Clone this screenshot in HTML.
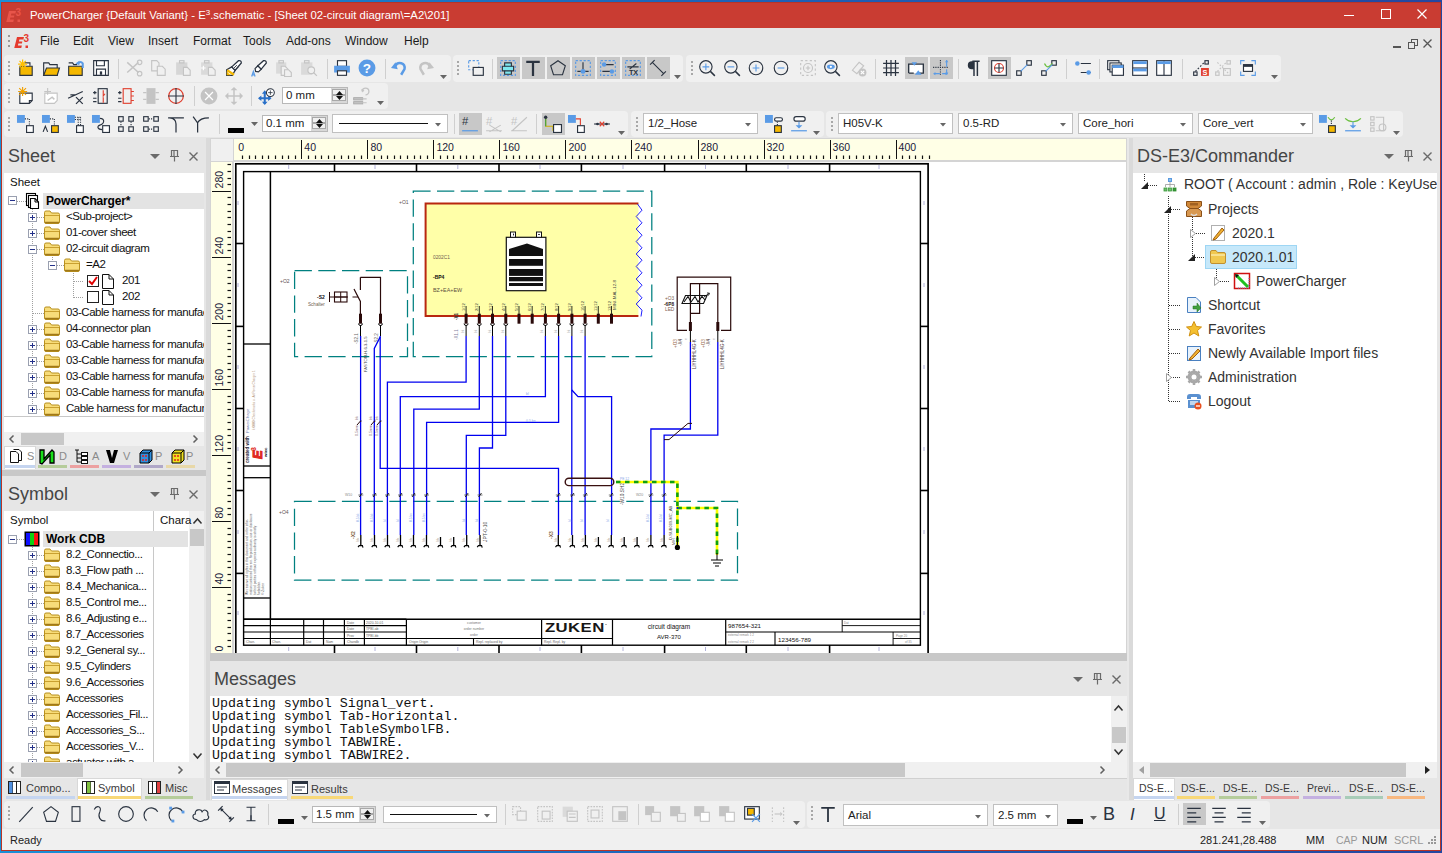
<!DOCTYPE html>
<html><head><meta charset="utf-8"><style>
html,body{margin:0;padding:0;width:1442px;height:853px;overflow:hidden;font-family:"Liberation Sans", sans-serif;}
body{background:linear-gradient(90deg,#1a8fd6 0%,#1e62b8 50%,#2447a0 100%);position:relative;}
svg{overflow:visible}
</style></head><body>
<div style="position:absolute;left:1px;top:2px;width:1440px;height:849px;background:#b83428;"></div><div style="position:absolute;left:2px;top:3px;width:1438px;height:847px;background:#e6e6e6;"></div><div style="position:absolute;left:2px;top:3px;width:1438px;height:25px;background:#c93c32;"></div><div style="position:absolute;left:30px;top:10.2px;font-size:11.35px;line-height:11.35px;color:#fff;white-space:nowrap;">PowerCharger {Default Variant} - E<sup style="font-size:8px;vertical-align:4px;line-height:0">3</sup>.schematic - [Sheet 02-circuit diagram\=A2\201]</div><svg style="position:absolute;left:5px;top:7px;" width="18" height="17" viewBox="0 0 18 17"><g transform="skewX(-14)"><path d="M5 4H12V6.5H8V8.5H11.5V10.5H8V12.5H12V15H5Z" fill="#e8554a"/></g><text x="10.5" y="9" font-size="10" font-weight="bold" fill="#e8554a" font-family="Liberation Sans">3</text><rect x="12.5" y="12.5" width="2.5" height="2.5" fill="#e8554a"/></svg><div style="position:absolute;left:1344px;top:15px;width:10px;height:1px;background:#fff;"></div><div style="position:absolute;left:1381px;top:9px;width:10px;height:10px;border:1px solid #fff;box-sizing:border-box;"></div><svg style="position:absolute;left:1417px;top:9px;" width="10" height="10" viewBox="0 0 10 10"><path d="M0.5 0.5L9.5 9.5M9.5 0.5L0.5 9.5" stroke="#fff" stroke-width="1.2"/></svg><div style="position:absolute;left:8px;top:35px;width:2px;height:2px;background:#999;"></div><div style="position:absolute;left:8px;top:40px;width:2px;height:2px;background:#999;"></div><div style="position:absolute;left:8px;top:45px;width:2px;height:2px;background:#999;"></div><svg style="position:absolute;left:13px;top:33px;" width="18" height="17" viewBox="0 0 18 17"><g transform="skewX(-14)"><path d="M5 4H12V6.5H8V8.5H11.5V10.5H8V12.5H12V15H5Z" fill="#e53b2e"/></g><text x="10.5" y="9" font-size="10" font-weight="bold" fill="#e53b2e" font-family="Liberation Sans">3</text><rect x="12.5" y="12.5" width="2.5" height="2.5" fill="#e53b2e"/></svg><div style="position:absolute;left:40px;top:35px;font-size:12px;line-height:12px;color:#1a1a1a;white-space:nowrap;">File</div><div style="position:absolute;left:73px;top:35px;font-size:12px;line-height:12px;color:#1a1a1a;white-space:nowrap;">Edit</div><div style="position:absolute;left:108px;top:35px;font-size:12px;line-height:12px;color:#1a1a1a;white-space:nowrap;">View</div><div style="position:absolute;left:148px;top:35px;font-size:12px;line-height:12px;color:#1a1a1a;white-space:nowrap;">Insert</div><div style="position:absolute;left:193px;top:35px;font-size:12px;line-height:12px;color:#1a1a1a;white-space:nowrap;">Format</div><div style="position:absolute;left:243px;top:35px;font-size:12px;line-height:12px;color:#1a1a1a;white-space:nowrap;">Tools</div><div style="position:absolute;left:286px;top:35px;font-size:12px;line-height:12px;color:#1a1a1a;white-space:nowrap;">Add-ons</div><div style="position:absolute;left:345px;top:35px;font-size:12px;line-height:12px;color:#1a1a1a;white-space:nowrap;">Window</div><div style="position:absolute;left:404px;top:35px;font-size:12px;line-height:12px;color:#1a1a1a;white-space:nowrap;">Help</div><div style="position:absolute;left:1393px;top:46px;width:8px;height:2px;background:#555;"></div><div style="position:absolute;left:1411px;top:39px;width:7px;height:7px;border:1px solid #555;box-sizing:border-box;"></div><div style="position:absolute;left:1408px;top:42px;width:7px;height:7px;border:1px solid #555;box-sizing:border-box;background:#e6e6e6;"></div><svg style="position:absolute;left:1423px;top:39px;" width="9" height="9" viewBox="0 0 9 9"><path d="M0.5 0.5L8.5 8.5M8.5 0.5L0.5 8.5" stroke="#555" stroke-width="1.3"/></svg><div style="position:absolute;left:4px;top:55px;width:447px;height:27px;background:#f0f0f0;border-radius:4px;"></div><div style="position:absolute;left:8px;top:61px;width:2px;height:2px;background:#a8a8a8;"></div><div style="position:absolute;left:8px;top:65px;width:2px;height:2px;background:#a8a8a8;"></div><div style="position:absolute;left:8px;top:69px;width:2px;height:2px;background:#a8a8a8;"></div><div style="position:absolute;left:8px;top:73px;width:2px;height:2px;background:#a8a8a8;"></div><svg style="position:absolute;left:18px;top:60px;overflow:visible" width="16" height="16" viewBox="0.9 0.9 14.2 14.2"><path d="M6.5 3.5H11.5V6" fill="#fff" stroke="#2a3340" stroke-width="1"/><path d="M2.5 6.5H13.5V14.5H2.5Z" fill="#f5b800" stroke="#2a3340" stroke-width="1"/><path d="M5 0.5V8.5M1 4.5H9M2.2 1.7L7.8 7.3M7.8 1.7L2.2 7.3" stroke="#ffc000" stroke-width="1.1"/></svg><svg style="position:absolute;left:43px;top:60px;overflow:visible" width="16" height="16" viewBox="0.9 0.9 14.2 14.2"><path d="M1.5 3.5H6L7 5H13.5V14.5H1.5Z" fill="none" stroke="#2a3340"/><path d="M1.5 14.5L4 8H15.5L13.5 14.5Z" fill="#f5b800" stroke="#2a3340"/></svg><svg style="position:absolute;left:68px;top:60px;overflow:visible" width="16" height="16" viewBox="0.9 0.9 14.2 14.2"><path d="M1.5 3.5H5L6 5H9" fill="#fff" stroke="#2a3340" stroke-width="1"/><path d="M1.5 6.5H13.5V14.5H1.5Z" fill="#f5b800" stroke="#2a3340" stroke-width="1"/><path d="M10 4Q12 1.5 14 4V8" stroke="#5a9be6" stroke-width="1.8" fill="none"/><path d="M7.5 4L11 1.5V5.5Z" fill="#5a9be6"/></svg><svg style="position:absolute;left:93px;top:60px;overflow:visible" width="16" height="16" viewBox="0.9 0.9 14.2 14.2"><path d="M1.5 1.5H14.5V14.5H1.5Z" fill="#fff" stroke="#2a3340" stroke-width="1"/><path d="M4 1.5V6H11V1.5M4 14.5V9H12V14.5" fill="none" stroke="#2a3340" stroke-width="1"/><rect x="7" y="11" width="2" height="3" fill="#2a3340"/></svg><svg style="position:absolute;left:126px;top:60px;overflow:visible" width="16" height="16" viewBox="0.9 0.9 14.2 14.2"><path d="M2 3L12 12M2 12L12 3" stroke="#c4c4c4" stroke-width="1.3"/><circle cx="13" cy="3" r="2" fill="none" stroke="#c4c4c4"/><circle cx="13" cy="13" r="2" fill="none" stroke="#c4c4c4"/></svg><svg style="position:absolute;left:151px;top:60px;overflow:visible" width="16" height="16" viewBox="0.9 0.9 14.2 14.2"><path d="M1.5 1.5H6L8 3.5V10.5H1.5Z" fill="none" stroke="#c4c4c4"/><path d="M6.5 6.5H11L13.5 9V14.5H6.5Z" fill="#f0f0f0" stroke="#c4c4c4"/></svg><svg style="position:absolute;left:176px;top:60px;overflow:visible" width="16" height="16" viewBox="0.9 0.9 14.2 14.2"><rect x="1" y="3" width="10" height="11" fill="#c4c4c4" opacity=".6"/><rect x="4" y="1.5" width="4" height="2" fill="none" stroke="#c4c4c4"/><path d="M7.5 7.5H11L13.5 10V14.5H7.5Z" fill="#f0f0f0" stroke="#c4c4c4"/></svg><svg style="position:absolute;left:201px;top:60px;overflow:visible" width="16" height="16" viewBox="0.9 0.9 14.2 14.2"><rect x="1" y="3" width="10" height="11" fill="#c4c4c4" opacity=".5"/><rect x="4" y="1.5" width="4" height="2" fill="none" stroke="#c4c4c4"/><path d="M3 6V10M1 8H5" stroke="#fff"/><path d="M7.5 7.5H11L13.5 10V14.5H7.5Z" fill="#f0f0f0" stroke="#c4c4c4"/></svg><svg style="position:absolute;left:226px;top:60px;overflow:visible" width="16" height="16" viewBox="0.9 0.9 14.2 14.2"><path d="M1.5 9.5L6 7L9 10L6.5 14.5H1.5Z" fill="#fff" stroke="#2a3340" stroke-width="1.1"/><path d="M1.5 14.5V11L5 14.5Z" fill="#f5b800"/><path d="M2 10L8 14" stroke="#f5b800" stroke-width="2"/><path d="M6 7L12 1.5Q14.5 1 14.5 3.5L9 10Z" fill="#fff" stroke="#2a3340" stroke-width="1.1"/><path d="M7.5 8.5L10.5 5.5M9 10L12 7" stroke="#2a3340" stroke-width=".8"/></svg><svg style="position:absolute;left:251px;top:60px;overflow:visible" width="16" height="16" viewBox="0.9 0.9 14.2 14.2"><path d="M4.5 8.5L7 6L10 9L7.5 11.5L5 11Z" fill="#fff" stroke="#2a3340" stroke-width="1.1"/><path d="M7 6L12 1.5Q14.5 1 14.5 3.5L10 9Z" fill="#fff" stroke="#2a3340" stroke-width="1.1"/><path d="M1.5 15.5L3 11L4.5 15.5M2 14H4" stroke="#5a9be6" fill="none" stroke-width="1.1"/></svg><svg style="position:absolute;left:276px;top:60px;overflow:visible" width="16" height="16" viewBox="0.9 0.9 14.2 14.2"><rect x="1" y="3" width="9" height="10" fill="#c4c4c4" opacity=".5"/><rect x="3.5" y="1.5" width="4" height="2" fill="none" stroke="#c4c4c4"/><path d="M5.5 6.5H9L11.5 9V14.5H5.5Z" fill="#f0f0f0" stroke="#c4c4c4"/><path d="M8.5 9.5H12L14.5 12V15.5H8.5Z" fill="#f0f0f0" stroke="#c4c4c4"/></svg><svg style="position:absolute;left:301px;top:60px;overflow:visible" width="16" height="16" viewBox="0.9 0.9 14.2 14.2"><rect x="1" y="3" width="10" height="11" fill="#c4c4c4" opacity=".5"/><rect x="4" y="1.5" width="4" height="2" fill="none" stroke="#c4c4c4"/><circle cx="10" cy="10" r="3" fill="#f0f0f0" stroke="#c4c4c4" stroke-width="1"/><path d="M12 12L15 15" stroke="#c4c4c4" stroke-width="1.1"/></svg><svg style="position:absolute;left:334px;top:60px;overflow:visible" width="16" height="16" viewBox="0.9 0.9 14.2 14.2"><rect x="4" y="1.5" width="8" height="5" fill="#fff" stroke="#2a3340" stroke-width="1"/><rect x="1" y="6" width="14" height="6" fill="#5a9be6"/><rect x="4" y="10.5" width="8" height="4" fill="#fff" stroke="#2a3340" stroke-width="1"/></svg><svg style="position:absolute;left:359px;top:60px;overflow:visible" width="16" height="16" viewBox="0.9 0.9 14.2 14.2"><circle cx="8" cy="8" r="7.5" fill="#5a9be6"/><text x="8" y="12.5" font-size="12" font-weight="bold" text-anchor="middle" fill="#fff" font-family="Liberation Sans">?</text></svg><svg style="position:absolute;left:392px;top:60px;overflow:visible" width="16" height="16" viewBox="0.9 0.9 14.2 14.2"><path d="M4 6C6 2 13 3 12 9L9 14" stroke="#5a9be6" stroke-width="2.2" fill="none"/><path d="M0 8L6 9L4 3Z" fill="#5a9be6"/></svg><svg style="position:absolute;left:417px;top:60px;overflow:visible" width="16" height="16" viewBox="0.9 0.9 14.2 14.2"><path d="M12 6C10 2 3 3 4 9L7 14" stroke="#c4c4c4" stroke-width="2.2" fill="none"/><path d="M16 8L10 9L12 3Z" fill="#c4c4c4"/></svg><div style="position:absolute;left:118px;top:59px;width:1px;height:20px;background:#cfcfcf;"></div><div style="position:absolute;left:327px;top:59px;width:1px;height:20px;background:#cfcfcf;"></div><div style="position:absolute;left:385px;top:59px;width:1px;height:20px;background:#cfcfcf;"></div><svg style="position:absolute;left:440px;top:75px;" width="7" height="4" viewBox="0 0 7 4"><path d="M0 0H7L3.5 4.0Z" fill="#666"/></svg><div style="position:absolute;left:453px;top:55px;width:230px;height:27px;background:#f0f0f0;border-radius:4px;"></div><div style="position:absolute;left:457px;top:61px;width:2px;height:2px;background:#a8a8a8;"></div><div style="position:absolute;left:457px;top:65px;width:2px;height:2px;background:#a8a8a8;"></div><div style="position:absolute;left:457px;top:69px;width:2px;height:2px;background:#a8a8a8;"></div><div style="position:absolute;left:457px;top:73px;width:2px;height:2px;background:#a8a8a8;"></div><svg style="position:absolute;left:468px;top:60px;overflow:visible" width="16" height="16" viewBox="0.9 0.9 14.2 14.2"><rect x="1.5" y="1.5" width="9" height="8" fill="none" stroke="#5a9be6" stroke-dasharray="2 1.5"/><rect x="5.5" y="7.5" width="9" height="7" fill="#f0f0f0" stroke="#2a3340" stroke-width="1"/></svg><div style="position:absolute;left:492px;top:59px;width:1px;height:20px;background:#cfcfcf;"></div><div style="position:absolute;left:497px;top:57px;width:23px;height:22px;background:#c8c8c8;"></div><svg style="position:absolute;left:500px;top:60px;overflow:visible" width="16" height="16" viewBox="0.9 0.9 14.2 14.2"><rect x="1.5" y="1.5" width="13" height="13" fill="none" stroke="#5a9be6" stroke-dasharray="2 1.5"/><path d="M5 3.5H11V6.5H13V10.5H11V13.5H5V10.5H3V6.5H5Z" fill="#7ee8f0" stroke="#2a3340" stroke-width="1"/><path d="M5 6.5H11M5 10.5H11" stroke="#2a3340"/></svg><div style="position:absolute;left:522px;top:57px;width:23px;height:22px;background:#c8c8c8;"></div><svg style="position:absolute;left:525px;top:60px;overflow:visible" width="16" height="16" viewBox="0.9 0.9 14.2 14.2"><path d="M2 2.5H14M8 2.5V15" stroke="#2a3340" stroke-width="2"/></svg><div style="position:absolute;left:547px;top:57px;width:23px;height:22px;background:#c8c8c8;"></div><svg style="position:absolute;left:550px;top:60px;overflow:visible" width="16" height="16" viewBox="0.9 0.9 14.2 14.2"><path d="M8 1.5L14.5 6L12 14H4L1.5 6Z" fill="none" stroke="#2a3340" stroke-width="1"/></svg><div style="position:absolute;left:572px;top:57px;width:23px;height:22px;background:#c8c8c8;"></div><svg style="position:absolute;left:575px;top:60px;overflow:visible" width="16" height="16" viewBox="0.9 0.9 14.2 14.2"><rect x="1.5" y="1.5" width="13" height="13" fill="none" stroke="#5a9be6" stroke-dasharray="2 1.5"/><path d="M8 3V11M3 11H13" stroke="#2a3340"/><circle cx="8" cy="11" r="2.2" fill="#5a9be6"/></svg><div style="position:absolute;left:597px;top:57px;width:23px;height:22px;background:#c8c8c8;"></div><svg style="position:absolute;left:600px;top:60px;overflow:visible" width="16" height="16" viewBox="0.9 0.9 14.2 14.2"><rect x="1.5" y="1.5" width="13" height="13" fill="none" stroke="#5a9be6" stroke-dasharray="2 1.5"/><path d="M4 5H13M3 11H12" stroke="#2a3340"/><circle cx="4.5" cy="5" r="2" fill="#5a9be6"/><circle cx="11.5" cy="11" r="2" fill="#5a9be6"/></svg><div style="position:absolute;left:622px;top:57px;width:23px;height:22px;background:#c8c8c8;"></div><svg style="position:absolute;left:625px;top:60px;overflow:visible" width="16" height="16" viewBox="0.9 0.9 14.2 14.2"><rect x="1.5" y="1.5" width="13" height="13" fill="none" stroke="#5a9be6" stroke-dasharray="2 1.5"/><path d="M3 7H13M5 9L11 4" stroke="#2a3340"/><text x="8.5" y="14" font-size="6.5" font-weight="bold" text-anchor="middle" fill="#2a3340" font-family="Liberation Sans">TX</text></svg><div style="position:absolute;left:647px;top:57px;width:23px;height:22px;background:#c8c8c8;"></div><svg style="position:absolute;left:650px;top:60px;overflow:visible" width="16" height="16" viewBox="0.9 0.9 14.2 14.2"><path d="M3 3L13 13M1 5L5 1M11 15L15 11" stroke="#2a3340" stroke-width="1"/></svg><svg style="position:absolute;left:674px;top:75px;" width="7" height="4" viewBox="0 0 7 4"><path d="M0 0H7L3.5 4.0Z" fill="#666"/></svg><div style="position:absolute;left:686px;top:55px;width:595px;height:27px;background:#f0f0f0;border-radius:4px;"></div><div style="position:absolute;left:691px;top:61px;width:2px;height:2px;background:#a8a8a8;"></div><div style="position:absolute;left:691px;top:65px;width:2px;height:2px;background:#a8a8a8;"></div><div style="position:absolute;left:691px;top:69px;width:2px;height:2px;background:#a8a8a8;"></div><div style="position:absolute;left:691px;top:73px;width:2px;height:2px;background:#a8a8a8;"></div><svg style="position:absolute;left:699px;top:60px;overflow:visible" width="16" height="16" viewBox="0.9 0.9 14.2 14.2"><circle cx="7" cy="7" r="5.5" fill="none" stroke="#2a3340" stroke-width="1"/><path d="M11 11L15 15" stroke="#2a3340" stroke-width="1.3"/><path d="M7 4V10M4 7H10" stroke="#5a9be6" stroke-width="1"/></svg><svg style="position:absolute;left:724px;top:60px;overflow:visible" width="16" height="16" viewBox="0.9 0.9 14.2 14.2"><circle cx="7" cy="7" r="5.5" fill="none" stroke="#2a3340" stroke-width="1"/><path d="M11 11L15 15" stroke="#2a3340" stroke-width="1.3"/><path d="M4 7H10" stroke="#5a9be6" stroke-width="1"/></svg><svg style="position:absolute;left:748px;top:60px;overflow:visible" width="16" height="16" viewBox="0.9 0.9 14.2 14.2"><circle cx="8" cy="8" r="6" fill="none" stroke="#2a3340" stroke-width="1"/><path d="M8 5V11M5 8H11" stroke="#5a9be6" stroke-width="1"/></svg><svg style="position:absolute;left:773px;top:60px;overflow:visible" width="16" height="16" viewBox="0.9 0.9 14.2 14.2"><circle cx="8" cy="8" r="6" fill="none" stroke="#2a3340" stroke-width="1"/><path d="M5 8H11" stroke="#5a9be6" stroke-width="1"/></svg><svg style="position:absolute;left:800px;top:60px;overflow:visible" width="16" height="16" viewBox="0.9 0.9 14.2 14.2"><rect x="1.5" y="1.5" width="13" height="13" fill="none" stroke="#c4c4c4" stroke-dasharray="2 2"/><circle cx="8" cy="8" r="4" fill="none" stroke="#c4c4c4"/><path d="M8 6V10M6 8H10" stroke="#c4c4c4"/></svg><svg style="position:absolute;left:824px;top:60px;overflow:visible" width="16" height="16" viewBox="0.9 0.9 14.2 14.2"><circle cx="7" cy="7" r="5.5" fill="none" stroke="#2a3340" stroke-width="1"/><path d="M11 11L15 15" stroke="#2a3340" stroke-width="1.3"/><ellipse cx="7" cy="7" rx="3.5" ry="2" fill="#5a9be6"/><circle cx="7" cy="7" r="1" fill="#fff"/></svg><svg style="position:absolute;left:850px;top:60px;overflow:visible" width="16" height="16" viewBox="0.9 0.9 14.2 14.2"><path d="M3 10L9 3L13 6L7 13Z" fill="none" stroke="#c4c4c4" stroke-width="1"/><circle cx="12" cy="12" r="3.5" fill="#c4c4c4"/><path d="M10.5 10.5L13.5 13.5M13.5 10.5L10.5 13.5" stroke="#fff"/></svg><svg style="position:absolute;left:883px;top:60px;overflow:visible" width="16" height="16" viewBox="0.9 0.9 14.2 14.2"><path d="M1 4H15M1 8H15M1 12H15M4 1V15M8 1V15M12 1V15" stroke="#2a3340" stroke-width="1.1"/></svg><div style="position:absolute;left:875px;top:59px;width:1px;height:20px;background:#cfcfcf;"></div><div style="position:absolute;left:905px;top:57px;width:23px;height:22px;background:#c8c8c8;"></div><svg style="position:absolute;left:908px;top:60px;overflow:visible" width="16" height="16" viewBox="0.9 0.9 14.2 14.2"><path d="M1.5 12.5V4.5H14.5V12.5H10M6 12.5H1.5" fill="#fff" stroke="#2a3340" stroke-width="1.2"/><path d="M4 3H9L6.5 6Z" fill="#5a9be6"/><path d="M7 14H13L10 10Z" fill="#5a9be6"/></svg><div style="position:absolute;left:930px;top:57px;width:23px;height:22px;background:#c8c8c8;"></div><svg style="position:absolute;left:933px;top:60px;overflow:visible" width="16" height="16" viewBox="0.9 0.9 14.2 14.2"><path d="M1 7.5H14M7.5 1V14" stroke="#2a3340" stroke-dasharray="1 1"/><path d="M13 1V7M13 9V14M2 13H7M9 13H14" stroke="#5a9be6"/><path d="M11.5 3L13 1L14.5 3ZM11.5 12L13 14L14.5 12ZM3 11.5L1 13L3 14.5ZM12 11.5L14 13L12 14.5Z" fill="#5a9be6"/></svg><div style="position:absolute;left:958px;top:59px;width:1px;height:20px;background:#cfcfcf;"></div><svg style="position:absolute;left:966px;top:60px;overflow:visible" width="16" height="16" viewBox="0.9 0.9 14.2 14.2"><path d="M8 2V15M11 2V15M13 2H6.5" stroke="#2a3340" stroke-width="1.3" fill="none"/><path d="M8 2H6A3.5 3.5 0 0 0 6 9H8Z" fill="#2a3340"/></svg><div style="position:absolute;left:988px;top:57px;width:23px;height:22px;background:#c8c8c8;"></div><svg style="position:absolute;left:991px;top:60px;overflow:visible" width="16" height="16" viewBox="0.9 0.9 14.2 14.2"><rect x="1.5" y="1.5" width="13" height="13" fill="#fff" stroke="#2a3340" stroke-width="1"/><circle cx="8" cy="8" r="4" fill="none" stroke="#e04030" stroke-width="1"/><path d="M8 4V12M4 8H12" stroke="#2a3340"/></svg><svg style="position:absolute;left:1016px;top:60px;overflow:visible" width="16" height="16" viewBox="0.9 0.9 14.2 14.2"><rect x="1.5" y="10.5" width="4" height="4" fill="none" stroke="#2a3340"/><rect x="10.5" y="1.5" width="4" height="4" fill="none" stroke="#2a3340"/><path d="M5 11L11 5" stroke="#5a9be6" stroke-width="1"/></svg><svg style="position:absolute;left:1041px;top:60px;overflow:visible" width="16" height="16" viewBox="0.9 0.9 14.2 14.2"><rect x="1.5" y="10.5" width="4" height="4" fill="none" stroke="#2a3340"/><rect x="10.5" y="1.5" width="4" height="4" fill="none" stroke="#2a3340"/><path d="M4 4C6 8 8 8 11 4" stroke="#6cbf40" stroke-width="1.1" fill="none"/><path d="M5 11L11 5" stroke="#5a9be6" stroke-width="1"/></svg><svg style="position:absolute;left:1075px;top:60px;overflow:visible" width="16" height="16" viewBox="0.9 0.9 14.2 14.2"><path d="M6 4H15M6 12H15" stroke="#2a3340" stroke-width="1"/><circle cx="3" cy="4" r="2" fill="#5a9be6"/><circle cx="13" cy="12" r="2" fill="#5a9be6"/></svg><svg style="position:absolute;left:1107px;top:60px;overflow:visible" width="16" height="16" viewBox="0.9 0.9 14.2 14.2"><rect x="1.5" y="1.5" width="10" height="8" fill="#fff" stroke="#2a3340" stroke-width="1"/><rect x="3.5" y="3.5" width="10" height="8" fill="#fff" stroke="#2a3340" stroke-width="1"/><rect x="5.5" y="5.5" width="10" height="9" fill="#fff" stroke="#2a3340" stroke-width="1"/><rect x="5.5" y="5.5" width="10" height="2.5" fill="#5a9be6"/></svg><svg style="position:absolute;left:1132px;top:60px;overflow:visible" width="16" height="16" viewBox="0.9 0.9 14.2 14.2"><rect x="1.5" y="1.5" width="13" height="13" fill="#fff" stroke="#2a3340" stroke-width="1"/><path d="M1.5 8H14.5" stroke="#2a3340" stroke-width="1"/><rect x="2" y="2" width="12" height="2.5" fill="#5a9be6"/><rect x="2" y="8.5" width="12" height="2.5" fill="#5a9be6"/></svg><svg style="position:absolute;left:1156px;top:60px;overflow:visible" width="16" height="16" viewBox="0.9 0.9 14.2 14.2"><rect x="1.5" y="1.5" width="13" height="13" fill="#fff" stroke="#2a3340" stroke-width="1"/><path d="M8 1.5V14.5" stroke="#2a3340" stroke-width="1"/><rect x="2" y="2" width="12" height="2.5" fill="#5a9be6"/></svg><svg style="position:absolute;left:1193px;top:60px;overflow:visible" width="16" height="16" viewBox="0.9 0.9 14.2 14.2"><rect x="1.5" y="11.5" width="3" height="3" fill="none" stroke="#2a3340"/><rect x="11.5" y="1.5" width="3" height="3" fill="none" stroke="#2a3340"/><path d="M3 11L11 3" stroke="#2a3340" stroke-dasharray="1.5 1.5"/><rect x="8" y="8" width="7" height="7" fill="#e04030"/><text x="11.5" y="14" font-size="6.5" font-weight="bold" text-anchor="middle" fill="#fff" font-family="Liberation Sans">S</text></svg><svg style="position:absolute;left:1215px;top:60px;overflow:visible" width="16" height="16" viewBox="0.9 0.9 14.2 14.2"><rect x="1.5" y="11.5" width="3" height="3" fill="none" stroke="#c4c4c4"/><rect x="11.5" y="1.5" width="3" height="3" fill="none" stroke="#c4c4c4"/><path d="M3 3L13 13M3 11L11 3" stroke="#c4c4c4" stroke-dasharray="1.5 1.5"/><rect x="8.5" y="8.5" width="6" height="6" fill="none" stroke="#c4c4c4"/></svg><svg style="position:absolute;left:1240px;top:60px;overflow:visible" width="16" height="16" viewBox="0.9 0.9 14.2 14.2"><path d="M1.5 5V1.5H5M11 1.5H14.5V5M14.5 11V14.5H11M5 14.5H1.5V11" fill="none" stroke="#5a9be6" stroke-width="1"/><rect x="4" y="5" width="8" height="6" fill="#fff" stroke="#2a3340" stroke-width="1"/><rect x="4" y="5" width="8" height="2" fill="#2a3340"/></svg><div style="position:absolute;left:1066px;top:59px;width:1px;height:20px;background:#cfcfcf;"></div><div style="position:absolute;left:1099px;top:59px;width:1px;height:20px;background:#cfcfcf;"></div><div style="position:absolute;left:1182px;top:59px;width:1px;height:20px;background:#cfcfcf;"></div><svg style="position:absolute;left:1271px;top:75px;" width="7" height="4" viewBox="0 0 7 4"><path d="M0 0H7L3.5 4.0Z" fill="#666"/></svg><div style="position:absolute;left:4px;top:83px;width:384px;height:26px;background:#f0f0f0;border-radius:4px;"></div><div style="position:absolute;left:8px;top:89px;width:2px;height:2px;background:#a8a8a8;"></div><div style="position:absolute;left:8px;top:93px;width:2px;height:2px;background:#a8a8a8;"></div><div style="position:absolute;left:8px;top:97px;width:2px;height:2px;background:#a8a8a8;"></div><div style="position:absolute;left:8px;top:101px;width:2px;height:2px;background:#a8a8a8;"></div><svg style="position:absolute;left:18px;top:88px;overflow:visible" width="16" height="16" viewBox="0.9 0.9 14.2 14.2"><path d="M2.5 5.5H13.5V12L11 14.5H2.5Z" fill="#fff" stroke="#2a3340" stroke-width="1"/><path d="M11 14.5V12H13.5" fill="none" stroke="#2a3340"/><path d="M5 0V8M1 4H9M2 1L8 7M8 1L2 7" stroke="#f0a000" stroke-width="1"/></svg><svg style="position:absolute;left:43px;top:88px;overflow:visible" width="16" height="16" viewBox="0.9 0.9 14.2 14.2"><path d="M2.5 5.5H13.5V12L11 14.5H2.5Z" fill="#fff" stroke="#c4c4c4" stroke-width="1"/><path d="M5 1V7M2 4H8" stroke="#c4c4c4"/><path d="M5 12L9 9L11 11" stroke="#c4c4c4" stroke-width="1.3" fill="none"/></svg><svg style="position:absolute;left:68px;top:88px;overflow:visible" width="16" height="16" viewBox="0.9 0.9 14.2 14.2"><path d="M1 10L14 4M3 7H8" stroke="#2a3340" stroke-width="1.1"/><path d="M8 9L14 15M14 9L8 15" stroke="#2a3340" stroke-width="1.1"/></svg><svg style="position:absolute;left:93px;top:88px;overflow:visible" width="16" height="16" viewBox="0.9 0.9 14.2 14.2"><rect x="5.5" y="1.5" width="8" height="13" fill="none" stroke="#2a3340" stroke-width="1"/><path d="M10 3V8L11.5 6M10 9V14" stroke="#e04030" stroke-width="1" fill="none"/><path d="M1 5H4M2.5 3.5V6.5M1 10H4M1 13H4" stroke="#2a3340"/></svg><svg style="position:absolute;left:118px;top:88px;overflow:visible" width="16" height="16" viewBox="0.9 0.9 14.2 14.2"><rect x="5.5" y="1.5" width="7" height="13" fill="none" stroke="#e04030" stroke-width="1"/><path d="M12.5 4H15M12.5 8H15M12.5 12H15" stroke="#e04030"/><path d="M1 5H4M2.5 3.5V6.5M1 10H4M1 13H4" stroke="#2a3340"/></svg><svg style="position:absolute;left:143px;top:88px;overflow:visible" width="16" height="16" viewBox="0.9 0.9 14.2 14.2"><rect x="4" y="1" width="8" height="14" fill="#c4c4c4"/><path d="M1 5H4M12 5H15M1 11H4M12 11H15" stroke="#c4c4c4"/></svg><svg style="position:absolute;left:168px;top:88px;overflow:visible" width="16" height="16" viewBox="0.9 0.9 14.2 14.2"><circle cx="8" cy="8" r="6.5" fill="none" stroke="#e04030" stroke-width="1.1"/><path d="M8 1V15M1 8H15" stroke="#2a3340" stroke-width="1"/></svg><svg style="position:absolute;left:201px;top:88px;overflow:visible" width="16" height="16" viewBox="0.9 0.9 14.2 14.2"><circle cx="8" cy="8" r="7.5" fill="#c4c4c4"/><path d="M4.5 4.5L11.5 11.5M11.5 4.5L4.5 11.5" stroke="#fff" stroke-width="1.1"/></svg><svg style="position:absolute;left:226px;top:88px;overflow:visible" width="16" height="16" viewBox="0.9 0.9 14.2 14.2"><path d="M8 1V15M1 8H15" stroke="#c4c4c4" stroke-width="1.3"/><path d="M8 0L5 3H11ZM8 16L5 13H11ZM0 8L3 5V11ZM16 8L13 5V11Z" fill="#c4c4c4"/></svg><svg style="position:absolute;left:259px;top:88px;overflow:visible" width="16" height="16" viewBox="0.9 0.9 14.2 14.2"><path d="M6 5V15M1 10H11" stroke="#2a70c8" stroke-width="1.8"/><path d="M6 3L3.5 6H8.5ZM6 16L3.5 13H8.5ZM0 10L3 7.5V12.5ZM12 10L9 7.5V12.5Z" fill="#2a70c8"/><circle cx="11" cy="5" r="3.5" fill="#fff" stroke="#2a3340" stroke-width=".9"/><path d="M11 3V7M9 5H13" stroke="#2a3340" stroke-width=".7"/></svg><svg style="position:absolute;left:353px;top:88px;overflow:visible" width="16" height="16" viewBox="0.9 0.9 14.2 14.2"><rect x="1.5" y="9.5" width="8" height="2" fill="#c4c4c4" stroke="#a8a8a8" stroke-width=".8"/><rect x="1.5" y="13" width="8" height="2" fill="#c4c4c4" stroke="#a8a8a8" stroke-width=".8"/><path d="M9 10.5H13M9 14H13" stroke="#c4c4c4"/><path d="M9 4A3 3 0 1 1 12 7" stroke="#c4c4c4" fill="none" stroke-width="1.2"/><path d="M8 2L9.5 5L11 3Z" fill="#c4c4c4"/></svg><div style="position:absolute;left:194px;top:86px;width:1px;height:20px;background:#cfcfcf;"></div><div style="position:absolute;left:251px;top:86px;width:1px;height:20px;background:#cfcfcf;"></div><div style="position:absolute;left:282px;top:87px;width:66px;height:17px;background:#fff;border:1px solid #b8b8b8;box-sizing:border-box;"></div><div style="position:absolute;left:286px;top:90.1px;font-size:11.5px;line-height:11.5px;color:#222;white-space:nowrap;">0 mm</div><div style="position:absolute;left:331px;top:88px;width:16px;height:15px;background:#d8d8d8;"></div><div style="position:absolute;left:332px;top:89px;width:14px;height:6px;background:#f0f0f0;border:1px solid #a8a8a8;box-sizing:border-box;"></div><div style="position:absolute;left:332px;top:95px;width:14px;height:6px;background:#f0f0f0;border:1px solid #a8a8a8;box-sizing:border-box;"></div><svg style="position:absolute;left:336px;top:91px;" width="7" height="4" viewBox="0 0 7 4"><path d="M0 4H7L3.5 0Z" fill="#111"/></svg><svg style="position:absolute;left:336px;top:96px;" width="7" height="4" viewBox="0 0 7 4"><path d="M0 0H7L3.5 4Z" fill="#111"/></svg><svg style="position:absolute;left:377px;top:101px;" width="7" height="4" viewBox="0 0 7 4"><path d="M0 0H7L3.5 4.0Z" fill="#666"/></svg><div style="position:absolute;left:4px;top:111px;width:624px;height:26px;background:#f0f0f0;border-radius:4px;"></div><div style="position:absolute;left:8px;top:117px;width:2px;height:2px;background:#a8a8a8;"></div><div style="position:absolute;left:8px;top:121px;width:2px;height:2px;background:#a8a8a8;"></div><div style="position:absolute;left:8px;top:125px;width:2px;height:2px;background:#a8a8a8;"></div><div style="position:absolute;left:8px;top:129px;width:2px;height:2px;background:#a8a8a8;"></div><svg style="position:absolute;left:18px;top:116px;overflow:visible" width="16" height="16" viewBox="0.9 0.9 14.2 14.2"><rect x="0" y="0" width="7" height="7" fill="#5a9be6"/><path d="M7 3.5H11V9" stroke="#2a3340" stroke-dasharray="1 1" fill="none"/><rect x="8.5" y="9.5" width="6" height="6" fill="#fff" stroke="#2a3340" stroke-width="1"/></svg><svg style="position:absolute;left:43px;top:116px;overflow:visible" width="16" height="16" viewBox="0.9 0.9 14.2 14.2"><rect x="0" y="0" width="7" height="7" fill="#5a9be6"/><path d="M7 3.5H11V9" stroke="#2a3340" stroke-dasharray="1 1" fill="none"/><rect x="8.5" y="9.5" width="6" height="6" fill="#f5b800" stroke="#2a3340" stroke-width="1"/><path d="M1 15L3 10L5 15" stroke="#2a3340" fill="none"/></svg><svg style="position:absolute;left:68px;top:116px;overflow:visible" width="16" height="16" viewBox="0.9 0.9 14.2 14.2"><rect x="0" y="0" width="7" height="7" fill="#5a9be6"/><path d="M7 2H12M7 4H12M10 2V9M12 2V9" stroke="#2a3340" stroke-dasharray="1 1" fill="none"/><rect x="8.5" y="9.5" width="6" height="6" fill="#fff" stroke="#2a3340" stroke-width="1"/></svg><svg style="position:absolute;left:93px;top:116px;overflow:visible" width="16" height="16" viewBox="0.9 0.9 14.2 14.2"><rect x="0" y="0" width="7" height="7" fill="#5a9be6"/><path d="M7 3C12 3 11 8 7 9C4 10 5 13 9 13" stroke="#2a3340" stroke-width="1" fill="none"/><rect x="9.5" y="9.5" width="6" height="6" fill="#fff" stroke="#2a3340" stroke-width="1"/></svg><svg style="position:absolute;left:118px;top:116px;overflow:visible" width="16" height="16" viewBox="0.9 0.9 14.2 14.2"><rect x="1.5" y="1.5" width="4" height="4" fill="none" stroke="#2a3340"/><rect x="10.5" y="1.5" width="4" height="4" fill="none" stroke="#2a3340"/><rect x="1.5" y="10.5" width="4" height="4" fill="none" stroke="#2a3340"/><rect x="10.5" y="10.5" width="4" height="4" fill="none" stroke="#2a3340"/><path d="M3.5 6V10M12.5 6V10" stroke="#2a3340" stroke-dasharray="1 1"/></svg><svg style="position:absolute;left:143px;top:116px;overflow:visible" width="16" height="16" viewBox="0.9 0.9 14.2 14.2"><rect x="1.5" y="1.5" width="4" height="4" fill="none" stroke="#2a3340"/><rect x="10.5" y="1.5" width="4" height="4" fill="none" stroke="#2a3340"/><rect x="1.5" y="10.5" width="4" height="4" fill="none" stroke="#2a3340"/><rect x="10.5" y="10.5" width="4" height="4" fill="none" stroke="#2a3340"/><path d="M6 3.5H10M6 12.5H10" stroke="#2a3340" stroke-dasharray="1 1"/></svg><svg style="position:absolute;left:168px;top:116px;overflow:visible" width="16" height="16" viewBox="0.9 0.9 14.2 14.2"><path d="M1 2.5H15M2.5 2.5Q8 3 8 8V15.5" stroke="#2a3340" stroke-width="1.1" fill="none"/></svg><svg style="position:absolute;left:193px;top:116px;overflow:visible" width="16" height="16" viewBox="0.9 0.9 14.2 14.2"><path d="M1 1.5L5 7V15.5M5 7Q7 2.5 15 2.5" stroke="#2a3340" stroke-width="1.1" fill="none"/></svg><div style="position:absolute;left:219px;top:114px;width:1px;height:20px;background:#cfcfcf;"></div><div style="position:absolute;left:228px;top:128px;width:16px;height:5px;background:#000;"></div><svg style="position:absolute;left:251px;top:122px;" width="7" height="4" viewBox="0 0 7 4"><path d="M0 0H7L3.5 4.0Z" fill="#666"/></svg><div style="position:absolute;left:262px;top:115px;width:66px;height:17px;background:#fff;border:1px solid #b8b8b8;box-sizing:border-box;"></div><div style="position:absolute;left:266px;top:118.1px;font-size:11.5px;line-height:11.5px;color:#222;white-space:nowrap;">0.1 mm</div><div style="position:absolute;left:311px;top:116px;width:16px;height:15px;background:#d8d8d8;"></div><div style="position:absolute;left:312px;top:117px;width:14px;height:6px;background:#f0f0f0;border:1px solid #a8a8a8;box-sizing:border-box;"></div><div style="position:absolute;left:312px;top:123px;width:14px;height:6px;background:#f0f0f0;border:1px solid #a8a8a8;box-sizing:border-box;"></div><svg style="position:absolute;left:316px;top:119px;" width="7" height="4" viewBox="0 0 7 4"><path d="M0 4H7L3.5 0Z" fill="#111"/></svg><svg style="position:absolute;left:316px;top:124px;" width="7" height="4" viewBox="0 0 7 4"><path d="M0 0H7L3.5 4Z" fill="#111"/></svg><div style="position:absolute;left:332px;top:114px;width:116px;height:19px;background:#fff;border:1px solid #c0c0c0;box-sizing:border-box;"></div><div style="position:absolute;left:339px;top:123px;width:89px;height:1px;background:#111;"></div><svg style="position:absolute;left:435px;top:123px;" width="6" height="4" viewBox="0 0 6 4"><path d="M0 0H6L3.0 3.4Z" fill="#666"/></svg><div style="position:absolute;left:454px;top:114px;width:1px;height:20px;background:#cfcfcf;"></div><div style="position:absolute;left:459px;top:113px;width:23px;height:22px;background:#c8c8c8;"></div><svg style="position:absolute;left:462px;top:116px;overflow:visible" width="16" height="16" viewBox="0.9 0.9 14.2 14.2"><text x="1" y="9" font-size="10" fill="#2a3340" font-family="Liberation Sans">#</text><path d="M1 14H15" stroke="#5a9be6" stroke-width="1.1"/></svg><svg style="position:absolute;left:486px;top:116px;overflow:visible" width="16" height="16" viewBox="0.9 0.9 14.2 14.2"><text x="1" y="9" font-size="10" fill="#c4c4c4" font-family="Liberation Sans">#</text><path d="M4 9L14 15M14 9L4 15M1 14H15" stroke="#c4c4c4"/></svg><svg style="position:absolute;left:511px;top:116px;overflow:visible" width="16" height="16" viewBox="0.9 0.9 14.2 14.2"><text x="1" y="9" font-size="10" fill="#c4c4c4" font-family="Liberation Sans">#</text><path d="M2 14L15 2M1 14H15" stroke="#c4c4c4"/></svg><div style="position:absolute;left:536px;top:114px;width:1px;height:20px;background:#cfcfcf;"></div><div style="position:absolute;left:542px;top:113px;width:23px;height:22px;background:#c8c8c8;"></div><svg style="position:absolute;left:545px;top:116px;overflow:visible" width="16" height="16" viewBox="0.9 0.9 14.2 14.2"><path d="M1.5 2V10H8V14" stroke="#d0b000" stroke-width="1" fill="none"/><path d="M1.5 2V10" stroke="#40a040" stroke-width="1"/><circle cx="1.5" cy="2" r="1.5" fill="#2a3340"/><rect x="8.5" y="8.5" width="7" height="7" fill="#fff" stroke="#2a3340" stroke-width="1"/></svg><svg style="position:absolute;left:569px;top:116px;overflow:visible" width="16" height="16" viewBox="0.9 0.9 14.2 14.2"><rect x="0" y="0" width="7" height="7" fill="#5a9be6"/><path d="M7 3.5H11V9" stroke="#e04030" stroke-width="1" fill="none"/><rect x="8.5" y="9.5" width="6" height="6" fill="#fff" stroke="#2a3340" stroke-width="1"/></svg><svg style="position:absolute;left:594px;top:116px;overflow:visible" width="16" height="16" viewBox="0.9 0.9 14.2 14.2"><path d="M1 8H15" stroke="#2a3340" stroke-width="1"/><path d="M6 6L10 10M10 6L6 10" stroke="#e04030" stroke-width="1"/><circle cx="4" cy="8" r="1.2" fill="#2a3340"/><circle cx="12" cy="8" r="1.2" fill="#2a3340"/></svg><svg style="position:absolute;left:618px;top:131px;" width="7" height="4" viewBox="0 0 7 4"><path d="M0 0H7L3.5 4.0Z" fill="#666"/></svg><div style="position:absolute;left:631px;top:111px;width:193px;height:26px;background:#f0f0f0;border-radius:4px;"></div><div style="position:absolute;left:636px;top:117px;width:2px;height:2px;background:#a8a8a8;"></div><div style="position:absolute;left:636px;top:121px;width:2px;height:2px;background:#a8a8a8;"></div><div style="position:absolute;left:636px;top:125px;width:2px;height:2px;background:#a8a8a8;"></div><div style="position:absolute;left:636px;top:129px;width:2px;height:2px;background:#a8a8a8;"></div><div style="position:absolute;left:643px;top:113px;width:115px;height:21px;background:#fff;border:1px solid #c0c0c0;box-sizing:border-box;"></div><div style="position:absolute;left:648px;top:118.1px;font-size:11.5px;line-height:11.5px;color:#222;white-space:nowrap;">1/2_Hose</div><svg style="position:absolute;left:745px;top:123px;" width="6" height="4" viewBox="0 0 6 4"><path d="M0 0H6L3.0 3.4Z" fill="#666"/></svg><svg style="position:absolute;left:766px;top:116px;overflow:visible" width="16" height="16" viewBox="0.9 0.9 14.2 14.2"><rect x="0" y="0" width="7" height="7" fill="#5a9be6"/><rect x="8.5" y="2.5" width="7" height="3" rx="1.5" fill="#fff" stroke="#2a3340"/><path d="M11 6V9" stroke="#2a3340" stroke-dasharray="1 1"/><rect x="8.5" y="9.5" width="6" height="6" fill="#f5b800" stroke="#2a3340" stroke-width="1"/></svg><svg style="position:absolute;left:791px;top:116px;overflow:visible" width="16" height="16" viewBox="0.9 0.9 14.2 14.2"><rect x="3.5" y="1.5" width="10" height="4" rx="2" fill="#fff" stroke="#2a3340"/><path d="M8 6V11" stroke="#5a9be6" stroke-width="1"/><path d="M5 9L8 12L11 9Z" fill="#5a9be6"/><path d="M1 14H15" stroke="#5a9be6" stroke-width="1.1"/></svg><svg style="position:absolute;left:813px;top:131px;" width="7" height="4" viewBox="0 0 7 4"><path d="M0 0H7L3.5 4.0Z" fill="#666"/></svg><div style="position:absolute;left:826px;top:111px;width:577px;height:26px;background:#f0f0f0;border-radius:4px;"></div><div style="position:absolute;left:831px;top:117px;width:2px;height:2px;background:#a8a8a8;"></div><div style="position:absolute;left:831px;top:121px;width:2px;height:2px;background:#a8a8a8;"></div><div style="position:absolute;left:831px;top:125px;width:2px;height:2px;background:#a8a8a8;"></div><div style="position:absolute;left:831px;top:129px;width:2px;height:2px;background:#a8a8a8;"></div><div style="position:absolute;left:838px;top:113px;width:115px;height:21px;background:#fff;border:1px solid #c0c0c0;box-sizing:border-box;"></div><div style="position:absolute;left:843px;top:118.1px;font-size:11.5px;line-height:11.5px;color:#222;white-space:nowrap;">H05V-K</div><svg style="position:absolute;left:940px;top:123px;" width="6" height="4" viewBox="0 0 6 4"><path d="M0 0H6L3.0 3.4Z" fill="#666"/></svg><div style="position:absolute;left:958px;top:113px;width:115px;height:21px;background:#fff;border:1px solid #c0c0c0;box-sizing:border-box;"></div><div style="position:absolute;left:963px;top:118.1px;font-size:11.5px;line-height:11.5px;color:#222;white-space:nowrap;">0.5-RD</div><svg style="position:absolute;left:1060px;top:123px;" width="6" height="4" viewBox="0 0 6 4"><path d="M0 0H6L3.0 3.4Z" fill="#666"/></svg><div style="position:absolute;left:1078px;top:113px;width:115px;height:21px;background:#fff;border:1px solid #c0c0c0;box-sizing:border-box;"></div><div style="position:absolute;left:1083px;top:118.1px;font-size:11.5px;line-height:11.5px;color:#222;white-space:nowrap;">Core_hori</div><svg style="position:absolute;left:1180px;top:123px;" width="6" height="4" viewBox="0 0 6 4"><path d="M0 0H6L3.0 3.4Z" fill="#666"/></svg><div style="position:absolute;left:1198px;top:113px;width:115px;height:21px;background:#fff;border:1px solid #c0c0c0;box-sizing:border-box;"></div><div style="position:absolute;left:1203px;top:118.1px;font-size:11.5px;line-height:11.5px;color:#222;white-space:nowrap;">Core_vert</div><svg style="position:absolute;left:1300px;top:123px;" width="6" height="4" viewBox="0 0 6 4"><path d="M0 0H6L3.0 3.4Z" fill="#666"/></svg><svg style="position:absolute;left:1320px;top:116px;overflow:visible" width="16" height="16" viewBox="0.9 0.9 14.2 14.2"><rect x="0" y="0" width="7" height="7" fill="#5a9be6"/><path d="M8 2C10 5 12 5 14 2" stroke="#6cbf40" stroke-width="1.1" fill="none"/><path d="M11 5V9" stroke="#2a3340" stroke-dasharray="1 1"/><rect x="8.5" y="9.5" width="6" height="6" fill="#f5b800" stroke="#2a3340" stroke-width="1"/></svg><svg style="position:absolute;left:1345px;top:116px;overflow:visible" width="16" height="16" viewBox="0.9 0.9 14.2 14.2"><path d="M1 3C5 7 11 7 15 3" stroke="#6cbf40" stroke-width="1.1" fill="none"/><path d="M8 6V11" stroke="#5a9be6" stroke-width="1"/><path d="M5 9L8 12L11 9Z" fill="#5a9be6"/><path d="M1 14H15" stroke="#5a9be6" stroke-width="1.1"/></svg><svg style="position:absolute;left:1370px;top:116px;overflow:visible" width="16" height="16" viewBox="0.9 0.9 14.2 14.2"><rect x="1.5" y="1.5" width="3" height="3" fill="none" stroke="#c4c4c4"/><rect x="1.5" y="6.5" width="3" height="3" fill="none" stroke="#c4c4c4"/><rect x="1.5" y="11.5" width="3" height="3" fill="none" stroke="#c4c4c4"/><path d="M6 2H13V14H6" fill="none" stroke="#c4c4c4"/><circle cx="12" cy="11" r="3" fill="none" stroke="#c4c4c4"/></svg><svg style="position:absolute;left:1393px;top:131px;" width="7" height="4" viewBox="0 0 7 4"><path d="M0 0H7L3.5 4.0Z" fill="#666"/></svg><div style="position:absolute;left:204px;top:138px;width:2px;height:662px;background:#e6e6e6;"></div><div style="position:absolute;left:206px;top:138px;width:4px;height:662px;background:#dadada;"></div><div style="position:absolute;left:1127px;top:138px;width:2px;height:662px;background:#e8e8e8;"></div><div style="position:absolute;left:1129px;top:138px;width:4px;height:662px;background:#dadada;"></div><div style="position:absolute;left:8px;top:147px;font-size:18px;line-height:18px;color:#454545;white-space:nowrap;">Sheet</div><svg style="position:absolute;left:150px;top:154px;" width="10" height="5" viewBox="0 0 10 5"><path d="M0 0H10L5 5Z" fill="#6a6a6a"/></svg><svg style="position:absolute;left:170px;top:150px;" width="9" height="12" viewBox="0 0 9 12"><path d="M1.5 0.5H7.5V6.5H1.5ZM0 6.5H9M4.5 6.5V11.5M4 1V6" stroke="#6a6a6a" fill="none" stroke-width="1.2"/></svg><svg style="position:absolute;left:189px;top:152px;" width="9" height="9" viewBox="0 0 9 9"><path d="M0.5 0.5L8.5 8.5M8.5 0.5L0.5 8.5" stroke="#6a6a6a" stroke-width="1.4"/></svg><div style="position:absolute;left:4px;top:173px;width:200px;height:259px;background:#fff;"></div><div style="position:absolute;left:10px;top:177px;font-size:11.5px;line-height:11.5px;color:#111;white-space:nowrap;">Sheet</div><div style="position:absolute;left:43px;top:193px;width:161px;height:16px;background:#e3e3e3;"></div><div style="position:absolute;left:32px;top:209px;width:1px;height:201px;background:repeating-linear-gradient(180deg,#a0a0a0 0 1px,transparent 1px 2px);"></div><div style="position:absolute;left:52px;top:257px;width:1px;height:12px;background:repeating-linear-gradient(180deg,#a0a0a0 0 1px,transparent 1px 2px);"></div><div style="position:absolute;left:73px;top:271px;width:1px;height:27px;background:repeating-linear-gradient(180deg,#a0a0a0 0 1px,transparent 1px 2px);"></div><div style="position:absolute;left:17px;top:201px;width:9px;height:1px;background:repeating-linear-gradient(90deg,#a0a0a0 0 1px,transparent 1px 2px);"></div><svg style="position:absolute;left:8px;top:196px;" width="9" height="9" viewBox="0 0 9 9"><rect x="0.5" y="0.5" width="8" height="8" fill="#fff" stroke="#9aa0b0"/><path d="M2 4.5H7" stroke="#24318a"/></svg><svg style="position:absolute;left:26px;top:193px;" width="13" height="16" viewBox="0 0 13 16"><rect x="0.5" y="0.5" width="9" height="12" fill="#fff" stroke="#000" stroke-width="1.1"/><rect x="2.5" y="2.5" width="9" height="12" fill="#fff" stroke="#000" stroke-width="1.1"/><path d="M4.5 5.5H9L12.5 9V15.5H4.5Z" fill="#fff" stroke="#000" stroke-width="1.1"/><path d="M9 5.5V9H12.5" fill="none" stroke="#000" stroke-width="1"/></svg><div style="position:absolute;left:46px;top:195px;font-size:12px;line-height:12px;color:#000;white-space:nowrap;font-weight:bold;letter-spacing:-0.2px;">PowerCharger*</div><svg style="position:absolute;left:28px;top:213px;" width="9" height="9" viewBox="0 0 9 9"><rect x="0.5" y="0.5" width="8" height="8" fill="#fff" stroke="#9aa0b0"/><path d="M2 4.5H7" stroke="#24318a"/><path d="M4.5 2V7" stroke="#24318a"/></svg><div style="position:absolute;left:37px;top:217px;width:7px;height:1px;background:repeating-linear-gradient(90deg,#a0a0a0 0 1px,transparent 1px 2px);"></div><svg style="position:absolute;left:44px;top:210px;" width="16" height="14" viewBox="0 0 16 14"><path d="M0.5 2.5Q0.5 1 2 1H6L7.5 3H14Q15.5 3 15.5 4.5V12Q15.5 13.5 14 13.5H2Q0.5 13.5 0.5 12Z" fill="#f7dc7a" stroke="#b8901e"/><path d="M1 5.5H15" stroke="#c9a030"/><path d="M1 12.5H15" stroke="#a07818" stroke-width="1.5"/></svg><div style="position:absolute;left:66px;top:211px;font-size:11.5px;line-height:11.5px;color:#111;white-space:nowrap;letter-spacing:-0.45px;">&lt;Sub-project&gt;</div><svg style="position:absolute;left:28px;top:229px;" width="9" height="9" viewBox="0 0 9 9"><rect x="0.5" y="0.5" width="8" height="8" fill="#fff" stroke="#9aa0b0"/><path d="M2 4.5H7" stroke="#24318a"/><path d="M4.5 2V7" stroke="#24318a"/></svg><div style="position:absolute;left:37px;top:233px;width:7px;height:1px;background:repeating-linear-gradient(90deg,#a0a0a0 0 1px,transparent 1px 2px);"></div><svg style="position:absolute;left:44px;top:226px;" width="16" height="14" viewBox="0 0 16 14"><path d="M0.5 2.5Q0.5 1 2 1H6L7.5 3H14Q15.5 3 15.5 4.5V12Q15.5 13.5 14 13.5H2Q0.5 13.5 0.5 12Z" fill="#f7dc7a" stroke="#b8901e"/><path d="M1 5.5H15" stroke="#c9a030"/><path d="M1 12.5H15" stroke="#a07818" stroke-width="1.5"/></svg><div style="position:absolute;left:66px;top:227px;font-size:11.5px;line-height:11.5px;color:#111;white-space:nowrap;letter-spacing:-0.45px;">01-cover sheet</div><svg style="position:absolute;left:28px;top:245px;" width="9" height="9" viewBox="0 0 9 9"><rect x="0.5" y="0.5" width="8" height="8" fill="#fff" stroke="#9aa0b0"/><path d="M2 4.5H7" stroke="#24318a"/></svg><div style="position:absolute;left:37px;top:249px;width:7px;height:1px;background:repeating-linear-gradient(90deg,#a0a0a0 0 1px,transparent 1px 2px);"></div><svg style="position:absolute;left:44px;top:242px;" width="16" height="14" viewBox="0 0 16 14"><path d="M0.5 2.5Q0.5 1 2 1H6L7.5 3H14Q15.5 3 15.5 4.5V12Q15.5 13.5 14 13.5H2Q0.5 13.5 0.5 12Z" fill="#f7dc7a" stroke="#b8901e"/><path d="M1 5.5H15" stroke="#c9a030"/><path d="M1 12.5H15" stroke="#a07818" stroke-width="1.5"/></svg><div style="position:absolute;left:66px;top:243px;font-size:11.5px;line-height:11.5px;color:#111;white-space:nowrap;letter-spacing:-0.45px;">02-circuit diagram</div><svg style="position:absolute;left:48px;top:261px;" width="9" height="9" viewBox="0 0 9 9"><rect x="0.5" y="0.5" width="8" height="8" fill="#fff" stroke="#9aa0b0"/><path d="M2 4.5H7" stroke="#24318a"/></svg><div style="position:absolute;left:57px;top:265px;width:7px;height:1px;background:repeating-linear-gradient(90deg,#a0a0a0 0 1px,transparent 1px 2px);"></div><svg style="position:absolute;left:64px;top:258px;" width="16" height="14" viewBox="0 0 16 14"><path d="M0.5 2.5Q0.5 1 2 1H6L7.5 3H14Q15.5 3 15.5 4.5V12Q15.5 13.5 14 13.5H2Q0.5 13.5 0.5 12Z" fill="#f7dc7a" stroke="#b8901e"/><path d="M1 5.5H15" stroke="#c9a030"/><path d="M1 12.5H15" stroke="#a07818" stroke-width="1.5"/></svg><div style="position:absolute;left:86px;top:259px;font-size:11.5px;line-height:11.5px;color:#111;white-space:nowrap;letter-spacing:-0.45px;">=A2</div><div style="position:absolute;left:74px;top:281px;width:10px;height:1px;background:repeating-linear-gradient(90deg,#a0a0a0 0 1px,transparent 1px 2px);"></div><svg style="position:absolute;left:87px;top:275px;" width="12" height="12" viewBox="0 0 12 12"><rect x="0.5" y="0.5" width="11" height="11" fill="#fff" stroke="#222"/><path d="M2 6L5 9L10 2" stroke="#e00000" stroke-width="2" fill="none"/></svg><svg style="position:absolute;left:102px;top:274px;" width="12" height="15" viewBox="0 0 12 15"><path d="M0.5 0.5H7L11.5 5V14.5H0.5Z" fill="#fff" stroke="#111"/><path d="M7 0.5V5H11.5" fill="none" stroke="#111"/></svg><div style="position:absolute;left:122px;top:275px;font-size:11.5px;line-height:11.5px;color:#111;white-space:nowrap;letter-spacing:-0.45px;">201</div><div style="position:absolute;left:74px;top:297px;width:10px;height:1px;background:repeating-linear-gradient(90deg,#a0a0a0 0 1px,transparent 1px 2px);"></div><svg style="position:absolute;left:87px;top:291px;" width="12" height="12" viewBox="0 0 12 12"><rect x="0.5" y="0.5" width="11" height="11" fill="#fff" stroke="#222"/></svg><svg style="position:absolute;left:102px;top:290px;" width="12" height="15" viewBox="0 0 12 15"><path d="M0.5 0.5H7L11.5 5V14.5H0.5Z" fill="#fff" stroke="#111"/><path d="M7 0.5V5H11.5" fill="none" stroke="#111"/></svg><div style="position:absolute;left:122px;top:291px;font-size:11.5px;line-height:11.5px;color:#111;white-space:nowrap;letter-spacing:-0.45px;">202</div><div style="position:absolute;left:4px;top:172px;width:200px;height:260px;overflow:hidden;"><div style="position:absolute;left:29px;top:141px;width:11px;height:1px;background:repeating-linear-gradient(90deg,#a0a0a0 0 1px,transparent 1px 2px);"></div><svg style="position:absolute;left:40px;top:134px;" width="16" height="14" viewBox="0 0 16 14"><path d="M0.5 2.5Q0.5 1 2 1H6L7.5 3H14Q15.5 3 15.5 4.5V12Q15.5 13.5 14 13.5H2Q0.5 13.5 0.5 12Z" fill="#f7dc7a" stroke="#b8901e"/><path d="M1 5.5H15" stroke="#c9a030"/><path d="M1 12.5H15" stroke="#a07818" stroke-width="1.5"/></svg><div style="position:absolute;left:62px;top:135px;font-size:11.5px;line-height:11.5px;color:#111;white-space:nowrap;letter-spacing:-0.45px;">03-Cable harness for manufac</div><svg style="position:absolute;left:24px;top:153px;" width="9" height="9" viewBox="0 0 9 9"><rect x="0.5" y="0.5" width="8" height="8" fill="#fff" stroke="#9aa0b0"/><path d="M2 4.5H7" stroke="#24318a"/><path d="M4.5 2V7" stroke="#24318a"/></svg><div style="position:absolute;left:33px;top:157px;width:7px;height:1px;background:repeating-linear-gradient(90deg,#a0a0a0 0 1px,transparent 1px 2px);"></div><svg style="position:absolute;left:40px;top:150px;" width="16" height="14" viewBox="0 0 16 14"><path d="M0.5 2.5Q0.5 1 2 1H6L7.5 3H14Q15.5 3 15.5 4.5V12Q15.5 13.5 14 13.5H2Q0.5 13.5 0.5 12Z" fill="#f7dc7a" stroke="#b8901e"/><path d="M1 5.5H15" stroke="#c9a030"/><path d="M1 12.5H15" stroke="#a07818" stroke-width="1.5"/></svg><div style="position:absolute;left:62px;top:151px;font-size:11.5px;line-height:11.5px;color:#111;white-space:nowrap;letter-spacing:-0.45px;">04-connector plan</div><svg style="position:absolute;left:24px;top:169px;" width="9" height="9" viewBox="0 0 9 9"><rect x="0.5" y="0.5" width="8" height="8" fill="#fff" stroke="#9aa0b0"/><path d="M2 4.5H7" stroke="#24318a"/><path d="M4.5 2V7" stroke="#24318a"/></svg><div style="position:absolute;left:33px;top:173px;width:7px;height:1px;background:repeating-linear-gradient(90deg,#a0a0a0 0 1px,transparent 1px 2px);"></div><svg style="position:absolute;left:40px;top:166px;" width="16" height="14" viewBox="0 0 16 14"><path d="M0.5 2.5Q0.5 1 2 1H6L7.5 3H14Q15.5 3 15.5 4.5V12Q15.5 13.5 14 13.5H2Q0.5 13.5 0.5 12Z" fill="#f7dc7a" stroke="#b8901e"/><path d="M1 5.5H15" stroke="#c9a030"/><path d="M1 12.5H15" stroke="#a07818" stroke-width="1.5"/></svg><div style="position:absolute;left:62px;top:167px;font-size:11.5px;line-height:11.5px;color:#111;white-space:nowrap;letter-spacing:-0.45px;">03-Cable harness for manufac</div><svg style="position:absolute;left:24px;top:185px;" width="9" height="9" viewBox="0 0 9 9"><rect x="0.5" y="0.5" width="8" height="8" fill="#fff" stroke="#9aa0b0"/><path d="M2 4.5H7" stroke="#24318a"/><path d="M4.5 2V7" stroke="#24318a"/></svg><div style="position:absolute;left:33px;top:189px;width:7px;height:1px;background:repeating-linear-gradient(90deg,#a0a0a0 0 1px,transparent 1px 2px);"></div><svg style="position:absolute;left:40px;top:182px;" width="16" height="14" viewBox="0 0 16 14"><path d="M0.5 2.5Q0.5 1 2 1H6L7.5 3H14Q15.5 3 15.5 4.5V12Q15.5 13.5 14 13.5H2Q0.5 13.5 0.5 12Z" fill="#f7dc7a" stroke="#b8901e"/><path d="M1 5.5H15" stroke="#c9a030"/><path d="M1 12.5H15" stroke="#a07818" stroke-width="1.5"/></svg><div style="position:absolute;left:62px;top:183px;font-size:11.5px;line-height:11.5px;color:#111;white-space:nowrap;letter-spacing:-0.45px;">03-Cable harness for manufac</div><svg style="position:absolute;left:24px;top:201px;" width="9" height="9" viewBox="0 0 9 9"><rect x="0.5" y="0.5" width="8" height="8" fill="#fff" stroke="#9aa0b0"/><path d="M2 4.5H7" stroke="#24318a"/><path d="M4.5 2V7" stroke="#24318a"/></svg><div style="position:absolute;left:33px;top:205px;width:7px;height:1px;background:repeating-linear-gradient(90deg,#a0a0a0 0 1px,transparent 1px 2px);"></div><svg style="position:absolute;left:40px;top:198px;" width="16" height="14" viewBox="0 0 16 14"><path d="M0.5 2.5Q0.5 1 2 1H6L7.5 3H14Q15.5 3 15.5 4.5V12Q15.5 13.5 14 13.5H2Q0.5 13.5 0.5 12Z" fill="#f7dc7a" stroke="#b8901e"/><path d="M1 5.5H15" stroke="#c9a030"/><path d="M1 12.5H15" stroke="#a07818" stroke-width="1.5"/></svg><div style="position:absolute;left:62px;top:199px;font-size:11.5px;line-height:11.5px;color:#111;white-space:nowrap;letter-spacing:-0.45px;">03-Cable harness for manufac</div><svg style="position:absolute;left:24px;top:217px;" width="9" height="9" viewBox="0 0 9 9"><rect x="0.5" y="0.5" width="8" height="8" fill="#fff" stroke="#9aa0b0"/><path d="M2 4.5H7" stroke="#24318a"/><path d="M4.5 2V7" stroke="#24318a"/></svg><div style="position:absolute;left:33px;top:221px;width:7px;height:1px;background:repeating-linear-gradient(90deg,#a0a0a0 0 1px,transparent 1px 2px);"></div><svg style="position:absolute;left:40px;top:214px;" width="16" height="14" viewBox="0 0 16 14"><path d="M0.5 2.5Q0.5 1 2 1H6L7.5 3H14Q15.5 3 15.5 4.5V12Q15.5 13.5 14 13.5H2Q0.5 13.5 0.5 12Z" fill="#f7dc7a" stroke="#b8901e"/><path d="M1 5.5H15" stroke="#c9a030"/><path d="M1 12.5H15" stroke="#a07818" stroke-width="1.5"/></svg><div style="position:absolute;left:62px;top:215px;font-size:11.5px;line-height:11.5px;color:#111;white-space:nowrap;letter-spacing:-0.45px;">03-Cable harness for manufac</div><svg style="position:absolute;left:24px;top:233px;" width="9" height="9" viewBox="0 0 9 9"><rect x="0.5" y="0.5" width="8" height="8" fill="#fff" stroke="#9aa0b0"/><path d="M2 4.5H7" stroke="#24318a"/><path d="M4.5 2V7" stroke="#24318a"/></svg><div style="position:absolute;left:33px;top:237px;width:7px;height:1px;background:repeating-linear-gradient(90deg,#a0a0a0 0 1px,transparent 1px 2px);"></div><svg style="position:absolute;left:40px;top:230px;" width="16" height="14" viewBox="0 0 16 14"><path d="M0.5 2.5Q0.5 1 2 1H6L7.5 3H14Q15.5 3 15.5 4.5V12Q15.5 13.5 14 13.5H2Q0.5 13.5 0.5 12Z" fill="#f7dc7a" stroke="#b8901e"/><path d="M1 5.5H15" stroke="#c9a030"/><path d="M1 12.5H15" stroke="#a07818" stroke-width="1.5"/></svg><div style="position:absolute;left:62px;top:231px;font-size:11.5px;line-height:11.5px;color:#111;white-space:nowrap;letter-spacing:-0.45px;">Cable harness for manufacturi</div></div><div style="position:absolute;left:4px;top:416px;width:200px;height:1px;background:#c8c8c8;"></div><div style="position:absolute;left:4px;top:432px;width:200px;height:14px;background:#f0f0f0;"></div><div style="position:absolute;left:21px;top:433px;width:43px;height:12px;background:#c8c8c8;"></div><svg style="position:absolute;left:9px;top:435px;" width="5" height="8" viewBox="0 0 5 8"><path d="M4.5 0.5L1 4L4.5 7.5" stroke="#606060" stroke-width="1.5" fill="none"/></svg><svg style="position:absolute;left:193px;top:435px;" width="5" height="8" viewBox="0 0 5 8"><path d="M0.5 0.5L4 4L0.5 7.5" stroke="#606060" stroke-width="1.5" fill="none"/></svg><div style="position:absolute;left:2px;top:446px;width:204px;height:24px;background:#e6e6e6;"></div><div style="position:absolute;left:4px;top:446px;width:32px;height:23px;background:#fff;border:1px solid #d8d8d8;border-bottom:none;box-sizing:border-box;"></div><div style="position:absolute;left:5px;top:465px;width:30px;height:3px;background:#c5d5f0;"></div><svg style="position:absolute;left:10px;top:449px;" width="13" height="14" viewBox="0 0 13 14"><path d="M0.5 2.5H6L8.5 5V13.5H0.5Z" fill="#fff" stroke="#111"/><path d="M3.5 0.5H9L11.5 3V11.5H8.5" fill="none" stroke="#111"/></svg><div style="position:absolute;left:27px;top:450.5px;font-size:11px;line-height:11px;color:#8a8a8a;white-space:nowrap;">S</div><div style="position:absolute;left:38px;top:465px;width:29px;height:3px;background:#b5cc9a;"></div><svg style="position:absolute;left:39px;top:449px;" width="16" height="15" viewBox="0 0 16 15"><g transform="translate(16 0) scale(-1 1)"><path d="M1 14V3L3 1L11 10V1H15V14L13 15L5 6V14Z" fill="#19e019" stroke="#000" stroke-width="1.3"/></g></svg><div style="position:absolute;left:59px;top:450.5px;font-size:11px;line-height:11px;color:#8a8a8a;white-space:nowrap;">D</div><div style="position:absolute;left:70px;top:465px;width:29px;height:3px;background:#eca0a0;"></div><svg style="position:absolute;left:73px;top:449px;" width="15" height="15" viewBox="0 0 15 15"><path d="M2 1H6M4 1V13M4 5H9M4 9H9M4 13H9" stroke="#111"/><rect x="8.5" y="3.5" width="6" height="3" fill="#fff" stroke="#111"/><rect x="8.5" y="7.5" width="6" height="3" fill="#fff" stroke="#111"/><rect x="8.5" y="11.5" width="6" height="3" fill="#fff" stroke="#111"/></svg><div style="position:absolute;left:92px;top:450.5px;font-size:11px;line-height:11px;color:#8a8a8a;white-space:nowrap;">A</div><div style="position:absolute;left:102px;top:465px;width:29px;height:3px;background:#c4b0e0;"></div><svg style="position:absolute;left:106px;top:450px;" width="12" height="13" viewBox="0 0 12 13"><path d="M0 0H4L6 8L8 0H12L8 13H4Z" fill="#000"/></svg><div style="position:absolute;left:123px;top:450.5px;font-size:11px;line-height:11px;color:#8a8a8a;white-space:nowrap;">V</div><div style="position:absolute;left:134px;top:465px;width:29px;height:3px;background:#b0a8c8;"></div><svg style="position:absolute;left:139px;top:449px;" width="14" height="15" viewBox="0 0 14 15"><path d="M1 4L4 1H13V11L10 14H1Z" fill="#3090e0" stroke="#000"/><path d="M1 4H10V14M10 4L13 1" stroke="#000" fill="none"/><circle cx="4" cy="7" r="1" fill="#e02020"/><circle cx="7" cy="7" r="1" fill="#e02020"/><circle cx="4" cy="11" r="1" fill="#e02020"/><circle cx="7" cy="11" r="1" fill="#e02020"/></svg><div style="position:absolute;left:155px;top:450.5px;font-size:11px;line-height:11px;color:#8a8a8a;white-space:nowrap;">P</div><div style="position:absolute;left:166px;top:465px;width:29px;height:3px;background:#e8d8a8;"></div><svg style="position:absolute;left:171px;top:449px;" width="14" height="15" viewBox="0 0 14 15"><path d="M1 4L4 1H13V11L10 14H1Z" fill="#f0e020" stroke="#000"/><path d="M1 4H10V14M10 4L13 1" stroke="#000" fill="none"/><circle cx="4" cy="7" r="1" fill="#e02020"/><circle cx="7" cy="7" r="1" fill="#e02020"/><circle cx="4" cy="11" r="1" fill="#e02020"/><circle cx="7" cy="11" r="1" fill="#e02020"/></svg><div style="position:absolute;left:186px;top:450.5px;font-size:11px;line-height:11px;color:#8a8a8a;white-space:nowrap;">P</div><div style="position:absolute;left:2px;top:470px;width:204px;height:6px;background:#c8c8c8;"></div><div style="position:absolute;left:8px;top:485px;font-size:18px;line-height:18px;color:#454545;white-space:nowrap;">Symbol</div><svg style="position:absolute;left:150px;top:492px;" width="10" height="5" viewBox="0 0 10 5"><path d="M0 0H10L5 5Z" fill="#6a6a6a"/></svg><svg style="position:absolute;left:170px;top:488px;" width="9" height="12" viewBox="0 0 9 12"><path d="M1.5 0.5H7.5V6.5H1.5ZM0 6.5H9M4.5 6.5V11.5M4 1V6" stroke="#6a6a6a" fill="none" stroke-width="1.2"/></svg><svg style="position:absolute;left:189px;top:490px;" width="9" height="9" viewBox="0 0 9 9"><path d="M0.5 0.5L8.5 8.5M8.5 0.5L0.5 8.5" stroke="#6a6a6a" stroke-width="1.4"/></svg><div style="position:absolute;left:4px;top:511px;width:185px;height:251px;background:#fff;"></div><div style="position:absolute;left:189px;top:511px;width:15px;height:251px;background:#f0f0f0;"></div><div style="position:absolute;left:190px;top:529px;width:14px;height:17px;background:#c8c8c8;"></div><svg style="position:absolute;left:193px;top:518px;" width="9" height="6" viewBox="0 0 9 6"><path d="M0.5 5.5L4.5 1L8.5 5.5" stroke="#333" stroke-width="1.5" fill="none"/></svg><svg style="position:absolute;left:193px;top:753px;" width="9" height="6" viewBox="0 0 9 6"><path d="M0.5 0.5L4.5 5L8.5 0.5" stroke="#333" stroke-width="1.5" fill="none"/></svg><div style="position:absolute;left:10px;top:515px;font-size:11.5px;line-height:11.5px;color:#111;white-space:nowrap;">Symbol</div><div style="position:absolute;left:153px;top:511px;width:1px;height:251px;background:#c8c8c8;"></div><div style="position:absolute;left:160px;top:515px;font-size:11.5px;line-height:11.5px;color:#111;white-space:nowrap;">Chara</div><div style="position:absolute;left:43px;top:531px;width:145px;height:16px;background:#e3e3e3;"></div><svg style="position:absolute;left:8px;top:535px;" width="9" height="9" viewBox="0 0 9 9"><rect x="0.5" y="0.5" width="8" height="8" fill="#fff" stroke="#9aa0b0"/><path d="M2 4.5H7" stroke="#24318a"/></svg><div style="position:absolute;left:17px;top:539px;width:7px;height:1px;background:repeating-linear-gradient(90deg,#a0a0a0 0 1px,transparent 1px 2px);"></div><svg style="position:absolute;left:24px;top:531px;" width="16" height="16" viewBox="0 0 16 16"><rect x="0.5" y="0.5" width="15" height="15" fill="#000"/><rect x="2" y="2" width="4" height="12" fill="#1010ff"/><rect x="6" y="2" width="4" height="12" fill="#10d010"/><rect x="10" y="2" width="4" height="12" fill="#ff1010"/></svg><div style="position:absolute;left:46px;top:533px;font-size:12px;line-height:12px;color:#000;white-space:nowrap;font-weight:bold;">Work CDB</div><div style="position:absolute;left:32px;top:547px;width:1px;height:215px;background:repeating-linear-gradient(180deg,#a0a0a0 0 1px,transparent 1px 2px);"></div><div style="position:absolute;left:4px;top:511px;width:149px;height:251px;overflow:hidden;"><svg style="position:absolute;left:24px;top:40px;" width="9" height="9" viewBox="0 0 9 9"><rect x="0.5" y="0.5" width="8" height="8" fill="#fff" stroke="#9aa0b0"/><path d="M2 4.5H7" stroke="#24318a"/><path d="M4.5 2V7" stroke="#24318a"/></svg><div style="position:absolute;left:33px;top:44px;width:7px;height:1px;background:repeating-linear-gradient(90deg,#a0a0a0 0 1px,transparent 1px 2px);"></div><svg style="position:absolute;left:40px;top:37px;" width="16" height="14" viewBox="0 0 16 14"><path d="M0.5 2.5Q0.5 1 2 1H6L7.5 3H14Q15.5 3 15.5 4.5V12Q15.5 13.5 14 13.5H2Q0.5 13.5 0.5 12Z" fill="#f7dc7a" stroke="#b8901e"/><path d="M1 5.5H15" stroke="#c9a030"/><path d="M1 12.5H15" stroke="#a07818" stroke-width="1.5"/></svg><div style="position:absolute;left:62px;top:38px;font-size:11.5px;line-height:11.5px;color:#111;white-space:nowrap;letter-spacing:-0.45px;">8.2_Connectio...</div><svg style="position:absolute;left:24px;top:56px;" width="9" height="9" viewBox="0 0 9 9"><rect x="0.5" y="0.5" width="8" height="8" fill="#fff" stroke="#9aa0b0"/><path d="M2 4.5H7" stroke="#24318a"/><path d="M4.5 2V7" stroke="#24318a"/></svg><div style="position:absolute;left:33px;top:60px;width:7px;height:1px;background:repeating-linear-gradient(90deg,#a0a0a0 0 1px,transparent 1px 2px);"></div><svg style="position:absolute;left:40px;top:53px;" width="16" height="14" viewBox="0 0 16 14"><path d="M0.5 2.5Q0.5 1 2 1H6L7.5 3H14Q15.5 3 15.5 4.5V12Q15.5 13.5 14 13.5H2Q0.5 13.5 0.5 12Z" fill="#f7dc7a" stroke="#b8901e"/><path d="M1 5.5H15" stroke="#c9a030"/><path d="M1 12.5H15" stroke="#a07818" stroke-width="1.5"/></svg><div style="position:absolute;left:62px;top:54px;font-size:11.5px;line-height:11.5px;color:#111;white-space:nowrap;letter-spacing:-0.45px;">8.3_Flow path ...</div><svg style="position:absolute;left:24px;top:72px;" width="9" height="9" viewBox="0 0 9 9"><rect x="0.5" y="0.5" width="8" height="8" fill="#fff" stroke="#9aa0b0"/><path d="M2 4.5H7" stroke="#24318a"/><path d="M4.5 2V7" stroke="#24318a"/></svg><div style="position:absolute;left:33px;top:76px;width:7px;height:1px;background:repeating-linear-gradient(90deg,#a0a0a0 0 1px,transparent 1px 2px);"></div><svg style="position:absolute;left:40px;top:69px;" width="16" height="14" viewBox="0 0 16 14"><path d="M0.5 2.5Q0.5 1 2 1H6L7.5 3H14Q15.5 3 15.5 4.5V12Q15.5 13.5 14 13.5H2Q0.5 13.5 0.5 12Z" fill="#f7dc7a" stroke="#b8901e"/><path d="M1 5.5H15" stroke="#c9a030"/><path d="M1 12.5H15" stroke="#a07818" stroke-width="1.5"/></svg><div style="position:absolute;left:62px;top:70px;font-size:11.5px;line-height:11.5px;color:#111;white-space:nowrap;letter-spacing:-0.45px;">8.4_Mechanica...</div><svg style="position:absolute;left:24px;top:88px;" width="9" height="9" viewBox="0 0 9 9"><rect x="0.5" y="0.5" width="8" height="8" fill="#fff" stroke="#9aa0b0"/><path d="M2 4.5H7" stroke="#24318a"/><path d="M4.5 2V7" stroke="#24318a"/></svg><div style="position:absolute;left:33px;top:92px;width:7px;height:1px;background:repeating-linear-gradient(90deg,#a0a0a0 0 1px,transparent 1px 2px);"></div><svg style="position:absolute;left:40px;top:85px;" width="16" height="14" viewBox="0 0 16 14"><path d="M0.5 2.5Q0.5 1 2 1H6L7.5 3H14Q15.5 3 15.5 4.5V12Q15.5 13.5 14 13.5H2Q0.5 13.5 0.5 12Z" fill="#f7dc7a" stroke="#b8901e"/><path d="M1 5.5H15" stroke="#c9a030"/><path d="M1 12.5H15" stroke="#a07818" stroke-width="1.5"/></svg><div style="position:absolute;left:62px;top:86px;font-size:11.5px;line-height:11.5px;color:#111;white-space:nowrap;letter-spacing:-0.45px;">8.5_Control me...</div><svg style="position:absolute;left:24px;top:104px;" width="9" height="9" viewBox="0 0 9 9"><rect x="0.5" y="0.5" width="8" height="8" fill="#fff" stroke="#9aa0b0"/><path d="M2 4.5H7" stroke="#24318a"/><path d="M4.5 2V7" stroke="#24318a"/></svg><div style="position:absolute;left:33px;top:108px;width:7px;height:1px;background:repeating-linear-gradient(90deg,#a0a0a0 0 1px,transparent 1px 2px);"></div><svg style="position:absolute;left:40px;top:101px;" width="16" height="14" viewBox="0 0 16 14"><path d="M0.5 2.5Q0.5 1 2 1H6L7.5 3H14Q15.5 3 15.5 4.5V12Q15.5 13.5 14 13.5H2Q0.5 13.5 0.5 12Z" fill="#f7dc7a" stroke="#b8901e"/><path d="M1 5.5H15" stroke="#c9a030"/><path d="M1 12.5H15" stroke="#a07818" stroke-width="1.5"/></svg><div style="position:absolute;left:62px;top:102px;font-size:11.5px;line-height:11.5px;color:#111;white-space:nowrap;letter-spacing:-0.45px;">8.6_Adjusting e...</div><svg style="position:absolute;left:24px;top:120px;" width="9" height="9" viewBox="0 0 9 9"><rect x="0.5" y="0.5" width="8" height="8" fill="#fff" stroke="#9aa0b0"/><path d="M2 4.5H7" stroke="#24318a"/><path d="M4.5 2V7" stroke="#24318a"/></svg><div style="position:absolute;left:33px;top:124px;width:7px;height:1px;background:repeating-linear-gradient(90deg,#a0a0a0 0 1px,transparent 1px 2px);"></div><svg style="position:absolute;left:40px;top:117px;" width="16" height="14" viewBox="0 0 16 14"><path d="M0.5 2.5Q0.5 1 2 1H6L7.5 3H14Q15.5 3 15.5 4.5V12Q15.5 13.5 14 13.5H2Q0.5 13.5 0.5 12Z" fill="#f7dc7a" stroke="#b8901e"/><path d="M1 5.5H15" stroke="#c9a030"/><path d="M1 12.5H15" stroke="#a07818" stroke-width="1.5"/></svg><div style="position:absolute;left:62px;top:118px;font-size:11.5px;line-height:11.5px;color:#111;white-space:nowrap;letter-spacing:-0.45px;">8.7_Accessories</div><svg style="position:absolute;left:24px;top:136px;" width="9" height="9" viewBox="0 0 9 9"><rect x="0.5" y="0.5" width="8" height="8" fill="#fff" stroke="#9aa0b0"/><path d="M2 4.5H7" stroke="#24318a"/><path d="M4.5 2V7" stroke="#24318a"/></svg><div style="position:absolute;left:33px;top:140px;width:7px;height:1px;background:repeating-linear-gradient(90deg,#a0a0a0 0 1px,transparent 1px 2px);"></div><svg style="position:absolute;left:40px;top:133px;" width="16" height="14" viewBox="0 0 16 14"><path d="M0.5 2.5Q0.5 1 2 1H6L7.5 3H14Q15.5 3 15.5 4.5V12Q15.5 13.5 14 13.5H2Q0.5 13.5 0.5 12Z" fill="#f7dc7a" stroke="#b8901e"/><path d="M1 5.5H15" stroke="#c9a030"/><path d="M1 12.5H15" stroke="#a07818" stroke-width="1.5"/></svg><div style="position:absolute;left:62px;top:134px;font-size:11.5px;line-height:11.5px;color:#111;white-space:nowrap;letter-spacing:-0.45px;">9.2_General sy...</div><svg style="position:absolute;left:24px;top:152px;" width="9" height="9" viewBox="0 0 9 9"><rect x="0.5" y="0.5" width="8" height="8" fill="#fff" stroke="#9aa0b0"/><path d="M2 4.5H7" stroke="#24318a"/><path d="M4.5 2V7" stroke="#24318a"/></svg><div style="position:absolute;left:33px;top:156px;width:7px;height:1px;background:repeating-linear-gradient(90deg,#a0a0a0 0 1px,transparent 1px 2px);"></div><svg style="position:absolute;left:40px;top:149px;" width="16" height="14" viewBox="0 0 16 14"><path d="M0.5 2.5Q0.5 1 2 1H6L7.5 3H14Q15.5 3 15.5 4.5V12Q15.5 13.5 14 13.5H2Q0.5 13.5 0.5 12Z" fill="#f7dc7a" stroke="#b8901e"/><path d="M1 5.5H15" stroke="#c9a030"/><path d="M1 12.5H15" stroke="#a07818" stroke-width="1.5"/></svg><div style="position:absolute;left:62px;top:150px;font-size:11.5px;line-height:11.5px;color:#111;white-space:nowrap;letter-spacing:-0.45px;">9.5_Cylinders</div><svg style="position:absolute;left:24px;top:168px;" width="9" height="9" viewBox="0 0 9 9"><rect x="0.5" y="0.5" width="8" height="8" fill="#fff" stroke="#9aa0b0"/><path d="M2 4.5H7" stroke="#24318a"/><path d="M4.5 2V7" stroke="#24318a"/></svg><div style="position:absolute;left:33px;top:172px;width:7px;height:1px;background:repeating-linear-gradient(90deg,#a0a0a0 0 1px,transparent 1px 2px);"></div><svg style="position:absolute;left:40px;top:165px;" width="16" height="14" viewBox="0 0 16 14"><path d="M0.5 2.5Q0.5 1 2 1H6L7.5 3H14Q15.5 3 15.5 4.5V12Q15.5 13.5 14 13.5H2Q0.5 13.5 0.5 12Z" fill="#f7dc7a" stroke="#b8901e"/><path d="M1 5.5H15" stroke="#c9a030"/><path d="M1 12.5H15" stroke="#a07818" stroke-width="1.5"/></svg><div style="position:absolute;left:62px;top:166px;font-size:11.5px;line-height:11.5px;color:#111;white-space:nowrap;letter-spacing:-0.45px;">9.6_Accessories</div><svg style="position:absolute;left:24px;top:184px;" width="9" height="9" viewBox="0 0 9 9"><rect x="0.5" y="0.5" width="8" height="8" fill="#fff" stroke="#9aa0b0"/><path d="M2 4.5H7" stroke="#24318a"/><path d="M4.5 2V7" stroke="#24318a"/></svg><div style="position:absolute;left:33px;top:188px;width:7px;height:1px;background:repeating-linear-gradient(90deg,#a0a0a0 0 1px,transparent 1px 2px);"></div><svg style="position:absolute;left:40px;top:181px;" width="16" height="14" viewBox="0 0 16 14"><path d="M0.5 2.5Q0.5 1 2 1H6L7.5 3H14Q15.5 3 15.5 4.5V12Q15.5 13.5 14 13.5H2Q0.5 13.5 0.5 12Z" fill="#f7dc7a" stroke="#b8901e"/><path d="M1 5.5H15" stroke="#c9a030"/><path d="M1 12.5H15" stroke="#a07818" stroke-width="1.5"/></svg><div style="position:absolute;left:62px;top:182px;font-size:11.5px;line-height:11.5px;color:#111;white-space:nowrap;letter-spacing:-0.45px;">Accessories</div><svg style="position:absolute;left:24px;top:200px;" width="9" height="9" viewBox="0 0 9 9"><rect x="0.5" y="0.5" width="8" height="8" fill="#fff" stroke="#9aa0b0"/><path d="M2 4.5H7" stroke="#24318a"/><path d="M4.5 2V7" stroke="#24318a"/></svg><div style="position:absolute;left:33px;top:204px;width:7px;height:1px;background:repeating-linear-gradient(90deg,#a0a0a0 0 1px,transparent 1px 2px);"></div><svg style="position:absolute;left:40px;top:197px;" width="16" height="14" viewBox="0 0 16 14"><path d="M0.5 2.5Q0.5 1 2 1H6L7.5 3H14Q15.5 3 15.5 4.5V12Q15.5 13.5 14 13.5H2Q0.5 13.5 0.5 12Z" fill="#f7dc7a" stroke="#b8901e"/><path d="M1 5.5H15" stroke="#c9a030"/><path d="M1 12.5H15" stroke="#a07818" stroke-width="1.5"/></svg><div style="position:absolute;left:62px;top:198px;font-size:11.5px;line-height:11.5px;color:#111;white-space:nowrap;letter-spacing:-0.45px;">Accessories_Fil...</div><svg style="position:absolute;left:24px;top:216px;" width="9" height="9" viewBox="0 0 9 9"><rect x="0.5" y="0.5" width="8" height="8" fill="#fff" stroke="#9aa0b0"/><path d="M2 4.5H7" stroke="#24318a"/><path d="M4.5 2V7" stroke="#24318a"/></svg><div style="position:absolute;left:33px;top:220px;width:7px;height:1px;background:repeating-linear-gradient(90deg,#a0a0a0 0 1px,transparent 1px 2px);"></div><svg style="position:absolute;left:40px;top:213px;" width="16" height="14" viewBox="0 0 16 14"><path d="M0.5 2.5Q0.5 1 2 1H6L7.5 3H14Q15.5 3 15.5 4.5V12Q15.5 13.5 14 13.5H2Q0.5 13.5 0.5 12Z" fill="#f7dc7a" stroke="#b8901e"/><path d="M1 5.5H15" stroke="#c9a030"/><path d="M1 12.5H15" stroke="#a07818" stroke-width="1.5"/></svg><div style="position:absolute;left:62px;top:214px;font-size:11.5px;line-height:11.5px;color:#111;white-space:nowrap;letter-spacing:-0.45px;">Accessories_S...</div><svg style="position:absolute;left:24px;top:232px;" width="9" height="9" viewBox="0 0 9 9"><rect x="0.5" y="0.5" width="8" height="8" fill="#fff" stroke="#9aa0b0"/><path d="M2 4.5H7" stroke="#24318a"/><path d="M4.5 2V7" stroke="#24318a"/></svg><div style="position:absolute;left:33px;top:236px;width:7px;height:1px;background:repeating-linear-gradient(90deg,#a0a0a0 0 1px,transparent 1px 2px);"></div><svg style="position:absolute;left:40px;top:229px;" width="16" height="14" viewBox="0 0 16 14"><path d="M0.5 2.5Q0.5 1 2 1H6L7.5 3H14Q15.5 3 15.5 4.5V12Q15.5 13.5 14 13.5H2Q0.5 13.5 0.5 12Z" fill="#f7dc7a" stroke="#b8901e"/><path d="M1 5.5H15" stroke="#c9a030"/><path d="M1 12.5H15" stroke="#a07818" stroke-width="1.5"/></svg><div style="position:absolute;left:62px;top:230px;font-size:11.5px;line-height:11.5px;color:#111;white-space:nowrap;letter-spacing:-0.45px;">Accessories_V...</div><svg style="position:absolute;left:24px;top:248px;" width="9" height="9" viewBox="0 0 9 9"><rect x="0.5" y="0.5" width="8" height="8" fill="#fff" stroke="#9aa0b0"/><path d="M2 4.5H7" stroke="#24318a"/><path d="M4.5 2V7" stroke="#24318a"/></svg><div style="position:absolute;left:33px;top:252px;width:7px;height:1px;background:repeating-linear-gradient(90deg,#a0a0a0 0 1px,transparent 1px 2px);"></div><svg style="position:absolute;left:40px;top:245px;" width="16" height="14" viewBox="0 0 16 14"><path d="M0.5 2.5Q0.5 1 2 1H6L7.5 3H14Q15.5 3 15.5 4.5V12Q15.5 13.5 14 13.5H2Q0.5 13.5 0.5 12Z" fill="#f7dc7a" stroke="#b8901e"/><path d="M1 5.5H15" stroke="#c9a030"/><path d="M1 12.5H15" stroke="#a07818" stroke-width="1.5"/></svg><div style="position:absolute;left:62px;top:246px;font-size:11.5px;line-height:11.5px;color:#111;white-space:nowrap;letter-spacing:-0.45px;">actuator with a...</div></div><div style="position:absolute;left:4px;top:762px;width:185px;height:16px;background:#f0f0f0;"></div><div style="position:absolute;left:21px;top:763px;width:62px;height:14px;background:#c8c8c8;"></div><svg style="position:absolute;left:9px;top:766px;" width="5" height="8" viewBox="0 0 5 8"><path d="M4.5 0.5L1 4L4.5 7.5" stroke="#606060" stroke-width="1.5" fill="none"/></svg><svg style="position:absolute;left:178px;top:766px;" width="5" height="8" viewBox="0 0 5 8"><path d="M0.5 0.5L4 4L0.5 7.5" stroke="#606060" stroke-width="1.5" fill="none"/></svg><div style="position:absolute;left:189px;top:762px;width:15px;height:16px;background:#f0f0f0;"></div><div style="position:absolute;left:6px;top:796px;width:69px;height:3px;background:#c5d5f0;"></div><svg style="position:absolute;left:8px;top:781px;" width="13" height="13" viewBox="0 0 13 13"><rect x="0.5" y="0.5" width="12" height="12" fill="#fff" stroke="#222"/><path d="M4.5 0.5V12.5M8.5 0.5V12.5" stroke="#222"/><rect x="1" y="1" width="3.5" height="11" fill="#5090e0"/></svg><div style="position:absolute;left:26px;top:782.5px;font-size:11px;line-height:11px;color:#3a3a3a;white-space:nowrap;">Compo...</div><div style="position:absolute;left:77px;top:778px;width:65px;height:22px;background:#fff;border:1px solid #d8d8d8;border-bottom:none;box-sizing:border-box;"></div><div style="position:absolute;left:78px;top:796px;width:63px;height:3px;background:#f8d878;"></div><svg style="position:absolute;left:82px;top:781px;" width="13" height="13" viewBox="0 0 13 13"><rect x="0.5" y="0.5" width="12" height="12" fill="#fff" stroke="#222"/><path d="M4.5 0.5V12.5M8.5 0.5V12.5" stroke="#222"/><rect x="5" y="1" width="3.5" height="11" fill="#80c040"/></svg><div style="position:absolute;left:98px;top:782.5px;font-size:11px;line-height:11px;color:#3a3a3a;white-space:nowrap;">Symbol</div><div style="position:absolute;left:145px;top:796px;width:48px;height:3px;background:#b5cc9a;"></div><svg style="position:absolute;left:148px;top:781px;" width="13" height="13" viewBox="0 0 13 13"><rect x="0.5" y="0.5" width="12" height="12" fill="#fff" stroke="#222"/><path d="M4.5 0.5V12.5M8.5 0.5V12.5" stroke="#222"/><rect x="9" y="1" width="3" height="11" fill="#e04040"/></svg><div style="position:absolute;left:165px;top:782.5px;font-size:11px;line-height:11px;color:#3a3a3a;white-space:nowrap;">Misc</div><div style="position:absolute;left:210px;top:138px;width:917px;height:523px;background:#d4d4d4;"></div><div style="position:absolute;left:211px;top:139px;width:22px;height:22px;background:#f0f0f0;"></div><div style="position:absolute;left:234px;top:139px;width:892px;height:21px;background:#ffffe6;"></div><div style="position:absolute;left:211px;top:162px;width:21px;height:491px;background:#ffffe6;"></div><div style="position:absolute;left:234px;top:162px;width:892px;height:491px;background:#fff;"></div><div style="position:absolute;left:210px;top:653px;width:917px;height:8px;background:#c8c8c8;"></div><svg style="position:absolute;left:0px;top:0px;pointer-events:none;" width="1442" height="853" viewBox="0 0 1442 853"><path d="M242.5 155.5V159" stroke="#111" stroke-width="1.2"/><path d="M249.5 155.5V159" stroke="#111" stroke-width="1.2"/><path d="M255.5 155.5V159" stroke="#111" stroke-width="1.2"/><path d="M262.5 155.5V159" stroke="#111" stroke-width="1.2"/><path d="M268.5 155.5V159" stroke="#111" stroke-width="1.2"/><path d="M275.5 155.5V159" stroke="#111" stroke-width="1.2"/><path d="M282.5 155.5V159" stroke="#111" stroke-width="1.2"/><path d="M288.5 155.5V159" stroke="#111" stroke-width="1.2"/><path d="M295.5 155.5V159" stroke="#111" stroke-width="1.2"/><path d="M301.5 140V159" stroke="#111" stroke-width="1"/><path d="M308.5 155.5V159" stroke="#111" stroke-width="1.2"/><path d="M315.5 155.5V159" stroke="#111" stroke-width="1.2"/><path d="M321.5 155.5V159" stroke="#111" stroke-width="1.2"/><path d="M328.5 155.5V159" stroke="#111" stroke-width="1.2"/><path d="M334.5 155.5V159" stroke="#111" stroke-width="1.2"/><path d="M341.5 155.5V159" stroke="#111" stroke-width="1.2"/><path d="M348.5 155.5V159" stroke="#111" stroke-width="1.2"/><path d="M354.5 155.5V159" stroke="#111" stroke-width="1.2"/><path d="M361.5 155.5V159" stroke="#111" stroke-width="1.2"/><path d="M367.5 140V159" stroke="#111" stroke-width="1"/><path d="M374.5 155.5V159" stroke="#111" stroke-width="1.2"/><path d="M381.5 155.5V159" stroke="#111" stroke-width="1.2"/><path d="M387.5 155.5V159" stroke="#111" stroke-width="1.2"/><path d="M394.5 155.5V159" stroke="#111" stroke-width="1.2"/><path d="M400.5 155.5V159" stroke="#111" stroke-width="1.2"/><path d="M407.5 155.5V159" stroke="#111" stroke-width="1.2"/><path d="M414.5 155.5V159" stroke="#111" stroke-width="1.2"/><path d="M420.5 155.5V159" stroke="#111" stroke-width="1.2"/><path d="M427.5 155.5V159" stroke="#111" stroke-width="1.2"/><path d="M433.5 140V159" stroke="#111" stroke-width="1"/><path d="M440.5 155.5V159" stroke="#111" stroke-width="1.2"/><path d="M447.5 155.5V159" stroke="#111" stroke-width="1.2"/><path d="M453.5 155.5V159" stroke="#111" stroke-width="1.2"/><path d="M460.5 155.5V159" stroke="#111" stroke-width="1.2"/><path d="M466.5 155.5V159" stroke="#111" stroke-width="1.2"/><path d="M473.5 155.5V159" stroke="#111" stroke-width="1.2"/><path d="M480.5 155.5V159" stroke="#111" stroke-width="1.2"/><path d="M486.5 155.5V159" stroke="#111" stroke-width="1.2"/><path d="M493.5 155.5V159" stroke="#111" stroke-width="1.2"/><path d="M499.5 140V159" stroke="#111" stroke-width="1"/><path d="M506.5 155.5V159" stroke="#111" stroke-width="1.2"/><path d="M513.5 155.5V159" stroke="#111" stroke-width="1.2"/><path d="M519.5 155.5V159" stroke="#111" stroke-width="1.2"/><path d="M526.5 155.5V159" stroke="#111" stroke-width="1.2"/><path d="M532.5 155.5V159" stroke="#111" stroke-width="1.2"/><path d="M539.5 155.5V159" stroke="#111" stroke-width="1.2"/><path d="M546.5 155.5V159" stroke="#111" stroke-width="1.2"/><path d="M552.5 155.5V159" stroke="#111" stroke-width="1.2"/><path d="M559.5 155.5V159" stroke="#111" stroke-width="1.2"/><path d="M565.5 140V159" stroke="#111" stroke-width="1"/><path d="M572.5 155.5V159" stroke="#111" stroke-width="1.2"/><path d="M579.5 155.5V159" stroke="#111" stroke-width="1.2"/><path d="M585.5 155.5V159" stroke="#111" stroke-width="1.2"/><path d="M592.5 155.5V159" stroke="#111" stroke-width="1.2"/><path d="M598.5 155.5V159" stroke="#111" stroke-width="1.2"/><path d="M605.5 155.5V159" stroke="#111" stroke-width="1.2"/><path d="M612.5 155.5V159" stroke="#111" stroke-width="1.2"/><path d="M618.5 155.5V159" stroke="#111" stroke-width="1.2"/><path d="M625.5 155.5V159" stroke="#111" stroke-width="1.2"/><path d="M631.5 140V159" stroke="#111" stroke-width="1"/><path d="M638.5 155.5V159" stroke="#111" stroke-width="1.2"/><path d="M645.5 155.5V159" stroke="#111" stroke-width="1.2"/><path d="M651.5 155.5V159" stroke="#111" stroke-width="1.2"/><path d="M658.5 155.5V159" stroke="#111" stroke-width="1.2"/><path d="M664.5 155.5V159" stroke="#111" stroke-width="1.2"/><path d="M671.5 155.5V159" stroke="#111" stroke-width="1.2"/><path d="M678.5 155.5V159" stroke="#111" stroke-width="1.2"/><path d="M684.5 155.5V159" stroke="#111" stroke-width="1.2"/><path d="M691.5 155.5V159" stroke="#111" stroke-width="1.2"/><path d="M698.5 140V159" stroke="#111" stroke-width="1"/><path d="M704.5 155.5V159" stroke="#111" stroke-width="1.2"/><path d="M711.5 155.5V159" stroke="#111" stroke-width="1.2"/><path d="M717.5 155.5V159" stroke="#111" stroke-width="1.2"/><path d="M724.5 155.5V159" stroke="#111" stroke-width="1.2"/><path d="M731.5 155.5V159" stroke="#111" stroke-width="1.2"/><path d="M737.5 155.5V159" stroke="#111" stroke-width="1.2"/><path d="M744.5 155.5V159" stroke="#111" stroke-width="1.2"/><path d="M750.5 155.5V159" stroke="#111" stroke-width="1.2"/><path d="M757.5 155.5V159" stroke="#111" stroke-width="1.2"/><path d="M764.5 140V159" stroke="#111" stroke-width="1"/><path d="M770.5 155.5V159" stroke="#111" stroke-width="1.2"/><path d="M777.5 155.5V159" stroke="#111" stroke-width="1.2"/><path d="M783.5 155.5V159" stroke="#111" stroke-width="1.2"/><path d="M790.5 155.5V159" stroke="#111" stroke-width="1.2"/><path d="M797.5 155.5V159" stroke="#111" stroke-width="1.2"/><path d="M803.5 155.5V159" stroke="#111" stroke-width="1.2"/><path d="M810.5 155.5V159" stroke="#111" stroke-width="1.2"/><path d="M816.5 155.5V159" stroke="#111" stroke-width="1.2"/><path d="M823.5 155.5V159" stroke="#111" stroke-width="1.2"/><path d="M830.5 140V159" stroke="#111" stroke-width="1"/><path d="M836.5 155.5V159" stroke="#111" stroke-width="1.2"/><path d="M843.5 155.5V159" stroke="#111" stroke-width="1.2"/><path d="M849.5 155.5V159" stroke="#111" stroke-width="1.2"/><path d="M856.5 155.5V159" stroke="#111" stroke-width="1.2"/><path d="M863.5 155.5V159" stroke="#111" stroke-width="1.2"/><path d="M869.5 155.5V159" stroke="#111" stroke-width="1.2"/><path d="M876.5 155.5V159" stroke="#111" stroke-width="1.2"/><path d="M882.5 155.5V159" stroke="#111" stroke-width="1.2"/><path d="M889.5 155.5V159" stroke="#111" stroke-width="1.2"/><path d="M896.5 140V159" stroke="#111" stroke-width="1"/><path d="M902.5 155.5V159" stroke="#111" stroke-width="1.2"/><path d="M909.5 155.5V159" stroke="#111" stroke-width="1.2"/><path d="M915.5 155.5V159" stroke="#111" stroke-width="1.2"/><path d="M922.5 155.5V159" stroke="#111" stroke-width="1.2"/><path d="M929.5 155.5V159" stroke="#111" stroke-width="1.2"/><text x="238.3" y="150.8" font-size="10.5" fill="#1a1a3a" font-family="Liberation Sans">0</text><text x="304.3" y="150.8" font-size="10.5" fill="#1a1a3a" font-family="Liberation Sans">40</text><text x="370.4" y="150.8" font-size="10.5" fill="#1a1a3a" font-family="Liberation Sans">80</text><text x="436.4" y="150.8" font-size="10.5" fill="#1a1a3a" font-family="Liberation Sans">120</text><text x="502.4" y="150.8" font-size="10.5" fill="#1a1a3a" font-family="Liberation Sans">160</text><text x="568.5" y="150.8" font-size="10.5" fill="#1a1a3a" font-family="Liberation Sans">200</text><text x="634.5" y="150.8" font-size="10.5" fill="#1a1a3a" font-family="Liberation Sans">240</text><text x="700.5" y="150.8" font-size="10.5" fill="#1a1a3a" font-family="Liberation Sans">280</text><text x="766.5" y="150.8" font-size="10.5" fill="#1a1a3a" font-family="Liberation Sans">320</text><text x="832.6" y="150.8" font-size="10.5" fill="#1a1a3a" font-family="Liberation Sans">360</text><text x="898.6" y="150.8" font-size="10.5" fill="#1a1a3a" font-family="Liberation Sans">400</text><path d="M227.5 646.5H231" stroke="#111" stroke-width="1.2"/><path d="M227.5 640.5H231" stroke="#111" stroke-width="1.2"/><path d="M227.5 633.5H231" stroke="#111" stroke-width="1.2"/><path d="M227.5 627.5H231" stroke="#111" stroke-width="1.2"/><path d="M227.5 620.5H231" stroke="#111" stroke-width="1.2"/><path d="M227.5 613.5H231" stroke="#111" stroke-width="1.2"/><path d="M227.5 607.5H231" stroke="#111" stroke-width="1.2"/><path d="M227.5 600.5H231" stroke="#111" stroke-width="1.2"/><path d="M227.5 594.5H231" stroke="#111" stroke-width="1.2"/><path d="M212 587.5H231" stroke="#111" stroke-width="1"/><path d="M227.5 580.5H231" stroke="#111" stroke-width="1.2"/><path d="M227.5 574.5H231" stroke="#111" stroke-width="1.2"/><path d="M227.5 567.5H231" stroke="#111" stroke-width="1.2"/><path d="M227.5 561.5H231" stroke="#111" stroke-width="1.2"/><path d="M227.5 554.5H231" stroke="#111" stroke-width="1.2"/><path d="M227.5 547.5H231" stroke="#111" stroke-width="1.2"/><path d="M227.5 541.5H231" stroke="#111" stroke-width="1.2"/><path d="M227.5 534.5H231" stroke="#111" stroke-width="1.2"/><path d="M227.5 528.5H231" stroke="#111" stroke-width="1.2"/><path d="M212 521.5H231" stroke="#111" stroke-width="1"/><path d="M227.5 514.5H231" stroke="#111" stroke-width="1.2"/><path d="M227.5 508.5H231" stroke="#111" stroke-width="1.2"/><path d="M227.5 501.5H231" stroke="#111" stroke-width="1.2"/><path d="M227.5 495.5H231" stroke="#111" stroke-width="1.2"/><path d="M227.5 488.5H231" stroke="#111" stroke-width="1.2"/><path d="M227.5 481.5H231" stroke="#111" stroke-width="1.2"/><path d="M227.5 475.5H231" stroke="#111" stroke-width="1.2"/><path d="M227.5 468.5H231" stroke="#111" stroke-width="1.2"/><path d="M227.5 462.5H231" stroke="#111" stroke-width="1.2"/><path d="M212 455.5H231" stroke="#111" stroke-width="1"/><path d="M227.5 448.5H231" stroke="#111" stroke-width="1.2"/><path d="M227.5 442.5H231" stroke="#111" stroke-width="1.2"/><path d="M227.5 435.5H231" stroke="#111" stroke-width="1.2"/><path d="M227.5 429.5H231" stroke="#111" stroke-width="1.2"/><path d="M227.5 422.5H231" stroke="#111" stroke-width="1.2"/><path d="M227.5 415.5H231" stroke="#111" stroke-width="1.2"/><path d="M227.5 409.5H231" stroke="#111" stroke-width="1.2"/><path d="M227.5 402.5H231" stroke="#111" stroke-width="1.2"/><path d="M227.5 396.5H231" stroke="#111" stroke-width="1.2"/><path d="M212 389.5H231" stroke="#111" stroke-width="1"/><path d="M227.5 382.5H231" stroke="#111" stroke-width="1.2"/><path d="M227.5 376.5H231" stroke="#111" stroke-width="1.2"/><path d="M227.5 369.5H231" stroke="#111" stroke-width="1.2"/><path d="M227.5 363.5H231" stroke="#111" stroke-width="1.2"/><path d="M227.5 356.5H231" stroke="#111" stroke-width="1.2"/><path d="M227.5 349.5H231" stroke="#111" stroke-width="1.2"/><path d="M227.5 343.5H231" stroke="#111" stroke-width="1.2"/><path d="M227.5 336.5H231" stroke="#111" stroke-width="1.2"/><path d="M227.5 330.5H231" stroke="#111" stroke-width="1.2"/><path d="M212 323.5H231" stroke="#111" stroke-width="1"/><path d="M227.5 316.5H231" stroke="#111" stroke-width="1.2"/><path d="M227.5 310.5H231" stroke="#111" stroke-width="1.2"/><path d="M227.5 303.5H231" stroke="#111" stroke-width="1.2"/><path d="M227.5 297.5H231" stroke="#111" stroke-width="1.2"/><path d="M227.5 290.5H231" stroke="#111" stroke-width="1.2"/><path d="M227.5 283.5H231" stroke="#111" stroke-width="1.2"/><path d="M227.5 277.5H231" stroke="#111" stroke-width="1.2"/><path d="M227.5 270.5H231" stroke="#111" stroke-width="1.2"/><path d="M227.5 264.5H231" stroke="#111" stroke-width="1.2"/><path d="M212 257.5H231" stroke="#111" stroke-width="1"/><path d="M227.5 250.5H231" stroke="#111" stroke-width="1.2"/><path d="M227.5 244.5H231" stroke="#111" stroke-width="1.2"/><path d="M227.5 237.5H231" stroke="#111" stroke-width="1.2"/><path d="M227.5 231.5H231" stroke="#111" stroke-width="1.2"/><path d="M227.5 224.5H231" stroke="#111" stroke-width="1.2"/><path d="M227.5 217.5H231" stroke="#111" stroke-width="1.2"/><path d="M227.5 211.5H231" stroke="#111" stroke-width="1.2"/><path d="M227.5 204.5H231" stroke="#111" stroke-width="1.2"/><path d="M227.5 197.5H231" stroke="#111" stroke-width="1.2"/><path d="M212 191.5H231" stroke="#111" stroke-width="1"/><path d="M227.5 184.5H231" stroke="#111" stroke-width="1.2"/><path d="M227.5 178.5H231" stroke="#111" stroke-width="1.2"/><path d="M227.5 171.5H231" stroke="#111" stroke-width="1.2"/><path d="M227.5 164.5H231" stroke="#111" stroke-width="1.2"/><text transform="translate(222.8,651.6) rotate(-90)" font-size="10.5" fill="#1a1a3a" font-family="Liberation Sans">0</text><text transform="translate(222.8,584.6) rotate(-90)" font-size="10.5" fill="#1a1a3a" font-family="Liberation Sans">40</text><text transform="translate(222.8,518.5) rotate(-90)" font-size="10.5" fill="#1a1a3a" font-family="Liberation Sans">80</text><text transform="translate(222.8,452.5) rotate(-90)" font-size="10.5" fill="#1a1a3a" font-family="Liberation Sans">120</text><text transform="translate(222.8,386.5) rotate(-90)" font-size="10.5" fill="#1a1a3a" font-family="Liberation Sans">160</text><text transform="translate(222.8,320.5) rotate(-90)" font-size="10.5" fill="#1a1a3a" font-family="Liberation Sans">200</text><text transform="translate(222.8,254.4) rotate(-90)" font-size="10.5" fill="#1a1a3a" font-family="Liberation Sans">240</text><text transform="translate(222.8,188.4) rotate(-90)" font-size="10.5" fill="#1a1a3a" font-family="Liberation Sans">280</text></svg><div style="position:absolute;left:234px;top:162px;width:892px;height:491px;overflow:hidden;"><svg style="position:absolute;left:-234px;top:-162px;" width="1442" height="853" viewBox="0 0 1442 853"><rect x="235.8" y="163.8" width="692.3" height="495" fill="none" stroke="#000" stroke-width="1.7"/><rect x="243.6" y="171.6" width="676.8" height="473.6" fill="none" stroke="#000" stroke-width="1.4"/><path d="M334.5 163.0 L334.5 171.5" stroke="#000" stroke-width="1.6" fill="none" /><path d="M334.5 645.0 L334.5 653.6" stroke="#000" stroke-width="1.6" fill="none" /><path d="M416.5 163.0 L416.5 171.5" stroke="#000" stroke-width="1.6" fill="none" /><path d="M416.5 645.0 L416.5 653.6" stroke="#000" stroke-width="1.6" fill="none" /><path d="M499.0 163.0 L499.0 171.5" stroke="#000" stroke-width="1.6" fill="none" /><path d="M499.0 645.0 L499.0 653.6" stroke="#000" stroke-width="1.6" fill="none" /><path d="M581.4 163.0 L581.4 171.5" stroke="#000" stroke-width="1.6" fill="none" /><path d="M581.4 645.0 L581.4 653.6" stroke="#000" stroke-width="1.6" fill="none" /><path d="M664.6 163.0 L664.6 171.5" stroke="#000" stroke-width="1.6" fill="none" /><path d="M664.6 645.0 L664.6 653.6" stroke="#000" stroke-width="1.6" fill="none" /><path d="M746.3 163.0 L746.3 171.5" stroke="#000" stroke-width="1.6" fill="none" /><path d="M746.3 645.0 L746.3 653.6" stroke="#000" stroke-width="1.6" fill="none" /><path d="M829.6 163.0 L829.6 171.5" stroke="#000" stroke-width="1.6" fill="none" /><path d="M829.6 645.0 L829.6 653.6" stroke="#000" stroke-width="1.6" fill="none" /><path d="M288.7 165.0 L288.7 169.0" stroke="#a0a0d0" stroke-width="0.8" fill="none" /><path d="M288.7 647.0 L288.7 651.0" stroke="#a0a0d0" stroke-width="0.8" fill="none" /><path d="M375.0 165.0 L375.0 169.0" stroke="#a0a0d0" stroke-width="0.8" fill="none" /><path d="M375.0 647.0 L375.0 651.0" stroke="#a0a0d0" stroke-width="0.8" fill="none" /><path d="M457.8 165.0 L457.8 169.0" stroke="#a0a0d0" stroke-width="0.8" fill="none" /><path d="M457.8 647.0 L457.8 651.0" stroke="#a0a0d0" stroke-width="0.8" fill="none" /><path d="M540.0 165.0 L540.0 169.0" stroke="#a0a0d0" stroke-width="0.8" fill="none" /><path d="M540.0 647.0 L540.0 651.0" stroke="#a0a0d0" stroke-width="0.8" fill="none" /><path d="M623.0 165.0 L623.0 169.0" stroke="#a0a0d0" stroke-width="0.8" fill="none" /><path d="M623.0 647.0 L623.0 651.0" stroke="#a0a0d0" stroke-width="0.8" fill="none" /><path d="M705.5 165.0 L705.5 169.0" stroke="#a0a0d0" stroke-width="0.8" fill="none" /><path d="M705.5 647.0 L705.5 651.0" stroke="#a0a0d0" stroke-width="0.8" fill="none" /><path d="M788.0 165.0 L788.0 169.0" stroke="#a0a0d0" stroke-width="0.8" fill="none" /><path d="M788.0 647.0 L788.0 651.0" stroke="#a0a0d0" stroke-width="0.8" fill="none" /><path d="M879.0 165.0 L879.0 169.0" stroke="#a0a0d0" stroke-width="0.8" fill="none" /><path d="M879.0 647.0 L879.0 651.0" stroke="#a0a0d0" stroke-width="0.8" fill="none" /><path d="M235.0 243.5 L243.5 243.5" stroke="#000" stroke-width="1.6" fill="none" /><path d="M920.4 243.5 L928.4 243.5" stroke="#000" stroke-width="1.6" fill="none" /><path d="M235.0 326.4 L243.5 326.4" stroke="#000" stroke-width="1.6" fill="none" /><path d="M920.4 326.4 L928.4 326.4" stroke="#000" stroke-width="1.6" fill="none" /><path d="M235.0 408.5 L243.5 408.5" stroke="#000" stroke-width="1.6" fill="none" /><path d="M920.4 408.5 L928.4 408.5" stroke="#000" stroke-width="1.6" fill="none" /><path d="M235.0 490.5 L243.5 490.5" stroke="#000" stroke-width="1.6" fill="none" /><path d="M920.4 490.5 L928.4 490.5" stroke="#000" stroke-width="1.6" fill="none" /><path d="M235.0 573.4 L243.5 573.4" stroke="#000" stroke-width="1.6" fill="none" /><path d="M920.4 573.4 L928.4 573.4" stroke="#000" stroke-width="1.6" fill="none" /><path d="M238.0 201.0 L238.0 205.0" stroke="#a0a0d0" stroke-width="0.8" fill="none" /><path d="M924.0 201.0 L924.0 205.0" stroke="#a0a0d0" stroke-width="0.8" fill="none" /><path d="M238.0 283.0 L238.0 287.0" stroke="#a0a0d0" stroke-width="0.8" fill="none" /><path d="M924.0 283.0 L924.0 287.0" stroke="#a0a0d0" stroke-width="0.8" fill="none" /><path d="M238.0 365.0 L238.0 369.0" stroke="#a0a0d0" stroke-width="0.8" fill="none" /><path d="M924.0 365.0 L924.0 369.0" stroke="#a0a0d0" stroke-width="0.8" fill="none" /><path d="M238.0 447.0 L238.0 451.0" stroke="#a0a0d0" stroke-width="0.8" fill="none" /><path d="M924.0 447.0 L924.0 451.0" stroke="#a0a0d0" stroke-width="0.8" fill="none" /><path d="M238.0 530.0 L238.0 534.0" stroke="#a0a0d0" stroke-width="0.8" fill="none" /><path d="M924.0 530.0 L924.0 534.0" stroke="#a0a0d0" stroke-width="0.8" fill="none" /><path d="M238.0 611.0 L238.0 615.0" stroke="#a0a0d0" stroke-width="0.8" fill="none" /><path d="M924.0 611.0 L924.0 615.0" stroke="#a0a0d0" stroke-width="0.8" fill="none" /><path d="M270.4 171.5 L270.4 619.2" stroke="#000" stroke-width="1.5" fill="none" /><path d="M243.5 344.0 L270.4 344.0" stroke="#000" stroke-width="1.3" fill="none" /><path d="M243.5 466.0 L270.4 466.0" stroke="#000" stroke-width="1.3" fill="none" /><path d="M243.5 477.7 L270.4 477.7" stroke="#000" stroke-width="1.3" fill="none" /><path d="M243.5 598.0 L270.4 598.0" stroke="#000" stroke-width="1.3" fill="none" /><text x="249" y="463" font-size="4.6" fill="#223" font-family="Liberation Sans" text-anchor="start" font-weight="bold" transform="rotate(-90 249 463)">created with</text><text x="249" y="433" font-size="4.2" fill="#7080b0" font-family="Liberation Sans" text-anchor="start" font-weight="normal" transform="rotate(-90 249 433)">PowerChage</text><text x="255" y="430" font-size="3.2" fill="#b09070" font-family="Liberation Sans" text-anchor="start" font-weight="normal" transform="rotate(-90 255 430)">k 0000 Checkmarks u. ArtPowerCharger 1</text><g transform="translate(262,459) rotate(-90)"><text x="0" y="0" font-size="13" font-weight="bold" font-style="italic" fill="#e02820" stroke="#e02820" stroke-width="1" font-family="Liberation Sans">E</text><text x="8" y="-6" font-size="7" font-weight="bold" fill="#e02820" font-family="Liberation Sans">3</text></g><text x="267" y="457" font-size="4.4" fill="#111" font-family="Liberation Sans" text-anchor="start" font-weight="bold" transform="rotate(-90 267 457)">wiec</text><text x="248" y="595" font-size="3.2" fill="#555" font-family="Liberation Sans" text-anchor="start" font-weight="normal" transform="rotate(-90 248 595)">We reserve all rights in this document and in the infor-</text><text x="252" y="595" font-size="3.2" fill="#555" font-family="Liberation Sans" text-anchor="start" font-weight="normal" transform="rotate(-90 252 595)">mation contained therein. Reproduction, use or disclosure</text><text x="256" y="595" font-size="3.2" fill="#555" font-family="Liberation Sans" text-anchor="start" font-weight="normal" transform="rotate(-90 256 595)">to third parties without express authority is strictly</text><text x="260" y="595" font-size="3.2" fill="#555" font-family="Liberation Sans" text-anchor="start" font-weight="normal" transform="rotate(-90 260 595)">forbidden.</text><text x="264" y="595" font-size="3.2" fill="#555" font-family="Liberation Sans" text-anchor="start" font-weight="normal" transform="rotate(-90 264 595)">&#169; Zuken</text><path d="M243.5 619.2 L406.4 619.2" stroke="#000" stroke-width="1.2" fill="none" /><path d="M243.5 625.6 L406.4 625.6" stroke="#000" stroke-width="1.2" fill="none" /><path d="M243.5 632.0 L406.4 632.0" stroke="#000" stroke-width="1.2" fill="none" /><path d="M243.5 638.5 L406.4 638.5" stroke="#000" stroke-width="1.2" fill="none" /><path d="M243.5 619.2 L920.4 619.2" stroke="#000" stroke-width="1.6" fill="none" /><path d="M270.4 619.2 L270.4 645.2" stroke="#000" stroke-width="1.2" fill="none" /><path d="M303.7 619.2 L303.7 645.2" stroke="#000" stroke-width="1.2" fill="none" /><path d="M323.5 619.2 L323.5 645.2" stroke="#000" stroke-width="1.2" fill="none" /><path d="M344.4 619.2 L344.4 645.2" stroke="#000" stroke-width="1.2" fill="none" /><path d="M364.4 619.2 L364.4 645.2" stroke="#000" stroke-width="1.2" fill="none" /><path d="M406.4 619.2 L406.4 645.2" stroke="#000" stroke-width="1.2" fill="none" /><path d="M541.6 619.2 L541.6 645.2" stroke="#000" stroke-width="1.2" fill="none" /><path d="M612.5 619.2 L612.5 645.2" stroke="#000" stroke-width="1.2" fill="none" /><path d="M725.7 619.2 L725.7 645.2" stroke="#000" stroke-width="1.2" fill="none" /><path d="M406.4 638.5 L612.5 638.5" stroke="#000" stroke-width="1.1" fill="none" /><path d="M473.5 638.5 L473.5 645.2" stroke="#000" stroke-width="1.1" fill="none" /><path d="M725.7 632.0 L920.4 632.0" stroke="#000" stroke-width="1.1" fill="none" /><path d="M842.2 625.6 L920.4 625.6" stroke="#000" stroke-width="0.9" fill="none" /><path d="M842.2 619.2 L842.2 632.0" stroke="#000" stroke-width="0.9" fill="none" /><path d="M775.0 632.0 L775.0 645.2" stroke="#000" stroke-width="1.1" fill="none" /><path d="M893.1 638.5 L920.4 638.5" stroke="#000" stroke-width="0.9" fill="none" /><path d="M893.1 632.0 L893.1 645.2" stroke="#000" stroke-width="0.9" fill="none" /><text x="347" y="623.5" font-size="3.4" fill="#666" font-family="Liberation Sans" text-anchor="start" font-weight="normal">Date</text><text x="366" y="623.5" font-size="3.4" fill="#666" font-family="Liberation Sans" text-anchor="start" font-weight="normal">2020-10-01</text><text x="347" y="630" font-size="3.4" fill="#666" font-family="Liberation Sans" text-anchor="start" font-weight="normal">Date</text><text x="366" y="630" font-size="3.4" fill="#666" font-family="Liberation Sans" text-anchor="start" font-weight="normal">TPBI-ab</text><text x="347" y="636.5" font-size="3.4" fill="#666" font-family="Liberation Sans" text-anchor="start" font-weight="normal">Prov</text><text x="366" y="636.5" font-size="3.4" fill="#666" font-family="Liberation Sans" text-anchor="start" font-weight="normal">TPBI-bb</text><text x="246" y="643" font-size="3.4" fill="#666" font-family="Liberation Sans" text-anchor="start" font-weight="normal">Chan.</text><text x="272" y="643" font-size="3.4" fill="#666" font-family="Liberation Sans" text-anchor="start" font-weight="normal">Chan.</text><text x="306" y="643" font-size="3.4" fill="#666" font-family="Liberation Sans" text-anchor="start" font-weight="normal">Dat</text><text x="326" y="643" font-size="3.4" fill="#666" font-family="Liberation Sans" text-anchor="start" font-weight="normal">Nam</text><text x="347" y="643" font-size="3.4" fill="#666" font-family="Liberation Sans" text-anchor="start" font-weight="normal">Chandb</text><text x="409" y="643" font-size="3.4" fill="#666" font-family="Liberation Sans" text-anchor="start" font-weight="normal">Origin     Origin</text><text x="476" y="643" font-size="3.4" fill="#666" font-family="Liberation Sans" text-anchor="start" font-weight="normal">Repl.        replaced by</text><text x="544" y="643" font-size="3.4" fill="#666" font-family="Liberation Sans" text-anchor="start" font-weight="normal">Repl.   Repl. by</text><text x="474" y="624" font-size="3.4" fill="#777" font-family="Liberation Sans" text-anchor="middle" font-weight="normal">customer</text><text x="474" y="630" font-size="3.4" fill="#777" font-family="Liberation Sans" text-anchor="middle" font-weight="normal">order number</text><text x="474" y="636" font-size="3.4" fill="#777" font-family="Liberation Sans" text-anchor="middle" font-weight="normal">order</text><text x="0" y="0" font-size="12.3" font-weight="bold" fill="#161616" font-family="Liberation Sans" letter-spacing="0.3" transform="translate(545 632.3) scale(1.36 1)">ZUKEN</text><circle cx="606" cy="624.5" r=".6" fill="#555"/><text x="669" y="628.5" font-size="6.5" fill="#111" font-family="Liberation Sans" text-anchor="middle" font-weight="normal">circuit diagram</text><text x="669" y="638.5" font-size="6" fill="#111" font-family="Liberation Sans" text-anchor="middle" font-weight="normal">AVR-370</text><text x="728" y="628" font-size="6.2" fill="#111" font-family="Liberation Sans" text-anchor="start" font-weight="normal">987654-321</text><text x="778" y="641.5" font-size="6.2" fill="#111" font-family="Liberation Sans" text-anchor="start" font-weight="normal">123456-789</text><text x="728" y="636" font-size="3" fill="#888" font-family="Liberation Sans" text-anchor="start" font-weight="normal">external remark 1 2</text><text x="728" y="642.5" font-size="3" fill="#888" font-family="Liberation Sans" text-anchor="start" font-weight="normal">external remark 2 2</text><text x="844" y="624" font-size="3" fill="#888" font-family="Liberation Sans" text-anchor="start" font-weight="normal">Dat</text><text x="896" y="636.5" font-size="3" fill="#888" font-family="Liberation Sans" text-anchor="start" font-weight="normal">Page   20</text><text x="905" y="643" font-size="3" fill="#888" font-family="Liberation Sans" text-anchor="start" font-weight="normal">of 35</text><rect x="413.3" y="191.1" width="238.49999999999994" height="165.4" fill="none" stroke="#008080" stroke-width="1.25" stroke-dasharray="17.3 6.4"/><rect x="294.6" y="270.6" width="112.89999999999998" height="85.89999999999998" fill="none" stroke="#008080" stroke-width="1.25" stroke-dasharray="17.3 6.4"/><rect x="294.5" y="501.3" width="443.0" height="78.90000000000003" fill="none" stroke="#008080" stroke-width="1.25" stroke-dasharray="17.3 6.4"/><text x="399" y="204" font-size="5" fill="#605050" font-family="Liberation Sans" text-anchor="start" font-weight="normal">+O1</text><text x="280" y="283" font-size="5" fill="#605050" font-family="Liberation Sans" text-anchor="start" font-weight="normal">+O2</text><text x="279" y="514" font-size="5" fill="#605050" font-family="Liberation Sans" text-anchor="start" font-weight="normal">+O4</text><rect x="425.6" y="203.4" width="212.8" height="112.5" fill="#ffffa8"/><path d="M638.4 203.4 L425.6 203.4 L425.6 315.9 L638.4 315.9" stroke="#b82810" stroke-width="2" fill="none" /><path d="M637.5 204.0 L642.0 210.2 L636.2 216.5 L642.0 222.8 L636.2 229.0 L642.0 235.2 L636.2 241.5 L642.0 247.8 L636.2 254.0 L642.0 260.2 L636.2 266.5 L642.0 272.8 L636.2 279.0 L642.0 285.2 L636.2 291.5 L642.0 297.8 L636.2 304.0 L642.0 310.2 L641.0 316.5" stroke="#2020ff" stroke-width="1" fill="none" /><rect x="506.3" y="237.3" width="39.6" height="53.4" fill="#fff" stroke="#111" stroke-width="1.2"/><rect x="510.5" y="232" width="5" height="5.3" fill="#fff" stroke="#111" stroke-width="1"/><rect x="536.5" y="232" width="5" height="5.3" fill="#fff" stroke="#111" stroke-width="1"/><path d="M513 234.5H514M538 234.5H540M513.5 233.5V235.5" stroke="#111" stroke-width=".8"/><path d="M509 249L527 243.5L543 249V256H509Z" fill="#111"/><rect x="509" y="259" width="34" height="6.8" fill="#111"/><rect x="509" y="269" width="34" height="6.9" fill="#111"/><rect x="509" y="277" width="34" height="4.3" fill="#111"/><rect x="509" y="283" width="34" height="3" fill="#111"/><text x="433" y="259" font-size="4.8" fill="#706050" font-family="Liberation Sans" text-anchor="start" font-weight="normal">0202C1</text><text x="433" y="278.5" font-size="5" fill="#111" font-family="Liberation Sans" text-anchor="start" font-weight="bold">-BP4</text><text x="433" y="292" font-size="5.4" fill="#605040" font-family="Liberation Sans" text-anchor="start" font-weight="normal">BZ+EA+EW</text><path d="M466.1 306.0 L466.1 314.0" stroke="#000" stroke-width="0.8" fill="none" /><rect x="464.6" y="313.7" width="3" height="10" fill="#2a0a0a"/><text x="465.1" y="311" font-size="4" fill="#333" font-family="Liberation Sans" text-anchor="start" font-weight="normal" transform="rotate(-90 465.1 311)">1/12</text><path d="M464.1 323.5A2 2 0 0 0 468.1 323.5" stroke="#111" fill="none" stroke-width="1"/><path d="M466.1 325.0 L466.1 336.0" stroke="#000" stroke-width="1" fill="none" /><text x="464.1" y="333" font-size="3" fill="#999" font-family="Liberation Sans" text-anchor="start" font-weight="normal" transform="rotate(-90 464.1 333)">bk</text><path d="M479.3 306.0 L479.3 314.0" stroke="#000" stroke-width="0.8" fill="none" /><rect x="477.8" y="313.7" width="3" height="10" fill="#2a0a0a"/><text x="478.32000000000005" y="311" font-size="4" fill="#333" font-family="Liberation Sans" text-anchor="start" font-weight="normal" transform="rotate(-90 478.32000000000005 311)">2/12</text><path d="M477.3 323.5A2 2 0 0 0 481.3 323.5" stroke="#111" fill="none" stroke-width="1"/><path d="M479.3 325.0 L479.3 336.0" stroke="#000" stroke-width="1" fill="none" /><text x="477.32000000000005" y="333" font-size="3" fill="#999" font-family="Liberation Sans" text-anchor="start" font-weight="normal" transform="rotate(-90 477.32000000000005 333)">bk</text><path d="M492.5 306.0 L492.5 314.0" stroke="#000" stroke-width="0.8" fill="none" /><rect x="491.0" y="313.7" width="3" height="10" fill="#2a0a0a"/><text x="491.54" y="311" font-size="4" fill="#333" font-family="Liberation Sans" text-anchor="start" font-weight="normal" transform="rotate(-90 491.54 311)">3/12</text><path d="M490.5 323.5A2 2 0 0 0 494.5 323.5" stroke="#111" fill="none" stroke-width="1"/><path d="M492.5 325.0 L492.5 336.0" stroke="#000" stroke-width="1" fill="none" /><text x="490.54" y="333" font-size="3" fill="#999" font-family="Liberation Sans" text-anchor="start" font-weight="normal" transform="rotate(-90 490.54 333)">bk</text><path d="M505.8 306.0 L505.8 314.0" stroke="#000" stroke-width="0.8" fill="none" /><rect x="504.3" y="313.7" width="3" height="10" fill="#2a0a0a"/><text x="504.76000000000005" y="311" font-size="4" fill="#333" font-family="Liberation Sans" text-anchor="start" font-weight="normal" transform="rotate(-90 504.76000000000005 311)">4/12</text><path d="M503.8 323.5A2 2 0 0 0 507.8 323.5" stroke="#111" fill="none" stroke-width="1"/><path d="M505.8 325.0 L505.8 336.0" stroke="#000" stroke-width="1" fill="none" /><text x="503.76000000000005" y="333" font-size="3" fill="#999" font-family="Liberation Sans" text-anchor="start" font-weight="normal" transform="rotate(-90 503.76000000000005 333)">bk</text><path d="M519.0 306.0 L519.0 314.0" stroke="#000" stroke-width="0.8" fill="none" /><rect x="517.5" y="313.7" width="3" height="10" fill="#2a0a0a"/><text x="517.98" y="311" font-size="4" fill="#333" font-family="Liberation Sans" text-anchor="start" font-weight="normal" transform="rotate(-90 517.98 311)">5/12</text><path d="M532.2 306.0 L532.2 314.0" stroke="#000" stroke-width="0.8" fill="none" /><rect x="530.7" y="313.7" width="3" height="10" fill="#2a0a0a"/><text x="531.2" y="311" font-size="4" fill="#333" font-family="Liberation Sans" text-anchor="start" font-weight="normal" transform="rotate(-90 531.2 311)">6/12</text><path d="M545.4 306.0 L545.4 314.0" stroke="#000" stroke-width="0.8" fill="none" /><rect x="543.9" y="313.7" width="3" height="10" fill="#2a0a0a"/><text x="544.4200000000001" y="311" font-size="4" fill="#333" font-family="Liberation Sans" text-anchor="start" font-weight="normal" transform="rotate(-90 544.4200000000001 311)">7/12</text><path d="M543.4 323.5A2 2 0 0 0 547.4 323.5" stroke="#111" fill="none" stroke-width="1"/><path d="M545.4 325.0 L545.4 336.0" stroke="#000" stroke-width="1" fill="none" /><text x="543.4200000000001" y="333" font-size="3" fill="#999" font-family="Liberation Sans" text-anchor="start" font-weight="normal" transform="rotate(-90 543.4200000000001 333)">bk</text><path d="M558.6 306.0 L558.6 314.0" stroke="#000" stroke-width="0.8" fill="none" /><rect x="557.1" y="313.7" width="3" height="10" fill="#2a0a0a"/><text x="557.64" y="311" font-size="4" fill="#333" font-family="Liberation Sans" text-anchor="start" font-weight="normal" transform="rotate(-90 557.64 311)">8/12</text><path d="M556.6 323.5A2 2 0 0 0 560.6 323.5" stroke="#111" fill="none" stroke-width="1"/><path d="M558.6 325.0 L558.6 336.0" stroke="#000" stroke-width="1" fill="none" /><text x="556.64" y="333" font-size="3" fill="#999" font-family="Liberation Sans" text-anchor="start" font-weight="normal" transform="rotate(-90 556.64 333)">bk</text><path d="M571.9 306.0 L571.9 314.0" stroke="#000" stroke-width="0.8" fill="none" /><rect x="570.4" y="313.7" width="3" height="10" fill="#2a0a0a"/><text x="570.86" y="311" font-size="4" fill="#333" font-family="Liberation Sans" text-anchor="start" font-weight="normal" transform="rotate(-90 570.86 311)">9/12</text><path d="M569.9 323.5A2 2 0 0 0 573.9 323.5" stroke="#111" fill="none" stroke-width="1"/><path d="M571.9 325.0 L571.9 336.0" stroke="#000" stroke-width="1" fill="none" /><text x="569.86" y="333" font-size="3" fill="#999" font-family="Liberation Sans" text-anchor="start" font-weight="normal" transform="rotate(-90 569.86 333)">bk</text><path d="M585.1 306.0 L585.1 314.0" stroke="#000" stroke-width="0.8" fill="none" /><rect x="583.6" y="313.7" width="3" height="10" fill="#2a0a0a"/><text x="584.08" y="311" font-size="4" fill="#333" font-family="Liberation Sans" text-anchor="start" font-weight="normal" transform="rotate(-90 584.08 311)">10/12</text><path d="M583.1 323.5A2 2 0 0 0 587.1 323.5" stroke="#111" fill="none" stroke-width="1"/><path d="M585.1 325.0 L585.1 336.0" stroke="#000" stroke-width="1" fill="none" /><text x="583.08" y="333" font-size="3" fill="#999" font-family="Liberation Sans" text-anchor="start" font-weight="normal" transform="rotate(-90 583.08 333)">bk</text><path d="M598.3 306.0 L598.3 314.0" stroke="#000" stroke-width="0.8" fill="none" /><rect x="596.8" y="313.7" width="3" height="10" fill="#2a0a0a"/><text x="597.3000000000001" y="311" font-size="4" fill="#333" font-family="Liberation Sans" text-anchor="start" font-weight="normal" transform="rotate(-90 597.3000000000001 311)">11/12</text><path d="M611.5 306.0 L611.5 314.0" stroke="#000" stroke-width="0.8" fill="none" /><rect x="610.0" y="313.7" width="3" height="10" fill="#2a0a0a"/><text x="610.52" y="311" font-size="4" fill="#333" font-family="Liberation Sans" text-anchor="start" font-weight="normal" transform="rotate(-90 610.52 311)">12/12</text><text x="615.5" y="310" font-size="4.4" fill="#444" font-family="Liberation Sans" text-anchor="start" font-weight="normal" transform="rotate(-90 615.5 310)">MINI-MAL-12-8</text><text x="458" y="320" font-size="4.5" fill="#333" font-family="Liberation Sans" text-anchor="start" font-weight="bold" transform="rotate(-90 458 320)">-X1</text><text x="458" y="340" font-size="4.5" fill="#8080a0" font-family="Liberation Sans" text-anchor="start" font-weight="normal" transform="rotate(-90 458 340)">-X1.1</text><path d="M360.4 277.3 L380.5 277.3 L380.5 323.0" stroke="#2a0a0a" stroke-width="1.2" fill="none" /><path d="M360.4 277.3 L360.4 290.0" stroke="#2a0a0a" stroke-width="1.2" fill="none" /><path d="M354.0 289.0 L360.4 301.4 L360.4 323.0" stroke="#2a0a0a" stroke-width="1.2" fill="none" /><path d="M352.5 297.0 L358.0 297.0" stroke="#2a0a0a" stroke-width="1" fill="none" /><path d="M329.5 292.0 L329.5 302.0" stroke="#2a0a0a" stroke-width="1" fill="none" /><path d="M329.5 297.0 L348.0 297.0" stroke="#2a0a0a" stroke-width="1" fill="none" /><rect x="334.5" y="292" width="12.5" height="10" fill="none" stroke="#2a0a0a" stroke-width="1.1"/><path d="M340.7 292V302M334.5 297H347" stroke="#2a0a0a" stroke-width="1"/><text x="317" y="299" font-size="5" fill="#111" font-family="Liberation Sans" text-anchor="start" font-weight="bold">-S2</text><text x="308" y="305.5" font-size="4.6" fill="#706050" font-family="Liberation Sans" text-anchor="start" font-weight="normal">Schalter</text><rect x="359.0" y="313.7" width="3" height="10" fill="#2a0a0a"/><path d="M358.5 323.5A2 2 0 0 0 362.5 323.5" stroke="#111" fill="none" stroke-width="1"/><path d="M360.5 325.0 L360.5 336.0" stroke="#000" stroke-width="1" fill="none" /><rect x="379.0" y="313.7" width="3" height="10" fill="#2a0a0a"/><path d="M378.5 323.5A2 2 0 0 0 382.5 323.5" stroke="#111" fill="none" stroke-width="1"/><path d="M380.5 325.0 L380.5 336.0" stroke="#000" stroke-width="1" fill="none" /><text x="358" y="344" font-size="4.5" fill="#666" font-family="Liberation Sans" text-anchor="start" font-weight="normal" transform="rotate(-90 358 344)">-S2.1</text><text x="378" y="344" font-size="4.5" fill="#666" font-family="Liberation Sans" text-anchor="start" font-weight="normal" transform="rotate(-90 378 344)">-S2.2</text><text x="367" y="372" font-size="4.2" fill="#444" font-family="Liberation Sans" text-anchor="start" font-weight="normal" transform="rotate(-90 367 372)">FASTON-H-6.3-1.5</text><path d="M360.6 336.0 L360.6 535.0" stroke="#0000f0" stroke-width="1.3" fill="none" /><path d="M380.2 336.0 L380.2 468.3 L558.5 468.3 L558.5 535.0" stroke="#0000f0" stroke-width="1.3" fill="none" /><path d="M380.2 337.0 L374.3 348.5 L374.3 535.0" stroke="#0000f0" stroke-width="1.3" fill="none" /><path d="M466.1 336.0 L466.1 382.2 L387.4 382.2 L387.4 535.0" stroke="#0000f0" stroke-width="1.3" fill="none" /><path d="M479.3 336.0 L479.3 409.2 L413.8 409.2 L413.8 535.0" stroke="#0000f0" stroke-width="1.3" fill="none" /><path d="M492.5 336.0 L492.5 448.0 L479.4 448.0 L479.4 535.0" stroke="#0000f0" stroke-width="1.3" fill="none" /><path d="M505.8 336.0 L505.8 435.4 L466.3 435.4 L466.3 535.0" stroke="#0000f0" stroke-width="1.3" fill="none" /><path d="M545.4 336.0 L545.4 396.6 L400.3 396.6 L400.3 535.0" stroke="#0000f0" stroke-width="1.3" fill="none" /><path d="M558.6 336.0 L558.6 422.3 L426.6 422.3 L426.6 535.0" stroke="#0000f0" stroke-width="1.3" fill="none" /><path d="M571.8 336.0 L571.8 535.0" stroke="#0000f0" stroke-width="1.3" fill="none" /><path d="M571.8 390.0 L578.0 396.6 L611.6 396.6 L611.6 535.0" stroke="#0000f0" stroke-width="1.3" fill="none" /><path d="M585.1 336.0 L585.1 535.0" stroke="#0000f0" stroke-width="1.3" fill="none" /><path d="M690.4 342.0 L690.4 429.0 L650.9 429.0 L650.9 535.0" stroke="#0000f0" stroke-width="1.3" fill="none" /><path d="M717.8 342.0 L717.8 435.2 L664.1 435.2 L664.1 535.0" stroke="#0000f0" stroke-width="1.3" fill="none" /><path d="M669.0 439.6 L688.0 423.4" stroke="#2a0a0a" stroke-width="1" fill="none" /><path d="M664.0 439.6 L669.0 439.6" stroke="#2a0a0a" stroke-width="1" fill="none" /><path d="M688.0 423.4 L692.0 423.4" stroke="#2a0a0a" stroke-width="1" fill="none" /><text x="526" y="395" font-size="3.5" fill="#8aa8e8" font-family="Liberation Sans" text-anchor="start" font-weight="normal">bl</text><text x="526" y="422" font-size="3.5" fill="#8aa8e8" font-family="Liberation Sans" text-anchor="start" font-weight="normal">0.5 bn</text><text x="357.5" y="436" font-size="3.6" fill="#806070" font-family="Liberation Sans" text-anchor="start" font-weight="normal" transform="rotate(-90 357.5 436)">0.5mm</text><text x="357.5" y="420" font-size="3.6" fill="#806070" font-family="Liberation Sans" text-anchor="start" font-weight="normal" transform="rotate(-90 357.5 420)">bk</text><path d="M357.0 425.0 L360.5 421.0 L361.5 421.0" stroke="#2a0a0a" stroke-width="1" fill="none" /><text x="371.5" y="436" font-size="3.6" fill="#806070" font-family="Liberation Sans" text-anchor="start" font-weight="normal" transform="rotate(-90 371.5 436)">0.5mm</text><text x="371.5" y="420" font-size="3.6" fill="#806070" font-family="Liberation Sans" text-anchor="start" font-weight="normal" transform="rotate(-90 371.5 420)">bk</text><path d="M371.0 425.0 L374.5 421.0 L375.5 421.0" stroke="#2a0a0a" stroke-width="1" fill="none" /><text x="377.5" y="436" font-size="3.6" fill="#806070" font-family="Liberation Sans" text-anchor="start" font-weight="normal" transform="rotate(-90 377.5 436)">0.5mm</text><text x="377.5" y="420" font-size="3.6" fill="#806070" font-family="Liberation Sans" text-anchor="start" font-weight="normal" transform="rotate(-90 377.5 420)">bk</text><path d="M377.0 425.0 L380.5 421.0 L381.5 421.0" stroke="#2a0a0a" stroke-width="1" fill="none" /><rect x="565.2" y="478.2" width="48.6" height="7.4" rx="3.7" fill="none" stroke="#3a1010" stroke-width="1.4"/><text x="623.5" y="505" font-size="4.8" fill="#444" font-family="Liberation Sans" text-anchor="start" font-weight="normal" transform="rotate(-90 623.5 505)">-W10.SH2</text><text x="620" y="480" font-size="3.3" fill="#8aa8e8" font-family="Liberation Sans" text-anchor="start" font-weight="normal">PE 12</text><path d="M616.0 482.0 L677.4 482.0 L677.4 547.0" stroke="#ffff00" stroke-width="2.6" fill="none" /><path d="M616.0 482.0 L677.4 482.0 L677.4 547.0" stroke="#10a010" stroke-width="2.6" fill="none" stroke-dasharray="4.5 4.5"/><path d="M677.4 508.0 L717.0 508.0 L717.0 555.0" stroke="#ffff00" stroke-width="2.6" fill="none" /><path d="M677.4 508.0 L717.0 508.0 L717.0 555.0" stroke="#10a010" stroke-width="2.6" fill="none" stroke-dasharray="4.5 4.5"/><circle cx="677.4" cy="547.4" r="2.6" fill="#000"/><circle cx="677.4" cy="508" r="1" fill="#0000ff"/><path d="M717.0 553.0 L717.0 560.0" stroke="#000" stroke-width="1" fill="none" /><path d="M711.0 560.0 L723.0 560.0" stroke="#000" stroke-width="1" fill="none" /><path d="M713.0 563.0 L721.0 563.0" stroke="#000" stroke-width="1" fill="none" /><path d="M715.0 566.0 L719.0 566.0" stroke="#000" stroke-width="1" fill="none" /><text x="672" y="540" font-size="4" fill="#444" font-family="Liberation Sans" text-anchor="start" font-weight="normal" transform="rotate(-90 672 540)">D-SUB009-MC_AB</text><text x="675" y="545" font-size="3.5" fill="#444" font-family="Liberation Sans" text-anchor="start" font-weight="normal" transform="rotate(-90 675 545)">MIH</text><path d="M687.0 330.4 L677.2 330.4 L677.2 277.2 L730.7 277.2 L730.7 330.4 L721.0 330.4" stroke="#2a0a0a" stroke-width="1.2" fill="none" /><path d="M690.4 323.0 L690.4 283.7 L717.8 283.7 L717.8 323.0" stroke="#2a0a0a" stroke-width="1.2" fill="none" /><path d="M699.6 283.7 L699.6 313.4 L690.4 313.4" stroke="#2a0a0a" stroke-width="1.2" fill="none" /><path d="M682 303.5L685.5 295.5H707L703.5 303.5Z" stroke="#111" stroke-width="1.1" fill="none"/><path d="M684 302L688 296.5L691 302L695 296.5L698 302L702 296.5L705 300" stroke="#111" stroke-width="1.1" fill="none"/><path d="M704 297L709 293.5M707 293L709.5 293.2L708.5 295.5" stroke="#111" stroke-width=".9" fill="none"/><text x="665" y="300" font-size="4.8" fill="#806050" font-family="Liberation Sans" text-anchor="start" font-weight="normal">+O3</text><text x="664" y="305.5" font-size="4.8" fill="#302020" font-family="Liberation Sans" text-anchor="start" font-weight="bold">-6P8</text><text x="665" y="311" font-size="4.8" fill="#806050" font-family="Liberation Sans" text-anchor="start" font-weight="normal">LED</text><rect x="688.9" y="322" width="3" height="9" fill="#2a0a0a"/><path d="M690.4 331.0 L690.4 342.0" stroke="#000" stroke-width="1" fill="none" /><text x="696.4" y="369" font-size="4.6" fill="#504040" font-family="Liberation Sans" text-anchor="start" font-weight="normal" transform="rotate(-90 696.4 369)">LiYHHHL4G-K</text><text x="677.4" y="348" font-size="4.6" fill="#906040" font-family="Liberation Sans" text-anchor="start" font-weight="normal" transform="rotate(-90 677.4 348)">+O3</text><text x="682.4" y="346" font-size="4.6" fill="#504040" font-family="Liberation Sans" text-anchor="start" font-weight="normal" transform="rotate(-90 682.4 346)">-X4</text><text x="687.4" y="340" font-size="3.6" fill="#999" font-family="Liberation Sans" text-anchor="start" font-weight="normal" transform="rotate(-90 687.4 340)">x</text><rect x="716.3" y="322" width="3" height="9" fill="#2a0a0a"/><path d="M717.8 331.0 L717.8 342.0" stroke="#000" stroke-width="1" fill="none" /><text x="723.8" y="369" font-size="4.6" fill="#504040" font-family="Liberation Sans" text-anchor="start" font-weight="normal" transform="rotate(-90 723.8 369)">LiYHHHL4G-K</text><text x="704.8" y="348" font-size="4.6" fill="#906040" font-family="Liberation Sans" text-anchor="start" font-weight="normal" transform="rotate(-90 704.8 348)">+O3</text><text x="709.8" y="346" font-size="4.6" fill="#504040" font-family="Liberation Sans" text-anchor="start" font-weight="normal" transform="rotate(-90 709.8 346)">-X4</text><text x="714.8" y="340" font-size="3.6" fill="#999" font-family="Liberation Sans" text-anchor="start" font-weight="normal" transform="rotate(-90 714.8 340)">x</text><path d="M360.8 535.0 L360.8 546.0" stroke="#000" stroke-width="1.3" fill="none" /><path d="M358.0 547.2L359.2 545.6H362.4L363.0 547.6" stroke="#000" fill="none" stroke-width="1.1"/><text x="359.3" y="541.5" font-size="3.6" fill="#a08870" font-family="Liberation Sans" text-anchor="start" font-weight="normal" transform="rotate(-90 359.3 541.5)">bk</text><path d="M358.3 495.0 L363.3 495.0" stroke="#444" stroke-width="0.7" fill="none" /><path d="M359.3 497.0 L362.3 493.0" stroke="#111" stroke-width="0.9" fill="none" /><path d="M374.5 535.0 L374.5 546.0" stroke="#000" stroke-width="1.3" fill="none" /><path d="M371.7 547.2L372.9 545.6H376.1L376.7 547.6" stroke="#000" fill="none" stroke-width="1.1"/><text x="373.0" y="541.5" font-size="3.6" fill="#a08870" font-family="Liberation Sans" text-anchor="start" font-weight="normal" transform="rotate(-90 373.0 541.5)">bk</text><path d="M372.0 495.0 L377.0 495.0" stroke="#444" stroke-width="0.7" fill="none" /><path d="M373.0 497.0 L376.0 493.0" stroke="#111" stroke-width="0.9" fill="none" /><path d="M387.5 535.0 L387.5 546.0" stroke="#000" stroke-width="1.3" fill="none" /><path d="M384.7 547.2L385.9 545.6H389.1L389.7 547.6" stroke="#000" fill="none" stroke-width="1.1"/><text x="386.0" y="541.5" font-size="3.6" fill="#a08870" font-family="Liberation Sans" text-anchor="start" font-weight="normal" transform="rotate(-90 386.0 541.5)">bk</text><path d="M385.0 495.0 L390.0 495.0" stroke="#444" stroke-width="0.7" fill="none" /><path d="M386.0 497.0 L389.0 493.0" stroke="#111" stroke-width="0.9" fill="none" /><path d="M400.5 535.0 L400.5 546.0" stroke="#000" stroke-width="1.3" fill="none" /><path d="M397.7 547.2L398.9 545.6H402.1L402.7 547.6" stroke="#000" fill="none" stroke-width="1.1"/><text x="399.0" y="541.5" font-size="3.6" fill="#a08870" font-family="Liberation Sans" text-anchor="start" font-weight="normal" transform="rotate(-90 399.0 541.5)">bk</text><path d="M398.0 495.0 L403.0 495.0" stroke="#444" stroke-width="0.7" fill="none" /><path d="M399.0 497.0 L402.0 493.0" stroke="#111" stroke-width="0.9" fill="none" /><path d="M413.5 535.0 L413.5 546.0" stroke="#000" stroke-width="1.3" fill="none" /><path d="M410.7 547.2L411.9 545.6H415.1L415.7 547.6" stroke="#000" fill="none" stroke-width="1.1"/><text x="412.0" y="541.5" font-size="3.6" fill="#a08870" font-family="Liberation Sans" text-anchor="start" font-weight="normal" transform="rotate(-90 412.0 541.5)">bk</text><path d="M411.0 495.0 L416.0 495.0" stroke="#444" stroke-width="0.7" fill="none" /><path d="M412.0 497.0 L415.0 493.0" stroke="#111" stroke-width="0.9" fill="none" /><path d="M426.5 535.0 L426.5 546.0" stroke="#000" stroke-width="1.3" fill="none" /><path d="M423.7 547.2L424.9 545.6H428.1L428.7 547.6" stroke="#000" fill="none" stroke-width="1.1"/><text x="425.0" y="541.5" font-size="3.6" fill="#a08870" font-family="Liberation Sans" text-anchor="start" font-weight="normal" transform="rotate(-90 425.0 541.5)">bk</text><path d="M424.0 495.0 L429.0 495.0" stroke="#444" stroke-width="0.7" fill="none" /><path d="M425.0 497.0 L428.0 493.0" stroke="#111" stroke-width="0.9" fill="none" /><path d="M440.5 537.0 L440.5 546.0" stroke="#000" stroke-width="1.3" fill="none" /><path d="M437.7 547.2L438.9 545.6H442.1L442.7 547.6" stroke="#000" fill="none" stroke-width="1.1"/><text x="439.0" y="541.5" font-size="3.6" fill="#a08870" font-family="Liberation Sans" text-anchor="start" font-weight="normal" transform="rotate(-90 439.0 541.5)">bk</text><path d="M453.7 537.0 L453.7 546.0" stroke="#000" stroke-width="1.3" fill="none" /><path d="M450.9 547.2L452.1 545.6H455.3L455.9 547.6" stroke="#000" fill="none" stroke-width="1.1"/><text x="452.2" y="541.5" font-size="3.6" fill="#a08870" font-family="Liberation Sans" text-anchor="start" font-weight="normal" transform="rotate(-90 452.2 541.5)">bk</text><path d="M466.7 535.0 L466.7 546.0" stroke="#000" stroke-width="1.3" fill="none" /><path d="M463.9 547.2L465.1 545.6H468.3L468.9 547.6" stroke="#000" fill="none" stroke-width="1.1"/><text x="465.2" y="541.5" font-size="3.6" fill="#a08870" font-family="Liberation Sans" text-anchor="start" font-weight="normal" transform="rotate(-90 465.2 541.5)">bk</text><path d="M464.2 495.0 L469.2 495.0" stroke="#444" stroke-width="0.7" fill="none" /><path d="M465.2 497.0 L468.2 493.0" stroke="#111" stroke-width="0.9" fill="none" /><path d="M480.0 535.0 L480.0 546.0" stroke="#000" stroke-width="1.3" fill="none" /><path d="M477.2 547.2L478.4 545.6H481.6L482.2 547.6" stroke="#000" fill="none" stroke-width="1.1"/><text x="478.5" y="541.5" font-size="3.6" fill="#a08870" font-family="Liberation Sans" text-anchor="start" font-weight="normal" transform="rotate(-90 478.5 541.5)">bk</text><path d="M477.5 495.0 L482.5 495.0" stroke="#444" stroke-width="0.7" fill="none" /><path d="M478.5 497.0 L481.5 493.0" stroke="#111" stroke-width="0.9" fill="none" /><text x="355" y="539" font-size="5" fill="#806040" font-family="Liberation Sans" text-anchor="start" font-weight="bold" transform="rotate(-90 355 539)">-X2</text><text x="487" y="542" font-size="5" fill="#444" font-family="Liberation Sans" text-anchor="start" font-weight="normal" transform="rotate(-90 487 542)">JPT-0-10</text><text x="345" y="496" font-size="3.5" fill="#888" font-family="Liberation Sans" text-anchor="start" font-weight="normal">W10</text><text x="358.8" y="522" font-size="3.2" fill="#8aa8e8" font-family="Liberation Sans" text-anchor="start" font-weight="normal" transform="rotate(-90 358.8 522)">0.5 bk</text><text x="372.5" y="522" font-size="3.2" fill="#8aa8e8" font-family="Liberation Sans" text-anchor="start" font-weight="normal" transform="rotate(-90 372.5 522)">0.5 bk</text><text x="385.5" y="522" font-size="3.2" fill="#8aa8e8" font-family="Liberation Sans" text-anchor="start" font-weight="normal" transform="rotate(-90 385.5 522)">bl</text><text x="398.5" y="522" font-size="3.2" fill="#8aa8e8" font-family="Liberation Sans" text-anchor="start" font-weight="normal" transform="rotate(-90 398.5 522)">bl</text><text x="411.5" y="522" font-size="3.2" fill="#8aa8e8" font-family="Liberation Sans" text-anchor="start" font-weight="normal" transform="rotate(-90 411.5 522)">0.5 bn</text><text x="424.5" y="522" font-size="3.2" fill="#8aa8e8" font-family="Liberation Sans" text-anchor="start" font-weight="normal" transform="rotate(-90 424.5 522)">0.5 bn</text><text x="464.7" y="522" font-size="3.2" fill="#8aa8e8" font-family="Liberation Sans" text-anchor="start" font-weight="normal" transform="rotate(-90 464.7 522)">bk</text><text x="478" y="522" font-size="3.2" fill="#8aa8e8" font-family="Liberation Sans" text-anchor="start" font-weight="normal" transform="rotate(-90 478 522)">bk</text><path d="M558.3 535.0 L558.3 546.0" stroke="#000" stroke-width="1.3" fill="none" /><path d="M555.5 547.2L556.7 545.6H559.9L560.5 547.6" stroke="#000" fill="none" stroke-width="1.1"/><text x="556.8" y="541.5" font-size="3.6" fill="#a08870" font-family="Liberation Sans" text-anchor="start" font-weight="normal" transform="rotate(-90 556.8 541.5)">bk</text><path d="M555.8 495.0 L560.8 495.0" stroke="#444" stroke-width="0.7" fill="none" /><path d="M556.8 497.0 L559.8 493.0" stroke="#111" stroke-width="0.9" fill="none" /><path d="M572.5 535.0 L572.5 546.0" stroke="#000" stroke-width="1.3" fill="none" /><path d="M569.7 547.2L570.9 545.6H574.1L574.7 547.6" stroke="#000" fill="none" stroke-width="1.1"/><text x="571.0" y="541.5" font-size="3.6" fill="#a08870" font-family="Liberation Sans" text-anchor="start" font-weight="normal" transform="rotate(-90 571.0 541.5)">bk</text><path d="M570.0 495.0 L575.0 495.0" stroke="#444" stroke-width="0.7" fill="none" /><path d="M571.0 497.0 L574.0 493.0" stroke="#111" stroke-width="0.9" fill="none" /><path d="M585.4 535.0 L585.4 546.0" stroke="#000" stroke-width="1.3" fill="none" /><path d="M582.6 547.2L583.8 545.6H587.0L587.6 547.6" stroke="#000" fill="none" stroke-width="1.1"/><text x="583.9" y="541.5" font-size="3.6" fill="#a08870" font-family="Liberation Sans" text-anchor="start" font-weight="normal" transform="rotate(-90 583.9 541.5)">bk</text><path d="M582.9 495.0 L587.9 495.0" stroke="#444" stroke-width="0.7" fill="none" /><path d="M583.9 497.0 L586.9 493.0" stroke="#111" stroke-width="0.9" fill="none" /><path d="M598.4 537.0 L598.4 546.0" stroke="#000" stroke-width="1.3" fill="none" /><path d="M595.6 547.2L596.8 545.6H600.0L600.6 547.6" stroke="#000" fill="none" stroke-width="1.1"/><text x="596.9" y="541.5" font-size="3.6" fill="#a08870" font-family="Liberation Sans" text-anchor="start" font-weight="normal" transform="rotate(-90 596.9 541.5)">bk</text><path d="M611.3 535.0 L611.3 546.0" stroke="#000" stroke-width="1.3" fill="none" /><path d="M608.5 547.2L609.7 545.6H612.9L613.5 547.6" stroke="#000" fill="none" stroke-width="1.1"/><text x="609.8" y="541.5" font-size="3.6" fill="#a08870" font-family="Liberation Sans" text-anchor="start" font-weight="normal" transform="rotate(-90 609.8 541.5)">bk</text><path d="M608.8 495.0 L613.8 495.0" stroke="#444" stroke-width="0.7" fill="none" /><path d="M609.8 497.0 L612.8 493.0" stroke="#111" stroke-width="0.9" fill="none" /><path d="M624.2 537.0 L624.2 546.0" stroke="#000" stroke-width="1.3" fill="none" /><path d="M621.4 547.2L622.6 545.6H625.8L626.4 547.6" stroke="#000" fill="none" stroke-width="1.1"/><text x="622.7" y="541.5" font-size="3.6" fill="#a08870" font-family="Liberation Sans" text-anchor="start" font-weight="normal" transform="rotate(-90 622.7 541.5)">bk</text><path d="M637.1 537.0 L637.1 546.0" stroke="#000" stroke-width="1.3" fill="none" /><path d="M634.3 547.2L635.5 545.6H638.7L639.3 547.6" stroke="#000" fill="none" stroke-width="1.1"/><text x="635.6" y="541.5" font-size="3.6" fill="#a08870" font-family="Liberation Sans" text-anchor="start" font-weight="normal" transform="rotate(-90 635.6 541.5)">bk</text><path d="M650.9 535.0 L650.9 546.0" stroke="#000" stroke-width="1.3" fill="none" /><path d="M648.1 547.2L649.3 545.6H652.5L653.1 547.6" stroke="#000" fill="none" stroke-width="1.1"/><text x="649.4" y="541.5" font-size="3.6" fill="#a08870" font-family="Liberation Sans" text-anchor="start" font-weight="normal" transform="rotate(-90 649.4 541.5)">bk</text><path d="M648.4 495.0 L653.4 495.0" stroke="#444" stroke-width="0.7" fill="none" /><path d="M649.4 497.0 L652.4 493.0" stroke="#111" stroke-width="0.9" fill="none" /><path d="M664.1 535.0 L664.1 546.0" stroke="#000" stroke-width="1.3" fill="none" /><path d="M661.3 547.2L662.5 545.6H665.7L666.3 547.6" stroke="#000" fill="none" stroke-width="1.1"/><text x="662.6" y="541.5" font-size="3.6" fill="#a08870" font-family="Liberation Sans" text-anchor="start" font-weight="normal" transform="rotate(-90 662.6 541.5)">bk</text><path d="M661.6 495.0 L666.6 495.0" stroke="#444" stroke-width="0.7" fill="none" /><path d="M662.6 497.0 L665.6 493.0" stroke="#111" stroke-width="0.9" fill="none" /><path d="M677.4 536.0 L677.4 547.0" stroke="#000" stroke-width="1.3" fill="none" /><text x="553" y="539" font-size="5" fill="#806040" font-family="Liberation Sans" text-anchor="start" font-weight="bold" transform="rotate(-90 553 539)">-X3</text><text x="636" y="496" font-size="3.5" fill="#888" font-family="Liberation Sans" text-anchor="start" font-weight="normal">W20</text><text x="570.5" y="522" font-size="3.2" fill="#8aa8e8" font-family="Liberation Sans" text-anchor="start" font-weight="normal" transform="rotate(-90 570.5 522)">bl</text><text x="583.4" y="522" font-size="3.2" fill="#8aa8e8" font-family="Liberation Sans" text-anchor="start" font-weight="normal" transform="rotate(-90 583.4 522)">bl</text><text x="609.3" y="522" font-size="3.2" fill="#8aa8e8" font-family="Liberation Sans" text-anchor="start" font-weight="normal" transform="rotate(-90 609.3 522)">bl</text><text x="648.9" y="522" font-size="3.2" fill="#8aa8e8" font-family="Liberation Sans" text-anchor="start" font-weight="normal" transform="rotate(-90 648.9 522)">0.5 bl</text><text x="662.1" y="522" font-size="3.2" fill="#8aa8e8" font-family="Liberation Sans" text-anchor="start" font-weight="normal" transform="rotate(-90 662.1 522)">0.5 bl</text></svg></div><div style="position:absolute;left:210px;top:661px;width:917px;height:35px;background:#e6e6e6;"></div><div style="position:absolute;left:214px;top:670px;font-size:18px;line-height:18px;color:#454545;white-space:nowrap;">Messages</div><svg style="position:absolute;left:1073px;top:677px;" width="10" height="5" viewBox="0 0 10 5"><path d="M0 0H10L5 5Z" fill="#6a6a6a"/></svg><svg style="position:absolute;left:1093px;top:673px;" width="9" height="12" viewBox="0 0 9 12"><path d="M1.5 0.5H7.5V6.5H1.5ZM0 6.5H9M4.5 6.5V11.5M4 1V6" stroke="#6a6a6a" fill="none" stroke-width="1.2"/></svg><svg style="position:absolute;left:1112px;top:675px;" width="9" height="9" viewBox="0 0 9 9"><path d="M0.5 0.5L8.5 8.5M8.5 0.5L0.5 8.5" stroke="#6a6a6a" stroke-width="1.4"/></svg><div style="position:absolute;left:210px;top:696px;width:901px;height:66px;background:#fff;"></div><div style="position:absolute;left:212px;top:697px;font-family:'Liberation Mono',monospace;font-size:13.3px;line-height:13px;color:#111;white-space:nowrap;">Updating symbol Signal_vert.</div><div style="position:absolute;left:212px;top:710px;font-family:'Liberation Mono',monospace;font-size:13.3px;line-height:13px;color:#111;white-space:nowrap;">Updating symbol Tab-Horizontal.</div><div style="position:absolute;left:212px;top:723px;font-family:'Liberation Mono',monospace;font-size:13.3px;line-height:13px;color:#111;white-space:nowrap;">Updating symbol TableSymbolFB.</div><div style="position:absolute;left:212px;top:736px;font-family:'Liberation Mono',monospace;font-size:13.3px;line-height:13px;color:#111;white-space:nowrap;">Updating symbol TABWIRE.</div><div style="position:absolute;left:212px;top:749px;font-family:'Liberation Mono',monospace;font-size:13.3px;line-height:13px;color:#111;white-space:nowrap;">Updating symbol TABWIRE2.</div><div style="position:absolute;left:1111px;top:696px;width:16px;height:66px;background:#f0f0f0;"></div><div style="position:absolute;left:1112px;top:727px;width:14px;height:16px;background:#c8c8c8;"></div><svg style="position:absolute;left:1114px;top:705px;" width="9" height="6" viewBox="0 0 9 6"><path d="M0.5 5.5L4.5 1L8.5 5.5" stroke="#333" stroke-width="1.5" fill="none"/></svg><svg style="position:absolute;left:1114px;top:749px;" width="9" height="6" viewBox="0 0 9 6"><path d="M0.5 0.5L4.5 5L8.5 0.5" stroke="#333" stroke-width="1.5" fill="none"/></svg><div style="position:absolute;left:210px;top:762px;width:901px;height:16px;background:#f0f0f0;"></div><div style="position:absolute;left:226px;top:763px;width:679px;height:14px;background:#c8c8c8;"></div><svg style="position:absolute;left:215px;top:766px;" width="5" height="8" viewBox="0 0 5 8"><path d="M4.5 0.5L1 4L4.5 7.5" stroke="#606060" stroke-width="1.5" fill="none"/></svg><svg style="position:absolute;left:1100px;top:766px;" width="5" height="8" viewBox="0 0 5 8"><path d="M0.5 0.5L4 4L0.5 7.5" stroke="#606060" stroke-width="1.5" fill="none"/></svg><div style="position:absolute;left:1111px;top:762px;width:16px;height:16px;background:#f0f0f0;"></div><div style="position:absolute;left:210px;top:778px;width:917px;height:1px;background:#d0d0d0;"></div><div style="position:absolute;left:211px;top:779px;width:77px;height:21px;background:#fff;border:1px solid #d8d8d8;border-bottom:none;box-sizing:border-box;"></div><div style="position:absolute;left:212px;top:796px;width:75px;height:3px;background:#c5d5f0;"></div><svg style="position:absolute;left:214px;top:781px;" width="16" height="13" viewBox="0 0 16 13"><rect x="0.5" y="0.5" width="15" height="12" fill="#fff" stroke="#2a3340"/><rect x="1" y="1" width="14" height="2" fill="#2a3340"/><path d="M3 6H13M3 9H10" stroke="#2a3340"/></svg><div style="position:absolute;left:232px;top:783.5px;font-size:11px;line-height:11px;color:#3a3a3a;white-space:nowrap;">Messages</div><div style="position:absolute;left:291px;top:796px;width:62px;height:3px;background:#f8d878;"></div><svg style="position:absolute;left:292px;top:781px;" width="16" height="13" viewBox="0 0 16 13"><rect x="0.5" y="0.5" width="15" height="12" fill="#fff" stroke="#2a3340"/><rect x="1" y="1" width="14" height="2" fill="#2a3340"/><path d="M3 6H13M3 9H10" stroke="#2a3340"/></svg><div style="position:absolute;left:311px;top:783.5px;font-size:11px;line-height:11px;color:#3a3a3a;white-space:nowrap;">Results</div><div style="position:absolute;left:1137px;top:147px;font-size:18px;line-height:18px;color:#454545;white-space:nowrap;">DS-E3/Commander</div><svg style="position:absolute;left:1384px;top:154px;" width="10" height="5" viewBox="0 0 10 5"><path d="M0 0H10L5 5Z" fill="#6a6a6a"/></svg><svg style="position:absolute;left:1404px;top:150px;" width="9" height="12" viewBox="0 0 9 12"><path d="M1.5 0.5H7.5V6.5H1.5ZM0 6.5H9M4.5 6.5V11.5M4 1V6" stroke="#6a6a6a" fill="none" stroke-width="1.2"/></svg><svg style="position:absolute;left:1423px;top:152px;" width="9" height="9" viewBox="0 0 9 9"><path d="M0.5 0.5L8.5 8.5M8.5 0.5L0.5 8.5" stroke="#6a6a6a" stroke-width="1.4"/></svg><div style="position:absolute;left:1133px;top:173px;width:304px;height:589px;background:#fff;"></div><div style="position:absolute;left:1437px;top:138px;width:3px;height:662px;background:#e6e6e6;"></div><div style="position:absolute;left:1144px;top:174px;width:1px;height:8px;background:repeating-linear-gradient(180deg,#333 0 1px,transparent 1px 2px);"></div><svg style="position:absolute;left:1141px;top:182px;" width="7" height="7" viewBox="0 0 7 7"><path d="M7 0V7H0Z" fill="#222"/></svg><div style="position:absolute;left:1148px;top:185px;width:9px;height:1px;background:repeating-linear-gradient(90deg,#333 0 1px,transparent 1px 2px);"></div><svg style="position:absolute;left:1162px;top:177px;" width="16" height="16" viewBox="0 0 16 16"><rect x="6.5" y="1.5" width="3" height="3" fill="#8cc0f0" stroke="#5a9ae0"/><path d="M8 5V7.5M3.5 7.5H12.5V10M3.5 7.5V10M8 7.5V10" stroke="#999" fill="none" stroke-width=".8"/><rect x="2" y="11" width="3" height="3" fill="#70c070" stroke="#3a9a3a" stroke-width=".8"/><rect x="6.5" y="11" width="3" height="3" fill="#70c070" stroke="#3a9a3a" stroke-width=".8"/><rect x="11" y="11" width="3" height="3" fill="#3a9a3a" stroke="#2a8a2a" stroke-width=".8"/></svg><div style="position:absolute;left:1133px;top:173px;width:304px;height:588px;overflow:hidden;"><div style="position:absolute;left:51px;top:4px;font-size:14px;line-height:14px;color:#333;white-space:nowrap;">ROOT ( Account : admin , Role : KeyUser )</div></div><div style="position:absolute;left:1168px;top:196px;width:1px;height:206px;background:repeating-linear-gradient(180deg,#333 0 1px,transparent 1px 2px);"></div><svg style="position:absolute;left:1164px;top:206px;" width="7" height="7" viewBox="0 0 7 7"><path d="M7 0V7H0Z" fill="#222"/></svg><div style="position:absolute;left:1171px;top:209px;width:9px;height:1px;background:repeating-linear-gradient(90deg,#333 0 1px,transparent 1px 2px);"></div><svg style="position:absolute;left:1186px;top:201px;" width="16" height="16" viewBox="0 0 16 16"><path d="M0.5 0.5H15.5V5L12 7.5H4L0.5 5Z" fill="#d08838" stroke="#8a5018"/><rect x="4" y="2" width="8" height="2.5" fill="#a06020"/><path d="M4 7.5H12L15.5 10V15.5H0.5V10Z" fill="#d89850" stroke="#8a5018"/><path d="M5 13Q8 16 11 13" stroke="#ddd" stroke-width="1.5" fill="none"/></svg><div style="position:absolute;left:1208px;top:202px;font-size:14px;line-height:14px;color:#333;white-space:nowrap;">Projects</div><div style="position:absolute;left:1192px;top:217px;width:1px;height:41px;background:repeating-linear-gradient(180deg,#333 0 1px,transparent 1px 2px);"></div><svg style="position:absolute;left:1190px;top:229px;" width="6" height="9" viewBox="0 0 6 9"><path d="M0.5 0.5L5.5 4.5L0.5 8.5Z" fill="#fff" stroke="#a0a0a0"/></svg><div style="position:absolute;left:1196px;top:233px;width:9px;height:1px;background:repeating-linear-gradient(90deg,#333 0 1px,transparent 1px 2px);"></div><svg style="position:absolute;left:1211px;top:225px;" width="15" height="16" viewBox="0 0 15 16"><rect x="0.5" y="0.5" width="13" height="15" fill="#fff" stroke="#b0b0b0"/><path d="M3 13L11 3L13 5L5 14L2 15Z" fill="#f0b030" stroke="#a06010"/></svg><div style="position:absolute;left:1232px;top:226px;font-size:14px;line-height:14px;color:#333;white-space:nowrap;">2020.1</div><div style="position:absolute;left:1205px;top:245px;width:92px;height:24px;background:#c6e8fa;border:1px solid #9ed6f4;box-sizing:border-box;"></div><svg style="position:absolute;left:1188px;top:254px;" width="7" height="7" viewBox="0 0 7 7"><path d="M7 0V7H0Z" fill="#222"/></svg><div style="position:absolute;left:1195px;top:257px;width:10px;height:1px;background:repeating-linear-gradient(90deg,#333 0 1px,transparent 1px 2px);"></div><svg style="position:absolute;left:1210px;top:250px;" width="16" height="14" viewBox="0 0 16 14"><path d="M0.5 2Q0.5 0.5 2 0.5H6L7.5 2.5H14Q15.5 2.5 15.5 4V12Q15.5 13.5 14 13.5H2Q0.5 13.5 0.5 12Z" fill="#f0c850" stroke="#c09030"/><path d="M1 5H15" stroke="#fff8d0"/></svg><div style="position:absolute;left:1232px;top:250px;font-size:14px;line-height:14px;color:#333;white-space:nowrap;">2020.1.01</div><div style="position:absolute;left:1216px;top:269px;width:1px;height:13px;background:repeating-linear-gradient(180deg,#333 0 1px,transparent 1px 2px);"></div><svg style="position:absolute;left:1214px;top:277px;" width="6" height="9" viewBox="0 0 6 9"><path d="M0.5 0.5L5.5 4.5L0.5 8.5Z" fill="#fff" stroke="#a0a0a0"/></svg><div style="position:absolute;left:1220px;top:281px;width:9px;height:1px;background:repeating-linear-gradient(90deg,#333 0 1px,transparent 1px 2px);"></div><svg style="position:absolute;left:1234px;top:273px;" width="16" height="16" viewBox="0 0 16 16"><rect x="0.5" y="0.5" width="15" height="15" fill="#fff" stroke="#d01010" stroke-width="1.5"/><path d="M2 2L14 14" stroke="#20c020" stroke-width="3"/><path d="M1 1L5 2L2 5Z" fill="#111"/><path d="M4 15H15V4" stroke="#7080c0" stroke-dasharray="1 1" fill="none"/></svg><div style="position:absolute;left:1256px;top:274px;font-size:14px;line-height:14px;color:#333;white-space:nowrap;">PowerCharger</div><div style="position:absolute;left:1169px;top:305px;width:12px;height:1px;background:repeating-linear-gradient(90deg,#333 0 1px,transparent 1px 2px);"></div><div style="position:absolute;left:1208px;top:298px;font-size:14px;line-height:14px;color:#333;white-space:nowrap;">Shortcut</div><div style="position:absolute;left:1169px;top:329px;width:12px;height:1px;background:repeating-linear-gradient(90deg,#333 0 1px,transparent 1px 2px);"></div><div style="position:absolute;left:1208px;top:322px;font-size:14px;line-height:14px;color:#333;white-space:nowrap;">Favorites</div><div style="position:absolute;left:1169px;top:353px;width:12px;height:1px;background:repeating-linear-gradient(90deg,#333 0 1px,transparent 1px 2px);"></div><div style="position:absolute;left:1208px;top:346px;font-size:14px;line-height:14px;color:#333;white-space:nowrap;">Newly Available Import files</div><div style="position:absolute;left:1169px;top:377px;width:12px;height:1px;background:repeating-linear-gradient(90deg,#333 0 1px,transparent 1px 2px);"></div><div style="position:absolute;left:1208px;top:370px;font-size:14px;line-height:14px;color:#333;white-space:nowrap;">Administration</div><div style="position:absolute;left:1169px;top:401px;width:12px;height:1px;background:repeating-linear-gradient(90deg,#333 0 1px,transparent 1px 2px);"></div><div style="position:absolute;left:1208px;top:394px;font-size:14px;line-height:14px;color:#333;white-space:nowrap;">Logout</div><svg style="position:absolute;left:1166px;top:373px;" width="6" height="9" viewBox="0 0 6 9"><path d="M0.5 0.5L5.5 4.5L0.5 8.5Z" fill="#fff" stroke="#a0a0a0"/></svg><svg style="position:absolute;left:1186px;top:297px;" width="16" height="16" viewBox="0 0 16 16"><path d="M1.5 0.5H10L14.5 5V15.5H1.5Z" fill="#e8f2fc" stroke="#4a80c0"/><path d="M7 9H11V6L15 11L11 15V12H7Z" fill="#40a040" stroke="#207020" stroke-width=".5"/></svg><svg style="position:absolute;left:1186px;top:321px;" width="16" height="16" viewBox="0 0 16 16"><path d="M8 0.5L10.3 5.5L15.5 6L11.5 9.5L12.8 15L8 12L3.2 15L4.5 9.5L0.5 6L5.7 5.5Z" fill="#f4c030" stroke="#d09010"/></svg><svg style="position:absolute;left:1186px;top:345px;" width="16" height="16" viewBox="0 0 16 16"><rect x="1.5" y="1.5" width="13" height="14" fill="#e8f2fc" stroke="#4a80c0"/><path d="M4 13L12 4L14 6L6 14L3 15Z" fill="#f0b030" stroke="#a06010"/></svg><svg style="position:absolute;left:1186px;top:369px;" width="16" height="16" viewBox="0 0 16 16"><circle cx="8" cy="8" r="5" fill="none" stroke="#a8a8a8" stroke-width="3"/><path d="M8 0V16M0 8H16M2.5 2.5L13.5 13.5M13.5 2.5L2.5 13.5" stroke="#a8a8a8" stroke-width="2.5"/><circle cx="8" cy="8" r="2.5" fill="#fff"/></svg><svg style="position:absolute;left:1186px;top:393px;" width="16" height="16" viewBox="0 0 16 16"><path d="M1 4Q1 1 4 1H12Q15 1 15 4V6H11V4H5V6H1Z" fill="#5a90d0"/><rect x="2" y="7" width="12" height="8" fill="#5a90d0"/><rect x="4" y="8" width="8" height="4" fill="#c0d8f0"/><circle cx="12" cy="13" r="3.5" fill="#e85020"/><path d="M10 13H14" stroke="#fff" stroke-width="1.3"/></svg><div style="position:absolute;left:1133px;top:762px;width:304px;height:16px;background:#f0f0f0;"></div><div style="position:absolute;left:1150px;top:763px;width:256px;height:14px;background:#c8c8c8;"></div><svg style="position:absolute;left:1139px;top:766px;" width="5" height="8" viewBox="0 0 5 8"><path d="M5 0V8L0 4Z" fill="#a0a0a0"/></svg><svg style="position:absolute;left:1425px;top:766px;" width="5" height="8" viewBox="0 0 5 8"><path d="M0 0V8L5 4Z" fill="#202020"/></svg><div style="position:absolute;left:1133px;top:778px;width:304px;height:22px;background:#e6e6e6;"></div><div style="position:absolute;left:1133px;top:778px;width:42px;height:22px;background:#fff;border:1px solid #d8d8d8;border-bottom:none;box-sizing:border-box;"></div><div style="position:absolute;left:1134px;top:796px;width:40px;height:3px;background:#c5d5f0;"></div><div style="position:absolute;left:1139px;top:782.5px;font-size:10.5px;line-height:10.5px;color:#3a3a3a;white-space:nowrap;">DS-E...</div><div style="position:absolute;left:1177px;top:796px;width:38px;height:3px;background:#f8d878;"></div><div style="position:absolute;left:1181px;top:782.5px;font-size:10.5px;line-height:10.5px;color:#3a3a3a;white-space:nowrap;">DS-E...</div><div style="position:absolute;left:1219px;top:796px;width:38px;height:3px;background:#b5cc9a;"></div><div style="position:absolute;left:1223px;top:782.5px;font-size:10.5px;line-height:10.5px;color:#3a3a3a;white-space:nowrap;">DS-E...</div><div style="position:absolute;left:1261px;top:796px;width:38px;height:3px;background:#eca0a0;"></div><div style="position:absolute;left:1265px;top:782.5px;font-size:10.5px;line-height:10.5px;color:#3a3a3a;white-space:nowrap;">DS-E...</div><div style="position:absolute;left:1303px;top:796px;width:38px;height:3px;background:#c4b0e0;"></div><div style="position:absolute;left:1307px;top:782.5px;font-size:10.5px;line-height:10.5px;color:#3a3a3a;white-space:nowrap;">Previ...</div><div style="position:absolute;left:1345px;top:796px;width:38px;height:3px;background:#a8ccb8;"></div><div style="position:absolute;left:1349px;top:782.5px;font-size:10.5px;line-height:10.5px;color:#3a3a3a;white-space:nowrap;">DS-E...</div><div style="position:absolute;left:1387px;top:796px;width:38px;height:3px;background:#f8b880;"></div><div style="position:absolute;left:1391px;top:782.5px;font-size:10.5px;line-height:10.5px;color:#3a3a3a;white-space:nowrap;">DS-E...</div><div style="position:absolute;left:2px;top:800px;width:1438px;height:29px;background:#e6e6e6;"></div><div style="position:absolute;left:4px;top:801px;width:801px;height:27px;background:#f0f0f0;border-radius:4px;"></div><div style="position:absolute;left:8px;top:806px;width:2px;height:2px;background:#a8a8a8;"></div><div style="position:absolute;left:8px;top:810px;width:2px;height:2px;background:#a8a8a8;"></div><div style="position:absolute;left:8px;top:814px;width:2px;height:2px;background:#a8a8a8;"></div><div style="position:absolute;left:8px;top:818px;width:2px;height:2px;background:#a8a8a8;"></div><svg style="position:absolute;left:18px;top:806px;overflow:visible" width="16" height="16" viewBox="0.9 0.9 14.2 14.2"><path d="M2 15L14 2" stroke="#2a3340" stroke-width="1"/></svg><svg style="position:absolute;left:43px;top:806px;overflow:visible" width="16" height="16" viewBox="0.9 0.9 14.2 14.2"><path d="M8 1.5L14.5 6.5L12 14.5H4L1.5 6.5Z" fill="none" stroke="#2a3340" stroke-width="1"/></svg><svg style="position:absolute;left:68px;top:806px;overflow:visible" width="16" height="16" viewBox="0.9 0.9 14.2 14.2"><rect x="4.5" y="1.5" width="7" height="13" fill="none" stroke="#2a3340" stroke-width="1"/></svg><svg style="position:absolute;left:93px;top:806px;overflow:visible" width="16" height="16" viewBox="0.9 0.9 14.2 14.2"><path d="M2 4C4 0 9 1 7 6C5 10 7 15 12 14" stroke="#2a3340" stroke-width="1" fill="none"/></svg><svg style="position:absolute;left:118px;top:806px;overflow:visible" width="16" height="16" viewBox="0.9 0.9 14.2 14.2"><circle cx="8" cy="8" r="6.5" fill="none" stroke="#2a3340" stroke-width="1"/></svg><svg style="position:absolute;left:143px;top:806px;overflow:visible" width="16" height="16" viewBox="0.9 0.9 14.2 14.2"><path d="M4 14A6.5 6.5 0 1 1 14 6" stroke="#2a3340" stroke-width="1" fill="none"/></svg><svg style="position:absolute;left:168px;top:806px;overflow:visible" width="16" height="16" viewBox="0.9 0.9 14.2 14.2"><path d="M4 14A6.5 6.5 0 1 1 14 6" stroke="#2a3340" stroke-width="1" fill="none"/><rect x="2" y="1.5" width="2.5" height="2.5" fill="#5a9be6"/><rect x="13" y="5" width="2.5" height="2.5" fill="#5a9be6"/><rect x="4" y="13" width="2.5" height="2.5" fill="#5a9be6"/></svg><svg style="position:absolute;left:193px;top:806px;overflow:visible" width="16" height="16" viewBox="0.9 0.9 14.2 14.2"><path d="M4 13C0 13 0 8 3 8C2 4 8 3 9 6C11 3 15 5 14 9C16 11 14 14 11 13C9 15 6 15 4 13Z" fill="none" stroke="#2a3340" stroke-width="1"/></svg><svg style="position:absolute;left:218px;top:806px;overflow:visible" width="16" height="16" viewBox="0.9 0.9 14.2 14.2"><path d="M3 3L13 13M1 5L5 1M11 15L15 11" stroke="#2a3340" stroke-width="1"/><path d="M3 3L6 3.5L3.5 6ZM13 13L10 12.5L12.5 10Z" fill="#2a3340"/></svg><svg style="position:absolute;left:243px;top:806px;overflow:visible" width="16" height="16" viewBox="0.9 0.9 14.2 14.2"><path d="M4 2H12M8 2V14M4 14H12" stroke="#2a3340" stroke-width="1"/><path d="M8 9V14" stroke="#2a3340" stroke-width="1"/></svg><div style="position:absolute;left:268px;top:804px;width:1px;height:21px;background:#cfcfcf;"></div><div style="position:absolute;left:278px;top:819px;width:16px;height:5px;background:#000;"></div><svg style="position:absolute;left:301px;top:816px;" width="7" height="4" viewBox="0 0 7 4"><path d="M0 0H7L3.5 4.0Z" fill="#666"/></svg><div style="position:absolute;left:312px;top:806px;width:64px;height:17px;background:#fff;border:1px solid #b8b8b8;box-sizing:border-box;"></div><div style="position:absolute;left:316px;top:809.1px;font-size:11.5px;line-height:11.5px;color:#222;white-space:nowrap;">1.5 mm</div><div style="position:absolute;left:359px;top:807px;width:16px;height:15px;background:#d8d8d8;"></div><div style="position:absolute;left:360px;top:808px;width:14px;height:6px;background:#f0f0f0;border:1px solid #a8a8a8;box-sizing:border-box;"></div><div style="position:absolute;left:360px;top:814px;width:14px;height:6px;background:#f0f0f0;border:1px solid #a8a8a8;box-sizing:border-box;"></div><svg style="position:absolute;left:364px;top:810px;" width="7" height="4" viewBox="0 0 7 4"><path d="M0 4H7L3.5 0Z" fill="#111"/></svg><svg style="position:absolute;left:364px;top:815px;" width="7" height="4" viewBox="0 0 7 4"><path d="M0 0H7L3.5 4Z" fill="#111"/></svg><div style="position:absolute;left:383px;top:806px;width:114px;height:17px;background:#fff;border:1px solid #c0c0c0;box-sizing:border-box;"></div><div style="position:absolute;left:390px;top:814px;width:87px;height:1px;background:#111;"></div><svg style="position:absolute;left:484px;top:814px;" width="6" height="4" viewBox="0 0 6 4"><path d="M0 0H6L3.0 3.4Z" fill="#666"/></svg><div style="position:absolute;left:505px;top:804px;width:1px;height:21px;background:#cfcfcf;"></div><svg style="position:absolute;left:512px;top:806px;overflow:visible" width="16" height="16" viewBox="0.9 0.9 14.2 14.2"><rect x="1.5" y="1.5" width="7" height="7" fill="none" stroke="#c4c4c4" stroke-dasharray="1.5 1"/><rect x="5.5" y="5.5" width="8" height="8" fill="#f0f0f0" stroke="#c4c4c4" stroke-width="1"/></svg><svg style="position:absolute;left:537px;top:806px;overflow:visible" width="16" height="16" viewBox="0.9 0.9 14.2 14.2"><rect x="1.5" y="1.5" width="13" height="13" fill="none" stroke="#c4c4c4" stroke-dasharray="1.5 1"/><rect x="5.5" y="5.5" width="7" height="7" fill="#f0f0f0" stroke="#c4c4c4" stroke-width="1"/></svg><svg style="position:absolute;left:562px;top:806px;overflow:visible" width="16" height="16" viewBox="0.9 0.9 14.2 14.2"><rect x="1.5" y="1.5" width="9" height="9" fill="#c4c4c4" opacity=".5"/><rect x="5.5" y="5.5" width="9" height="9" fill="#f0f0f0" stroke="#c4c4c4" stroke-width="1"/><path d="M7 8H13M7 11H13" stroke="#c4c4c4"/></svg><svg style="position:absolute;left:587px;top:806px;overflow:visible" width="16" height="16" viewBox="0.9 0.9 14.2 14.2"><rect x="1.5" y="1.5" width="13" height="13" fill="none" stroke="#c4c4c4" stroke-dasharray="1.5 1"/><rect x="4.5" y="4.5" width="7" height="7" fill="none" stroke="#c4c4c4" stroke-width="1"/></svg><svg style="position:absolute;left:612px;top:806px;overflow:visible" width="16" height="16" viewBox="0.9 0.9 14.2 14.2"><rect x="1.5" y="1.5" width="13" height="13" fill="none" stroke="#c4c4c4" stroke-width="1"/><rect x="6.5" y="5.5" width="7" height="8" fill="#c4c4c4"/></svg><svg style="position:absolute;left:645px;top:806px;overflow:visible" width="16" height="16" viewBox="0.9 0.9 14.2 14.2"><rect x="1" y="1" width="8" height="8" fill="#c4c4c4"/><rect x="6.5" y="6.5" width="8" height="8" fill="#f0f0f0" stroke="#c4c4c4" stroke-width="1"/></svg><svg style="position:absolute;left:670px;top:806px;overflow:visible" width="16" height="16" viewBox="0.9 0.9 14.2 14.2"><rect x="1" y="1" width="9" height="9" fill="#c4c4c4"/><rect x="7.5" y="7.5" width="7" height="7" fill="#f0f0f0" stroke="#c4c4c4" stroke-width="1"/></svg><svg style="position:absolute;left:694px;top:806px;overflow:visible" width="16" height="16" viewBox="0.9 0.9 14.2 14.2"><rect x="1" y="1" width="9" height="9" fill="#c4c4c4"/><rect x="6.5" y="6.5" width="8" height="8" fill="#fff" stroke="#c4c4c4" stroke-width="1"/></svg><svg style="position:absolute;left:719px;top:806px;overflow:visible" width="16" height="16" viewBox="0.9 0.9 14.2 14.2"><rect x="1" y="1" width="9" height="9" fill="#c4c4c4"/><rect x="6.5" y="6.5" width="8" height="8" fill="#fff" stroke="#c4c4c4" stroke-width="1"/></svg><svg style="position:absolute;left:744px;top:806px;overflow:visible" width="16" height="16" viewBox="0.9 0.9 14.2 14.2"><rect x="1.5" y="1.5" width="13" height="11" fill="#fff" stroke="#2a3340" stroke-width="1"/><rect x="4" y="3" width="6" height="6" fill="#f5b800" stroke="#2a3340"/><path d="M8 15L15 8M8 8L15 15" stroke="#5a9be6" stroke-width="1"/></svg><svg style="position:absolute;left:770px;top:806px;overflow:visible" width="16" height="16" viewBox="0.9 0.9 14.2 14.2"><path d="M3 2V15M13 2V15" stroke="#c4c4c4" stroke-dasharray="1.5 1.5"/><path d="M5 8H10" stroke="#c4c4c4"/><path d="M10 6V10L12 8Z" fill="#c4c4c4"/></svg><div style="position:absolute;left:638px;top:804px;width:1px;height:21px;background:#cfcfcf;"></div><svg style="position:absolute;left:793px;top:821px;" width="7" height="4" viewBox="0 0 7 4"><path d="M0 0H7L3.5 4.0Z" fill="#666"/></svg><div style="position:absolute;left:807px;top:801px;width:463px;height:27px;background:#f0f0f0;border-radius:4px;"></div><div style="position:absolute;left:811px;top:806px;width:2px;height:2px;background:#a8a8a8;"></div><div style="position:absolute;left:811px;top:810px;width:2px;height:2px;background:#a8a8a8;"></div><div style="position:absolute;left:811px;top:814px;width:2px;height:2px;background:#a8a8a8;"></div><div style="position:absolute;left:811px;top:818px;width:2px;height:2px;background:#a8a8a8;"></div><svg style="position:absolute;left:820px;top:806px;overflow:visible" width="16" height="16" viewBox="0.9 0.9 14.2 14.2"><path d="M2 2.5H14M8 2.5V15" stroke="#2a3340" stroke-width="1.6"/></svg><div style="position:absolute;left:843px;top:804px;width:145px;height:22px;background:#fff;border:1px solid #c0c0c0;box-sizing:border-box;"></div><div style="position:absolute;left:848px;top:809.6px;font-size:11.5px;line-height:11.5px;color:#222;white-space:nowrap;">Arial</div><svg style="position:absolute;left:975px;top:815px;" width="6" height="4" viewBox="0 0 6 4"><path d="M0 0H6L3.0 3.4Z" fill="#666"/></svg><div style="position:absolute;left:993px;top:804px;width:65px;height:22px;background:#fff;border:1px solid #c0c0c0;box-sizing:border-box;"></div><div style="position:absolute;left:998px;top:809.6px;font-size:11.5px;line-height:11.5px;color:#222;white-space:nowrap;">2.5 mm</div><svg style="position:absolute;left:1045px;top:815px;" width="6" height="4" viewBox="0 0 6 4"><path d="M0 0H6L3.0 3.4Z" fill="#666"/></svg><div style="position:absolute;left:1067px;top:819px;width:16px;height:5px;background:#000;"></div><svg style="position:absolute;left:1090px;top:816px;" width="7" height="4" viewBox="0 0 7 4"><path d="M0 0H7L3.5 4.0Z" fill="#666"/></svg><div style="position:absolute;left:1103px;top:805px;font-size:18px;line-height:18px;color:#2a3340;white-space:nowrap;">B</div><div style="position:absolute;left:1130px;top:806px;font-size:17px;line-height:17px;color:#2a3340;white-space:nowrap;font-family:"Liberation Serif";"><i>I</i></div><div style="position:absolute;left:1154px;top:806px;font-size:16px;line-height:16px;color:#2a3340;white-space:nowrap;text-decoration:underline;">U</div><div style="position:absolute;left:1178px;top:804px;width:1px;height:21px;background:#cfcfcf;"></div><div style="position:absolute;left:1183px;top:803px;width:23px;height:22px;background:#c8c8c8;"></div><svg style="position:absolute;left:1186px;top:806px;overflow:visible" width="16" height="16" viewBox="0.9 0.9 14.2 14.2"><path d="M2 3H14M2 7H10M2 11H14M2 15H10" stroke="#2a3340" stroke-width="1"/></svg><svg style="position:absolute;left:1211px;top:806px;overflow:visible" width="16" height="16" viewBox="0.9 0.9 14.2 14.2"><path d="M2 3H14M4 7H12M2 11H14M4 15H12" stroke="#2a3340" stroke-width="1"/></svg><svg style="position:absolute;left:1236px;top:806px;overflow:visible" width="16" height="16" viewBox="0.9 0.9 14.2 14.2"><path d="M2 3H14M6 7H14M2 11H14M6 15H14" stroke="#2a3340" stroke-width="1"/></svg><svg style="position:absolute;left:1259px;top:821px;" width="7" height="4" viewBox="0 0 7 4"><path d="M0 0H7L3.5 4.0Z" fill="#666"/></svg><div style="position:absolute;left:2px;top:829px;width:1438px;height:21px;background:#f0f0f0;"></div><div style="position:absolute;left:10px;top:835px;font-size:11px;line-height:11px;color:#222;white-space:nowrap;">Ready</div><div style="position:absolute;left:1200px;top:835px;font-size:11px;line-height:11px;color:#222;white-space:nowrap;">281.241,28.488</div><div style="position:absolute;left:1306px;top:835px;font-size:11px;line-height:11px;color:#222;white-space:nowrap;">MM</div><div style="position:absolute;left:1336px;top:835px;font-size:10.5px;line-height:10.5px;color:#999;white-space:nowrap;">CAP</div><div style="position:absolute;left:1362px;top:835px;font-size:11px;line-height:11px;color:#222;white-space:nowrap;">NUM</div><div style="position:absolute;left:1394px;top:835px;font-size:11px;line-height:11px;color:#999;white-space:nowrap;">SCRL</div><div style="position:absolute;left:1434px;top:836px;width:2px;height:2px;background:#999;"></div><div style="position:absolute;left:1431px;top:839px;width:2px;height:2px;background:#999;"></div><div style="position:absolute;left:1434px;top:839px;width:2px;height:2px;background:#999;"></div><div style="position:absolute;left:1428px;top:842px;width:2px;height:2px;background:#999;"></div><div style="position:absolute;left:1431px;top:842px;width:2px;height:2px;background:#999;"></div><div style="position:absolute;left:1434px;top:842px;width:2px;height:2px;background:#999;"></div>
</body></html>
